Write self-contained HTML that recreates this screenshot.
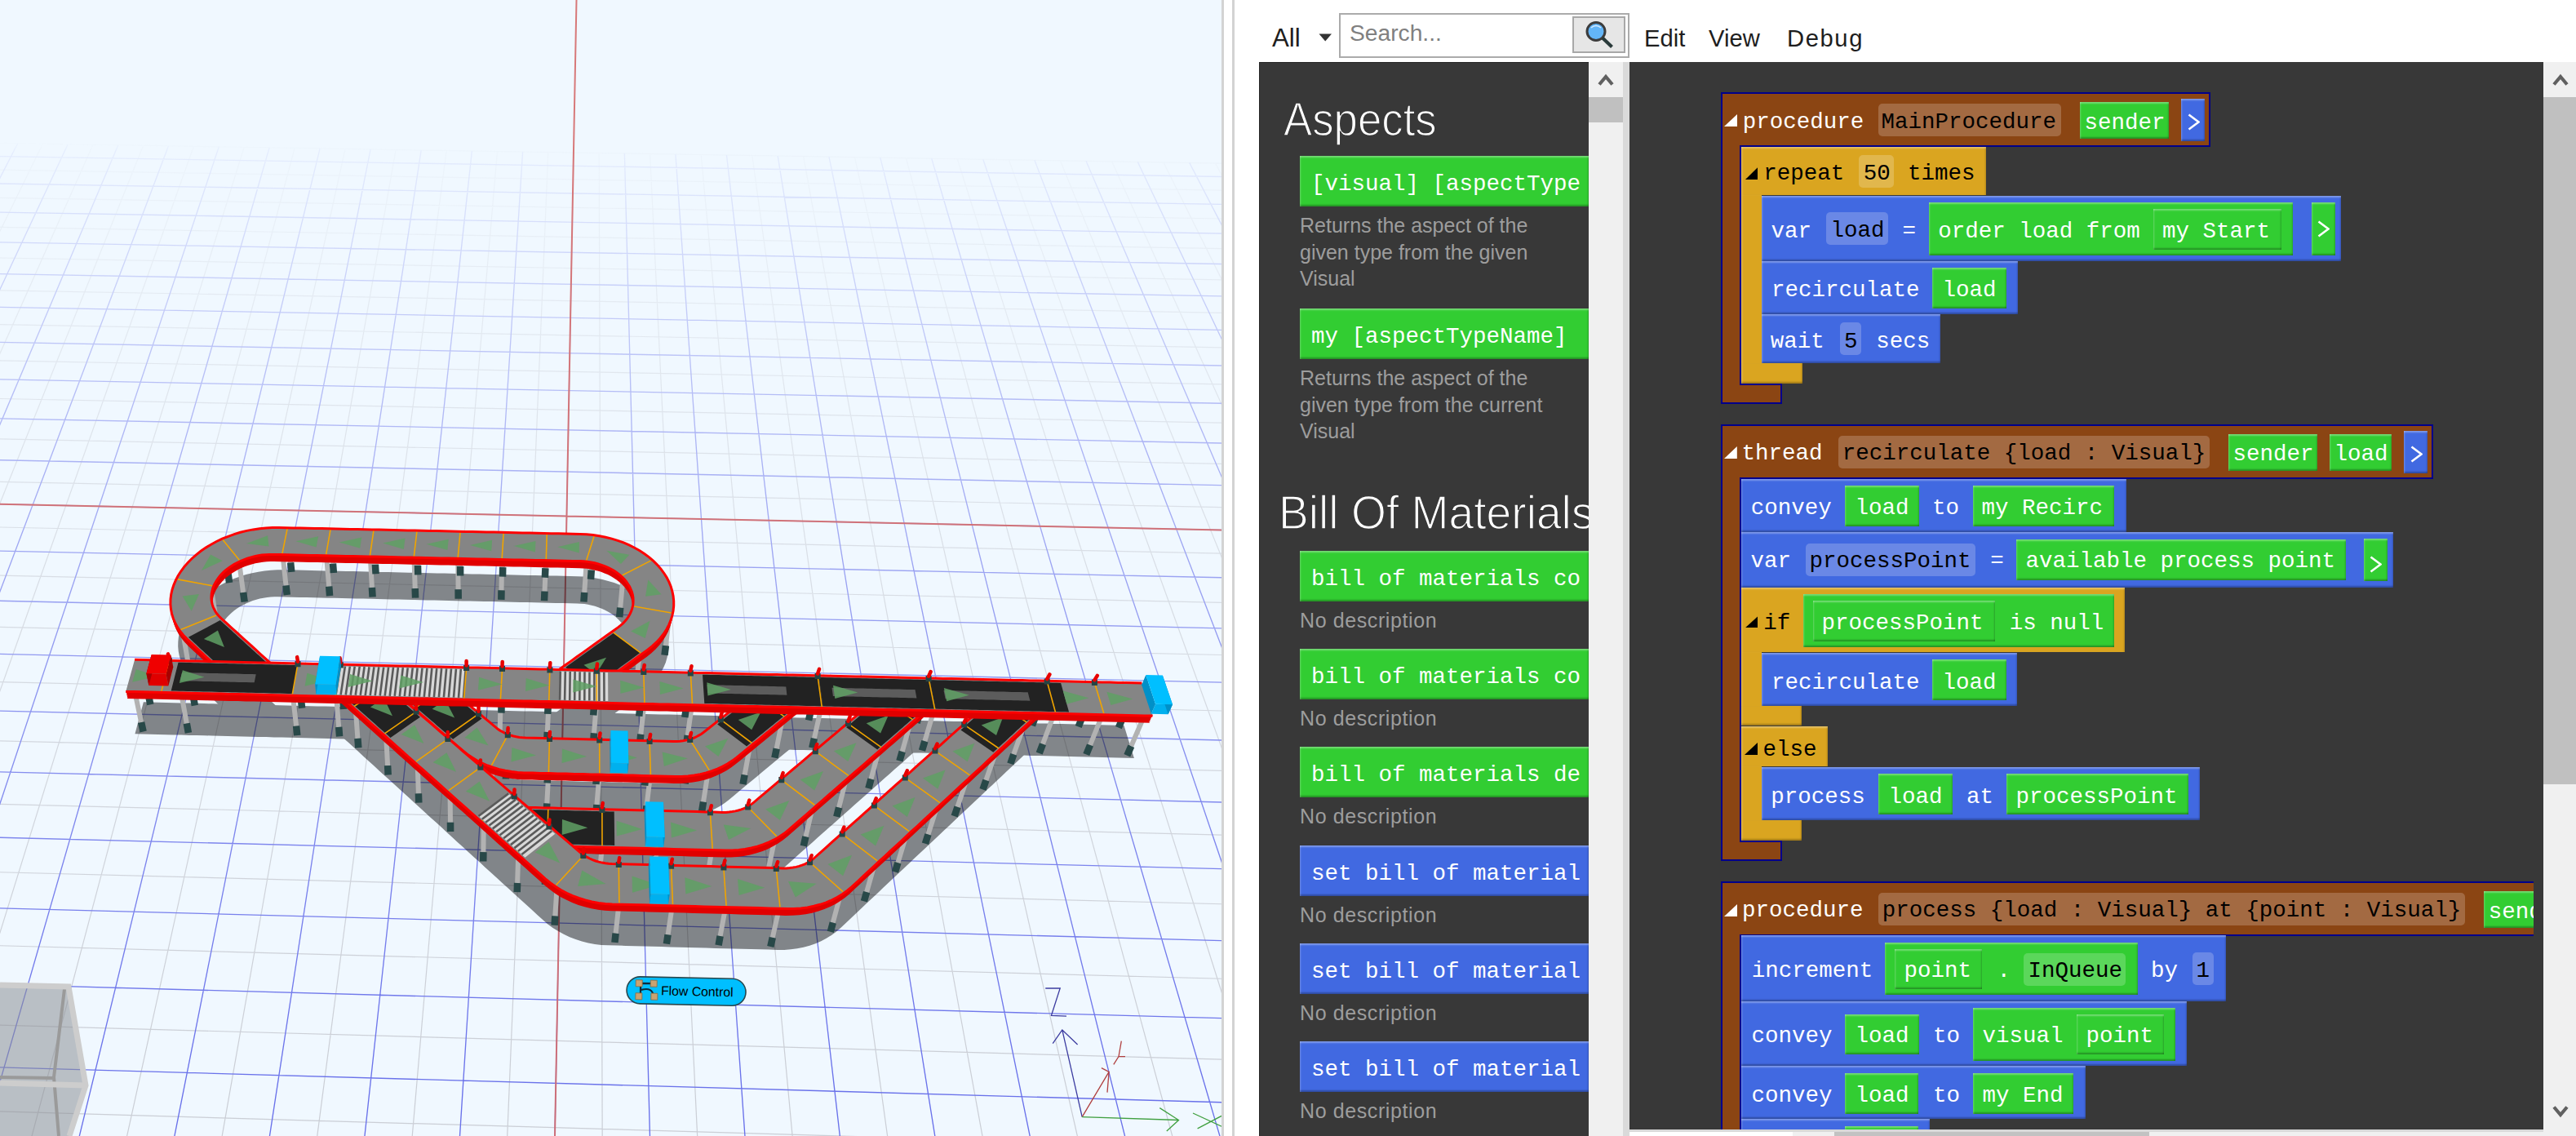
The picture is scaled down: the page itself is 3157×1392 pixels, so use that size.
<!DOCTYPE html>
<html><head><meta charset="utf-8"><style>
*{margin:0;padding:0}
html,body{width:3157px;height:1392px;overflow:hidden;background:#fff}
.r,.bb,.gb,.au,.t,.clip{position:absolute}
.clip{overflow:hidden}
.t{white-space:pre}
.m{font-family:'Liberation Mono', monospace}
.s{font-family:'Liberation Sans', sans-serif}
.bb{background:#4169e1;box-shadow:inset 0 3px 2px -1px rgba(255,255,255,.32),inset 2px 0 2px -1px rgba(255,255,255,.25),inset 0 -3px 2px -1px rgba(0,0,0,.28),inset -2px 0 2px -1px rgba(0,0,0,.2)}
.gb{background:#32cd32;box-shadow:inset 0 3px 2px -1px rgba(255,255,255,.32),inset 2px 0 2px -1px rgba(255,255,255,.25),inset 0 -3px 2px -1px rgba(0,0,0,.28),inset -2px 0 2px -1px rgba(0,0,0,.2)}
.au{background:#daa520}
.gh{box-shadow:inset 0 3px 2px -1px rgba(255,255,255,.3),inset 2px 0 2px -1px rgba(255,255,255,.3),inset -2px 0 2px -1px rgba(0,0,0,.2)}
.ga{box-shadow:inset 2px 0 2px -1px rgba(255,255,255,.3)}
.gf{box-shadow:inset 2px 0 2px -1px rgba(255,255,255,.3),inset 0 -3px 2px -1px rgba(0,0,0,.25),inset -2px 0 2px -1px rgba(0,0,0,.2)}
#v3d{position:absolute;left:0;top:0;width:1497px;height:1392px}
</style></head><body>
<div id="v3d"><svg width="1497" height="1392" viewBox="0 0 1497 1392"><rect width="1497" height="1392" fill="#f0f8ff"/><defs><linearGradient id="gf" gradientUnits="userSpaceOnUse" x1="0" y1="171" x2="0" y2="1560"><stop offset="0.000" stop-color="#fff" stop-opacity="0.00"/><stop offset="0.011" stop-color="#fff" stop-opacity="0.08"/><stop offset="0.023" stop-color="#fff" stop-opacity="0.10"/><stop offset="0.073" stop-color="#fff" stop-opacity="0.19"/><stop offset="0.128" stop-color="#fff" stop-opacity="0.29"/><stop offset="0.221" stop-color="#fff" stop-opacity="0.43"/><stop offset="0.332" stop-color="#fff" stop-opacity="0.57"/><stop offset="0.465" stop-color="#fff" stop-opacity="0.71"/><stop offset="0.628" stop-color="#fff" stop-opacity="0.85"/><stop offset="0.833" stop-color="#fff" stop-opacity="0.99"/><stop offset="1.000" stop-color="#fff" stop-opacity="1.00"/></linearGradient><mask id="gm"><rect width="1497" height="1392" fill="url(#gf)"/></mask></defs><g mask="url(#gm)" fill="none"><path d="M-5 293.3L52.4 176.3M-5 444.3L114 177.3M-5 629.1L175.6 178.3M-5 860.5L237.4 179.3M-5 1158.8L299.2 180.3M37.7 1397L361.1 181.4M154.5 1397L423.1 182.4M271.3 1397L485.1 183.4M388.1 1397L547.2 184.4M504.8 1397L609.5 185.5M621.5 1397L671.8 186.5M738.2 1397L734.2 187.5M854.9 1397L796.6 188.5M971.6 1397L859.2 189.6M1088.3 1397L921.8 190.6M1204.9 1397L984.6 191.6M1321.5 1397L1047.4 192.7M1438.1 1397L1110.3 193.7M1502 1230.9L1173.2 194.7M1502 929.5L1236.3 195.8M1502 694.6L1299.4 196.8M1502 506.3L1362.7 197.9M1502 352L1426 198.9M1502 223.3L1489.4 200M-5 1361.7L1200.9 1397M-5 1256L1502 1298.3M-5 1158.6L1502 1199.4M-5 1068.6L1502 1107.9M-5 985.2L1502 1023.2M-5 907.8L1502 944.5M-5 835.6L1502 871.1M-5 768.2L1502 802.6M-5 705.1L1502 738.5M-5 645.9L1502 678.3M-5 590.2L1502 621.8M-5 537.8L1502 568.5M-5 488.4L1502 518.3M-5 441.7L1502 470.9M-5 397.5L1502 426M-5 355.7L1502 383.4M-5 315.9L1502 343M-5 278.2L1502 304.7M-5 242.2L1502 268.1M-5 208L1502 233.3M-5 175.3L1502 200.2" stroke="#c0c3ca" stroke-opacity="0.8" stroke-width="1.2"/><path d="M-5 227.8L21.7 175.8M-5 365.2L83.2 176.8M-5 531.8L144.8 177.8M-5 737.9L206.5 178.8M-5 999.6L268.3 179.8M-5 1342.7L330.1 180.9M96.1 1397L392.1 181.9M212.9 1397L454.1 182.9M329.7 1397L516.2 183.9M446.4 1397L578.4 184.9M563.2 1397L640.6 186M679.9 1397L703 187M796.6 1397L765.4 188M913.3 1397L827.9 189.1M1029.9 1397L890.5 190.1M1146.6 1397L953.2 191.1M1263.2 1397L1016 192.2M1379.8 1397L1078.8 193.2M1496.4 1397L1141.7 194.2M1502 1070.3L1204.8 195.3M1502 805.2L1267.9 196.3M1502 595.5L1331 197.3M1502 425.5L1394.3 198.4M1502 284.9L1457.7 199.4M-5 1307.7L1502 1350.9M-5 1206.3L1502 1247.8M-5 1112.7L1502 1152.7M-5 1026.1L1502 1064.8M-5 945.8L1502 983.1M-5 871L1502 907.1M-5 801.3L1502 836.3M-5 736.1L1502 770M-5 675L1502 707.9M-5 617.6L1502 649.6M-5 563.6L1502 594.8M-5 512.8L1502 543.1M-5 464.8L1502 494.3M-5 419.3L1502 448.1M-5 376.3L1502 404.4M-5 335.5L1502 363M-5 296.8L1502 323.6M-5 260L1502 286.2M-5 224.9L1502 250.5M-5 191.5L1502 216.6" stroke="#6870ea" stroke-width="1.35"/></g><path d="M706.5 0L680 1392M-924.4 598.1L2371.3 668.1" stroke="#d46a6a" stroke-width="2" stroke-opacity="0.9"/><g fill="#000" opacity="0.46"><polygon points="302.8,896.7 296.8,891 290.8,885.3 284.8,879.6 278.9,873.9 273,868.3 267.2,862.7 261.4,857.1 255.6,851.5 249.8,846 244.1,840.6 238.4,835.1 233.9,830.4 230,825.5 226.6,820.4 223.7,815 221.5,809.5 219.8,803.8 218.7,798.1 218.2,792.2 218.3,786.4 218.9,780.5 220.2,774.6 222,768.8 224.3,763 227.1,757.4 230.5,751.9 234.4,746.5 238.7,741.4 243.4,736.4 248.6,731.7 254.2,727.2 260.1,722.9 266.4,719 272.9,715.4 279.7,712.1 286.8,709.1 294,706.4 301.4,704.1 309,702.2 316.6,700.7 324.3,699.5 332,698.7 339.8,698.3 347.4,698.3 356,698.4 364.5,698.6 373.1,698.8 381.6,699 390.2,699.2 398.7,699.4 407.3,699.6 415.8,699.8 424.4,700 433,700.1 441.5,700.3 450.1,700.5 458.6,700.7 467.2,700.9 475.8,701.1 484.3,701.3 492.9,701.5 501.5,701.7 510,701.8 518.6,702 527.2,702.2 535.8,702.4 544.3,702.6 552.9,702.8 561.5,703 570.1,703.2 578.7,703.4 587.3,703.5 595.9,703.7 604.4,703.9 613,704.1 621.6,704.3 630.2,704.5 638.8,704.7 647.4,704.9 656,705.1 664.6,705.2 673.2,705.4 681.8,705.6 690.4,705.8 699,706 707.6,706.2 715.3,706.6 723,707.3 730.6,708.4 738.1,710 745.4,711.9 752.6,714.1 759.6,716.7 766.3,719.7 772.7,723 778.9,726.6 784.7,730.5 790.1,734.8 795.2,739.3 799.8,744 804,749 807.8,754.2 811,759.5 813.8,765.1 816,770.7 817.6,776.5 818.8,782.4 819.3,788.3 819.3,794.2 818.7,800.2 817.5,806.1 815.8,811.9 813.4,817.6 810.5,823.2 807.1,828.6 803.1,833.8 798.6,838.8 793.5,843.6 788,848 781.1,853.2 774.2,858.4 767.2,863.7 760.2,868.9 753.2,874.2 746.1,879.5 739,884.9 731.8,890.3 724.7,895.7 717.4,901.1 710.2,906.6 674.8,877.8 682,872.5 689.2,867.2 696.4,862 703.6,856.8 710.7,851.5 717.7,846.4 724.8,841.2 731.8,836.1 738.7,831 745.7,825.9 752.6,820.9 755.7,818.4 758.6,815.7 761.2,812.9 763.5,810 765.6,807 767.3,803.8 768.7,800.6 769.8,797.3 770.5,794 770.9,790.6 771,787.2 770.8,783.8 770.2,780.5 769.4,777.1 768.2,773.9 766.7,770.7 764.9,767.6 762.8,764.6 760.4,761.7 757.8,758.9 754.9,756.3 751.8,753.8 748.5,751.5 745,749.4 741.2,747.4 737.4,745.7 733.3,744.2 729.2,742.8 724.9,741.7 720.6,740.8 716.2,740.1 711.7,739.7 707.3,739.5 698.5,739.3 689.7,739.1 681,738.9 672.2,738.7 663.5,738.5 654.7,738.3 646,738.1 637.2,737.9 628.5,737.7 619.7,737.5 611,737.3 602.3,737.1 593.5,736.9 584.8,736.7 576.1,736.6 567.3,736.4 558.6,736.2 549.9,736 541.1,735.8 532.4,735.6 523.7,735.4 514.9,735.2 506.2,735 497.5,734.8 488.8,734.6 480.1,734.4 471.4,734.2 462.6,734 453.9,733.8 445.2,733.6 436.5,733.4 427.8,733.2 419.1,733 410.4,732.8 401.7,732.7 393,732.5 384.3,732.3 375.6,732.1 366.9,731.9 358.2,731.7 349.5,731.5 340.8,731.3 336.3,731.3 331.9,731.5 327.4,732 322.9,732.7 318.4,733.6 314.1,734.8 309.8,736.1 305.6,737.7 301.5,739.4 297.6,741.4 293.8,743.5 290.3,745.8 286.9,748.3 283.7,750.9 280.8,753.7 278.1,756.5 275.7,759.5 273.5,762.6 271.7,765.8 270.1,769.1 268.8,772.4 267.9,775.7 267.3,779.1 267,782.4 267,785.7 267.4,789.1 268.1,792.3 269.1,795.5 270.5,798.6 272.1,801.6 274.1,804.5 276.4,807.2 279,809.9 284.7,815.2 290.5,820.5 296.3,825.9 302.1,831.3 308,836.7 313.9,842.2 319.8,847.7 325.7,853.2 331.7,858.8 337.7,864.3 343.8,869.9"/><polygon points="175.9,860.3 185.1,860.5 194.4,860.7 203.7,861 212.9,861.2 222.2,861.4 231.5,861.6 240.8,861.8 250.1,862.1 259.4,862.3 268.6,862.5 277.9,862.7 287.2,862.9 296.5,863.2 305.8,863.4 315.1,863.6 324.4,863.8 333.7,864 343,864.3 352.3,864.5 361.6,864.7 370.9,864.9 380.2,865.2 389.5,865.4 398.8,865.6 408.2,865.8 417.5,866 426.8,866.3 436.1,866.5 445.4,866.7 454.7,866.9 464.1,867.2 473.4,867.4 482.7,867.6 492.1,867.8 501.4,868 510.7,868.3 520.1,868.5 529.4,868.7 538.7,868.9 548.1,869.2 557.4,869.4 566.8,869.6 576.1,869.8 585.5,870 594.8,870.3 604.2,870.5 613.5,870.7 622.9,870.9 632.2,871.2 641.6,871.4 651,871.6 660.3,871.8 669.7,872 679.1,872.3 688.4,872.5 697.8,872.7 707.2,872.9 716.6,873.2 725.9,873.4 735.3,873.6 744.7,873.8 754.1,874.1 763.5,874.3 772.8,874.5 782.2,874.7 791.6,874.9 801,875.2 810.4,875.4 819.8,875.6 829.2,875.8 838.6,876.1 848,876.3 857.4,876.5 866.8,876.7 876.2,877 885.6,877.2 895,877.4 904.5,877.6 913.9,877.9 923.3,878.1 932.7,878.3 942.1,878.5 951.6,878.8 961,879 970.4,879.2 979.8,879.4 989.3,879.6 998.7,879.9 1008.1,880.1 1017.6,880.3 1027,880.5 1036.4,880.8 1045.9,881 1055.3,881.2 1064.8,881.4 1074.2,881.7 1083.7,881.9 1093.1,882.1 1102.6,882.3 1112,882.6 1121.5,882.8 1130.9,883 1140.4,883.2 1149.9,883.5 1159.3,883.7 1168.8,883.9 1178.3,884.1 1187.7,884.4 1197.2,884.6 1206.7,884.8 1216.2,885 1225.6,885.3 1235.1,885.5 1244.6,885.7 1254.1,886 1263.6,886.2 1273.1,886.4 1282.5,886.6 1292,886.9 1301.5,887.1 1311,887.3 1320.5,887.5 1330,887.8 1339.5,888 1349,888.2 1358.5,888.4 1368,888.7 1377.5,888.9 1389.9,928.9 1380.2,928.7 1370.6,928.4 1360.9,928.2 1351.2,928 1341.5,927.7 1331.8,927.5 1322.1,927.3 1312.5,927 1302.8,926.8 1293.1,926.6 1283.4,926.3 1273.8,926.1 1264.1,925.9 1254.4,925.6 1244.8,925.4 1235.1,925.2 1225.4,924.9 1215.8,924.7 1206.1,924.5 1196.5,924.2 1186.8,924 1177.2,923.8 1167.5,923.5 1157.9,923.3 1148.2,923.1 1138.6,922.8 1129,922.6 1119.3,922.4 1109.7,922.1 1100.1,921.9 1090.4,921.7 1080.8,921.4 1071.2,921.2 1061.5,921 1051.9,920.7 1042.3,920.5 1032.7,920.3 1023.1,920 1013.4,919.8 1003.8,919.6 994.2,919.3 984.6,919.1 975,918.9 965.4,918.6 955.8,918.4 946.2,918.2 936.6,917.9 927,917.7 917.4,917.5 907.8,917.2 898.2,917 888.6,916.8 879,916.5 869.4,916.3 859.8,916.1 850.3,915.8 840.7,915.6 831.1,915.4 821.5,915.1 812,914.9 802.4,914.7 792.8,914.4 783.2,914.2 773.7,914 764.1,913.7 754.5,913.5 745,913.3 735.4,913.1 725.9,912.8 716.3,912.6 706.8,912.4 697.2,912.1 687.7,911.9 678.1,911.7 668.6,911.4 659,911.2 649.5,911 639.9,910.7 630.4,910.5 620.9,910.3 611.3,910 601.8,909.8 592.3,909.6 582.7,909.4 573.2,909.1 563.7,908.9 554.2,908.7 544.6,908.4 535.1,908.2 525.6,908 516.1,907.7 506.6,907.5 497.1,907.3 487.6,907.1 478.1,906.8 468.6,906.6 459,906.4 449.5,906.1 440,905.9 430.6,905.7 421.1,905.4 411.6,905.2 402.1,905 392.6,904.8 383.1,904.5 373.6,904.3 364.1,904.1 354.6,903.8 345.2,903.6 335.7,903.4 326.2,903.1 316.7,902.9 307.3,902.7 297.8,902.5 288.3,902.2 278.9,902 269.4,901.8 259.9,901.5 250.5,901.3 241,901.1 231.6,900.9 222.1,900.6 212.6,900.4 203.2,900.2 193.7,899.9 184.3,899.7 174.9,899.5 165.4,899.2"/><polygon points="526.7,874.3 533.2,879.9 539.7,885.4 546.2,891 552.7,896.7 559.3,902.3 566,908 572.6,913.8 579.3,919.5 586.1,925.3 592.8,931.1 599.6,937 606.5,942.9 609,944.9 611.8,946.8 614.7,948.5 617.8,950.1 621,951.5 624.3,952.7 627.7,953.7 631.2,954.5 634.8,955.1 638.4,955.5 642.1,955.7 651.9,956 661.7,956.2 671.5,956.4 681.3,956.7 691.1,956.9 700.9,957.2 710.7,957.4 720.5,957.7 730.4,957.9 740.2,958.1 750,958.4 759.8,958.6 769.7,958.9 779.5,959.1 789.3,959.4 799.1,959.6 809,959.8 818.8,960.1 822.5,960.1 826.1,959.8 829.7,959.4 833.2,958.8 836.7,957.9 840,956.9 843.2,955.7 846.3,954.2 849.2,952.7 852,950.9 854.5,949 861.4,943.4 868.3,937.9 875.1,932.4 881.9,926.9 888.6,921.4 895.3,916 902,910.6 908.6,905.3 915.2,899.9 921.8,894.6 928.3,889.3 934.8,884.1 973.9,912.9 967.4,918.4 960.9,923.8 954.3,929.2 947.7,934.7 941.1,940.3 934.4,945.8 927.7,951.4 921,957 914.2,962.6 907.4,968.3 900.6,974 893.7,979.7 888.5,983.7 883,987.4 877,990.7 870.7,993.7 864.2,996.2 857.3,998.4 850.3,1000.2 843,1001.5 835.6,1002.4 828.1,1002.9 820.6,1002.9 810.5,1002.7 800.5,1002.4 790.5,1002.2 780.5,1001.9 770.4,1001.7 760.4,1001.4 750.4,1001.2 740.4,1000.9 730.4,1000.7 720.4,1000.4 710.4,1000.1 700.4,999.9 690.3,999.6 680.3,999.4 670.3,999.1 660.3,998.9 650.3,998.6 640.4,998.4 632.8,998 625.4,997.1 618,995.9 610.8,994.2 603.8,992 597,989.5 590.4,986.6 584.2,983.4 578.3,979.8 572.7,975.8 567.6,971.6 560.7,965.5 553.9,959.5 547.2,953.6 540.5,947.6 533.8,941.7 527.1,935.8 520.5,930 514,924.2 507.4,918.4 500.9,912.6 494.5,906.9 488,901.2"/><polygon points="633.8,1040.4 643.9,1040.7 654,1040.9 664.1,1041.2 674.2,1041.5 684.4,1041.7 694.5,1042 704.6,1042.2 714.7,1042.5 724.8,1042.7 734.9,1043 745.1,1043.3 755.2,1043.5 765.3,1043.8 775.5,1044 785.6,1044.3 795.7,1044.6 805.9,1044.8 816,1045.1 826.2,1045.3 836.3,1045.6 846.4,1045.9 856.6,1046.1 866.7,1046.4 876.9,1046.6 880.7,1046.6 884.5,1046.4 888.2,1045.9 891.9,1045.2 895.4,1044.3 898.9,1043.2 902.2,1041.9 905.3,1040.3 908.3,1038.6 911.1,1036.7 913.7,1034.6 920.5,1028.8 927.2,1023 933.9,1017.3 940.6,1011.5 947.2,1005.9 953.8,1000.2 960.3,994.6 966.8,988.9 973.3,983.4 979.8,977.8 986.2,972.3 992.6,966.8 998.9,961.3 1005.3,955.9 1011.6,950.5 1017.8,945.1 1024,939.7 1030.2,934.4 1036.4,929.1 1042.5,923.8 1048.6,918.6 1054.7,913.4 1060.8,908.2 1066.8,903 1072.8,897.8 1078.7,892.7 1084.6,887.6 1125.9,916.6 1120,921.8 1114,927.1 1108.1,932.4 1102.1,937.7 1096,943.1 1090,948.4 1083.9,953.8 1077.8,959.3 1071.6,964.7 1065.5,970.2 1059.2,975.7 1053,981.3 1046.7,986.8 1040.4,992.4 1034.1,998 1027.7,1003.7 1021.3,1009.4 1014.9,1015.1 1008.4,1020.8 1001.9,1026.6 995.4,1032.4 988.8,1038.2 982.2,1044.1 975.5,1050 968.9,1055.9 962.1,1061.9 955.4,1067.9 950.1,1072.2 944.4,1076.2 938.3,1079.8 931.9,1083 925.1,1085.8 918.1,1088.1 910.8,1090 903.3,1091.5 895.6,1092.5 887.8,1093 879.9,1093 869.6,1092.7 859.2,1092.5 848.9,1092.2 838.5,1091.9 828.1,1091.7 817.8,1091.4 807.4,1091.1 797.1,1090.8 786.8,1090.6 776.4,1090.3 766.1,1090 755.7,1089.8 745.4,1089.5 735.1,1089.2 724.7,1089 714.4,1088.7 704.1,1088.4 693.8,1088.1 683.4,1087.9 673.1,1087.6 662.8,1087.3 652.5,1087.1 642.2,1086.8 631.9,1086.5"/><polygon points="455.1,872.6 461.1,877.9 467.1,883.2 473.2,888.6 479.2,893.9 485.3,899.3 491.5,904.8 497.6,910.2 503.8,915.7 510.1,921.2 516.3,926.8 522.6,932.3 529,937.9 535.3,943.6 541.7,949.2 548.1,954.9 554.6,960.6 561.1,966.4 567.6,972.2 574.2,978 580.8,983.8 587.4,989.7 594.1,995.6 600.8,1001.5 607.6,1007.5 614.3,1013.5 621.2,1019.5 628,1025.6 634.9,1031.7 641.8,1037.8 648.8,1044 655.8,1050.2 662.9,1056.4 669.9,1062.7 677.1,1069 684.2,1075.4 691.4,1081.7 698.7,1088.2 706,1094.6 708.8,1096.9 711.8,1099.1 715,1101.1 718.4,1102.9 721.9,1104.5 725.5,1105.9 729.2,1107 733,1107.9 736.9,1108.6 740.8,1109.1 744.7,1109.3 755.4,1109.6 766.1,1109.9 776.8,1110.2 787.5,1110.5 798.2,1110.7 808.9,1111 819.7,1111.3 830.4,1111.6 841.1,1111.9 851.8,1112.1 862.5,1112.4 873.3,1112.7 884,1113 894.7,1113.3 905.5,1113.6 916.2,1113.8 926.9,1114.1 937.7,1114.4 948.4,1114.7 952.3,1114.7 956.2,1114.4 960,1113.9 963.8,1113.2 967.4,1112.2 970.9,1111 974.3,1109.6 977.5,1108 980.5,1106.1 983.3,1104.1 986,1101.9 992.7,1095.8 999.3,1089.8 1005.9,1083.7 1012.5,1077.7 1019.1,1071.7 1025.6,1065.8 1032.1,1059.9 1038.5,1054 1045,1048.2 1051.3,1042.3 1057.7,1036.5 1064,1030.8 1070.3,1025.1 1076.6,1019.4 1082.8,1013.7 1089,1008 1095.1,1002.4 1101.3,996.8 1107.3,991.3 1113.4,985.8 1119.5,980.3 1125.5,974.8 1131.4,969.3 1137.4,963.9 1143.3,958.5 1149.2,953.2 1155,947.8 1160.9,942.5 1166.7,937.2 1172.4,932 1178.2,926.7 1183.9,921.5 1189.6,916.3 1195.2,911.2 1200.9,906 1206.5,900.9 1212,895.9 1217.6,890.8 1260.7,919.9 1255.2,925.1 1249.7,930.3 1244.1,935.6 1238.5,940.8 1232.9,946.1 1227.2,951.5 1221.5,956.8 1215.8,962.2 1210,967.6 1204.3,973 1198.5,978.5 1192.6,984 1186.8,989.5 1180.9,995.1 1175,1000.6 1169,1006.3 1163,1011.9 1157,1017.5 1151,1023.2 1144.9,1029 1138.8,1034.7 1132.7,1040.5 1126.5,1046.3 1120.3,1052.1 1114.1,1058 1107.8,1063.9 1101.5,1069.8 1095.2,1075.8 1088.8,1081.8 1082.4,1087.8 1076,1093.9 1069.5,1100 1063,1106.1 1056.5,1112.3 1049.9,1118.4 1043.3,1124.7 1036.7,1130.9 1030,1137.2 1024.7,1141.8 1019,1146 1012.8,1149.8 1006.3,1153.2 999.4,1156.2 992.2,1158.7 984.7,1160.8 977,1162.3 969.2,1163.3 961.2,1163.9 953.1,1163.9 942.1,1163.6 931.1,1163.3 920.2,1163 909.2,1162.7 898.2,1162.4 887.3,1162.2 876.3,1161.9 865.4,1161.6 854.4,1161.3 843.5,1161 832.5,1160.7 821.6,1160.4 810.6,1160.1 799.7,1159.8 788.8,1159.5 777.8,1159.2 766.9,1158.9 756,1158.6 745,1158.3 736.9,1157.9 728.9,1156.9 720.9,1155.4 713.1,1153.5 705.5,1151 698.1,1148.2 690.9,1144.8 684.1,1141.1 677.5,1136.9 671.4,1132.4 665.7,1127.5 658.4,1120.9 651.2,1114.3 644,1107.8 636.8,1101.2 629.7,1094.8 622.6,1088.3 615.6,1081.9 608.6,1075.5 601.7,1069.2 594.7,1062.9 587.9,1056.6 581,1050.4 574.2,1044.2 567.5,1038 560.7,1031.9 554,1025.8 547.4,1019.7 540.8,1013.6 534.2,1007.6 527.6,1001.7 521.1,995.7 514.6,989.8 508.2,984 501.8,978.1 495.4,972.3 489.1,966.5 482.8,960.8 476.5,955 470.3,949.4 464,943.7 457.9,938.1 451.7,932.5 445.6,926.9 439.5,921.3 433.5,915.8 427.5,910.3 421.5,904.9 415.5,899.5"/></g><path d="M224.9 779.3L230.4 811.2M264.6 763.2L269.5 795.1M220.9 718.7L226.4 750.6M259.7 725.9L264.6 757.8M274.9 670.9L279.5 702.7M293.8 694.1L298.1 726M352.7 657.6L356.1 689.4M347.1 685.7L350.5 717.5M405.4 658.8L408 690.6M400.5 686.9L403.2 718.7M458.2 659.9L459.9 691.7M454.1 688.1L455.9 719.9M511 661.1L512 692.8M507.7 689.2L508.7 721.1M563.9 662.2L564.1 694M561.4 690.4L561.6 722.2M616.8 663.3L616.2 695.1M615.1 691.6L614.5 723.4M669.8 664.5L668.4 696.3M668.9 692.8L667.5 724.6M727.1 666.7L724.8 698.5M718.4 694.2L716.2 726M795.6 696.1L792.3 728M763.1 712.8L760.2 744.7M819.7 759.3L815.9 791.2M778.2 751.8L775 783.7M783 807.8L779.7 839.7M752.1 784.5L749.3 816.4M255 809.5L260.2 841.4M290.6 787.6L295.1 819.5M764.6 821.4L761.5 853.2M733.7 797.8L731.1 829.7" stroke="#b2b2b2" stroke-width="6"/><path d="M230.4 811.2L232.4 822.7M269.5 795.1L271.3 806.6M226.4 750.6L228.4 762.1M264.6 757.8L266.3 769.3M279.5 702.7L281.1 714.2M298.1 726L299.7 737.5M356.1 689.4L357.3 700.9M350.5 717.5L351.8 729M408 690.6L408.9 702M403.2 718.7L404.1 730.2M459.9 691.7L460.6 703.2M455.9 719.9L456.6 731.4M512 692.8L512.3 704.3M508.7 721.1L509.1 732.6M564.1 694L564.1 705.5M561.6 722.2L561.7 733.7M616.2 695.1L616 706.6M614.5 723.4L614.3 734.9M668.4 696.3L667.9 707.7M667.5 724.6L667 736.1M724.8 698.5L724 709.9M716.2 726L715.4 737.5M792.3 728L791.1 739.5M760.2 744.7L759.2 756.2M815.9 791.2L814.5 802.7M775 783.7L773.9 795.2M779.7 839.7L778.5 851.2M749.3 816.4L748.3 827.9M260.2 841.4L262 852.9M295.1 819.5L296.7 831M761.5 853.2L760.4 864.7M731.1 829.7L730.2 841.1" stroke="#284848" stroke-width="8.5"/><g fill="#e00000"><polygon points="296.5,853.4 290.4,847.6 284.3,841.9 278.2,836.2 272.2,830.5 266.2,824.9 260.2,819.3 254.3,813.7 248.4,808.2 242.5,802.6 236.7,797.2 230.9,791.7 226.4,787 222.3,782.1 218.9,777 216,771.6 213.7,766.1 212,760.4 210.9,754.7 210.5,748.8 210.6,743 211.3,737.1 212.5,731.2 214.4,725.4 216.8,719.7 219.7,714 223.2,708.5 227.1,703.2 231.6,698 236.4,693.1 241.7,688.3 247.4,683.8 253.5,679.6 259.9,675.7 266.6,672.1 273.6,668.8 280.8,665.8 288.2,663.2 295.7,660.9 303.4,659 311.2,657.4 319.1,656.2 327,655.4 334.9,655 342.7,655 351.5,655.2 360.2,655.4 368.9,655.6 377.6,655.8 386.3,655.9 395.1,656.1 403.8,656.3 412.5,656.5 421.3,656.7 430,656.9 438.7,657.1 447.5,657.3 456.2,657.5 465,657.6 473.7,657.8 482.4,658 491.2,658.2 499.9,658.4 508.7,658.6 517.4,658.8 526.2,659 535,659.2 543.7,659.3 552.5,659.5 561.2,659.7 570,659.9 578.7,660.1 587.5,660.3 596.3,660.5 605,660.7 613.8,660.9 622.6,661 631.4,661.2 640.1,661.4 648.9,661.6 657.7,661.8 666.5,662 675.2,662.2 684,662.4 692.8,662.6 701.6,662.7 710.4,662.9 718.2,663.3 726.1,664 733.8,665.2 741.5,666.7 749,668.6 756.3,670.8 763.4,673.4 770.3,676.4 776.9,679.7 783.1,683.3 789.1,687.2 794.7,691.4 799.8,695.9 804.6,700.7 808.9,705.6 812.7,710.8 816.1,716.2 818.9,721.7 821.1,727.4 822.9,733.2 824,739 824.6,744.9 824.6,750.9 824,756.8 822.8,762.7 821,768.5 818.7,774.2 815.7,779.8 812.2,785.2 808.1,790.4 803.5,795.4 798.4,800.2 792.8,804.7 785.8,809.8 778.7,815.1 771.6,820.3 764.4,825.6 757.2,830.9 750,836.2 742.7,841.6 735.4,847 728.1,852.4 720.7,857.8 713.3,863.3 677,834.5 684.4,829.2 691.8,823.9 699.1,818.6 706.4,813.4 713.7,808.2 720.9,803 728.1,797.8 735.3,792.7 742.4,787.6 749.4,782.5 756.5,777.5 759.7,775 762.6,772.3 765.3,769.5 767.7,766.6 769.7,763.6 771.5,760.4 772.9,757.2 774,753.9 774.8,750.6 775.2,747.2 775.3,743.8 775,740.4 774.4,737.1 773.5,733.8 772.3,730.5 770.8,727.3 768.9,724.2 766.8,721.2 764.4,718.3 761.7,715.6 758.8,712.9 755.6,710.5 752.2,708.2 748.6,706 744.8,704.1 740.8,702.4 736.7,700.8 732.5,699.5 728.1,698.4 723.7,697.5 719.2,696.8 714.6,696.4 710,696.2 701.1,696 692.2,695.8 683.2,695.6 674.3,695.4 665.3,695.2 656.4,695 647.5,694.8 638.5,694.6 629.6,694.4 620.7,694.2 611.8,694 602.8,693.8 593.9,693.6 585,693.4 576.1,693.2 567.2,693 558.2,692.8 549.3,692.6 540.4,692.4 531.5,692.3 522.6,692.1 513.7,691.9 504.8,691.7 495.9,691.5 487,691.3 478.1,691.1 469.2,690.9 460.3,690.7 451.4,690.5 442.5,690.3 433.6,690.1 424.7,689.9 415.8,689.7 406.9,689.5 398,689.3 389.1,689.1 380.3,688.9 371.4,688.7 362.5,688.5 353.6,688.4 344.7,688.2 335.9,688 331.3,688 326.7,688.2 322.1,688.7 317.6,689.4 313,690.3 308.6,691.4 304.2,692.8 299.9,694.3 295.7,696.1 291.7,698 287.9,700.2 284.2,702.5 280.8,704.9 277.5,707.5 274.5,710.3 271.7,713.2 269.3,716.2 267.1,719.3 265.1,722.4 263.5,725.7 262.2,729 261.3,732.3 260.6,735.7 260.3,739 260.3,742.4 260.7,745.7 261.4,748.9 262.5,752.1 263.8,755.2 265.5,758.2 267.5,761.1 269.9,763.8 272.5,766.5 278.3,771.8 284.2,777.1 290.1,782.5 296.1,787.9 302,793.3 308,798.8 314.1,804.3 320.1,809.8 326.2,815.4 332.4,821 338.5,826.6"/><polygon points="296.3,851.7 290.2,845.9 284,840.2 278,834.5 271.9,828.8 265.9,823.2 260,817.6 254,812 248.1,806.5 242.3,800.9 236.4,795.4 230.6,790 226.1,785.3 222,780.4 218.6,775.2 215.7,769.9 213.4,764.4 211.7,758.7 210.6,753 210.2,747.1 210.3,741.3 210.9,735.4 212.2,729.5 214.1,723.7 216.5,718 219.4,712.3 222.9,706.8 226.8,701.5 231.3,696.3 236.2,691.3 241.5,686.6 247.2,682.1 253.2,677.9 259.6,674 266.3,670.4 273.3,667.1 280.5,664.1 287.9,661.5 295.5,659.2 303.2,657.3 311,655.7 318.9,654.5 326.8,653.7 334.7,653.3 342.5,653.3 351.3,653.5 360,653.7 368.7,653.9 377.5,654.1 386.2,654.2 394.9,654.4 403.7,654.6 412.4,654.8 421.1,655 429.9,655.2 438.6,655.4 447.4,655.6 456.1,655.8 464.9,655.9 473.6,656.1 482.4,656.3 491.1,656.5 499.9,656.7 508.6,656.9 517.4,657.1 526.2,657.3 534.9,657.5 543.7,657.6 552.4,657.8 561.2,658 570,658.2 578.8,658.4 587.5,658.6 596.3,658.8 605.1,659 613.8,659.2 622.6,659.3 631.4,659.5 640.2,659.7 649,659.9 657.8,660.1 666.5,660.3 675.3,660.5 684.1,660.7 692.9,660.9 701.7,661 710.5,661.2 718.4,661.6 726.2,662.3 733.9,663.5 741.6,665 749.1,666.9 756.4,669.1 763.6,671.7 770.4,674.7 777,678 783.3,681.6 789.3,685.5 794.8,689.7 800,694.2 804.8,699 809.1,703.9 812.9,709.1 816.3,714.5 819.1,720 821.3,725.7 823.1,731.5 824.2,737.3 824.8,743.2 824.8,749.2 824.2,755.1 823,761 821.2,766.8 818.9,772.5 815.9,778.1 812.4,783.5 808.3,788.7 803.7,793.7 798.6,798.5 793,802.9 785.9,808.1 778.8,813.4 771.7,818.6 764.6,823.9 757.4,829.2 750.1,834.5 742.9,839.9 735.6,845.2 728.2,850.7 720.8,856.1 713.4,861.6 677.1,832.8 684.5,827.5 691.9,822.2 699.3,816.9 706.6,811.7 713.8,806.5 721.1,801.3 728.2,796.1 735.4,791 742.5,785.9 749.6,780.8 756.6,775.8 759.9,773.3 762.8,770.6 765.5,767.8 767.8,764.9 769.9,761.9 771.7,758.7 773.1,755.5 774.2,752.2 774.9,748.9 775.4,745.5 775.4,742.1 775.2,738.7 774.6,735.4 773.7,732.1 772.5,728.8 770.9,725.6 769.1,722.5 767,719.5 764.5,716.6 761.8,713.8 758.9,711.2 755.7,708.8 752.3,706.5 748.7,704.3 744.9,702.4 740.9,700.7 736.8,699.1 732.6,697.8 728.2,696.7 723.8,695.8 719.3,695.1 714.7,694.7 710.2,694.5 701.2,694.3 692.3,694.1 683.3,693.9 674.4,693.7 665.4,693.5 656.5,693.3 647.5,693.1 638.6,692.9 629.7,692.7 620.7,692.5 611.8,692.3 602.9,692.1 593.9,691.9 585,691.7 576.1,691.5 567.1,691.3 558.2,691.1 549.3,690.9 540.4,690.7 531.5,690.5 522.5,690.4 513.6,690.2 504.7,690 495.8,689.8 486.9,689.6 478,689.4 469.1,689.2 460.2,689 451.3,688.8 442.4,688.6 433.5,688.4 424.6,688.2 415.7,688 406.8,687.8 397.9,687.6 389,687.4 380.1,687.2 371.2,687 362.3,686.8 353.4,686.7 344.6,686.5 335.7,686.3 331.1,686.3 326.5,686.5 321.9,687 317.4,687.7 312.8,688.6 308.4,689.7 304,691.1 299.7,692.6 295.5,694.4 291.5,696.3 287.6,698.5 284,700.8 280.5,703.2 277.3,705.8 274.3,708.6 271.5,711.5 269,714.5 266.8,717.6 264.9,720.7 263.3,724 262,727.3 261,730.6 260.4,734 260.1,737.3 260.1,740.6 260.4,744 261.2,747.2 262.2,750.4 263.6,753.5 265.3,756.5 267.3,759.4 269.6,762.1 272.2,764.7 278.1,770.1 284,775.4 289.9,780.8 295.8,786.2 301.8,791.6 307.8,797.1 313.8,802.6 319.9,808.1 326,813.7 332.2,819.3 338.3,824.9"/><polygon points="296,850 289.9,844.2 283.8,838.5 277.7,832.8 271.7,827.1 265.7,821.5 259.7,815.9 253.8,810.3 247.9,804.7 242,799.2 236.1,793.7 230.3,788.3 225.8,783.6 221.7,778.7 218.3,773.5 215.4,768.2 213.1,762.7 211.4,757 210.3,751.3 209.8,745.4 210,739.6 210.6,733.7 211.9,727.8 213.8,722 216.2,716.2 219.1,710.6 222.6,705.1 226.6,699.8 231,694.6 235.9,689.6 241.2,684.9 246.9,680.4 253,676.2 259.4,672.3 266.1,668.7 273.1,665.4 280.3,662.4 287.7,659.8 295.3,657.5 303,655.6 310.8,654 318.7,652.8 326.6,652 334.5,651.6 342.4,651.6 351.1,651.8 359.8,652 368.6,652.2 377.3,652.4 386,652.5 394.8,652.7 403.5,652.9 412.3,653.1 421,653.3 429.8,653.5 438.5,653.7 447.3,653.9 456,654.1 464.8,654.2 473.5,654.4 482.3,654.6 491.1,654.8 499.8,655 508.6,655.2 517.4,655.4 526.1,655.6 534.9,655.7 543.7,655.9 552.4,656.1 561.2,656.3 570,656.5 578.8,656.7 587.5,656.9 596.3,657.1 605.1,657.3 613.9,657.4 622.7,657.6 631.4,657.8 640.2,658 649,658.2 657.8,658.4 666.6,658.6 675.4,658.8 684.2,659 693,659.2 701.8,659.3 710.6,659.5 718.5,659.9 726.3,660.6 734.1,661.8 741.7,663.3 749.2,665.2 756.6,667.4 763.7,670 770.6,673 777.2,676.3 783.5,679.9 789.4,683.8 795,688 800.2,692.5 805,697.3 809.3,702.2 813.1,707.4 816.5,712.8 819.3,718.3 821.6,724 823.3,729.7 824.4,735.6 825,741.5 825,747.4 824.4,753.4 823.2,759.3 821.5,765.1 819.1,770.8 816.1,776.4 812.6,781.8 808.5,787 803.9,792 798.8,796.8 793.2,801.2 786.1,806.4 779,811.6 771.9,816.9 764.7,822.2 757.5,827.5 750.3,832.8 743,838.2 735.7,843.5 728.3,849 721,854.4 713.5,859.9 677.2,831.1 684.6,825.8 692,820.5 699.4,815.2 706.7,810 713.9,804.8 721.2,799.6 728.4,794.4 735.5,789.3 742.7,784.2 749.7,779.1 756.8,774.1 760,771.6 763,768.9 765.6,766.1 768,763.2 770.1,760.2 771.8,757 773.2,753.8 774.3,750.5 775.1,747.2 775.5,743.8 775.6,740.4 775.4,737 774.8,733.7 773.9,730.4 772.6,727.1 771.1,723.9 769.3,720.8 767.1,717.8 764.7,714.9 762,712.1 759.1,709.5 755.9,707.1 752.5,704.8 748.8,702.6 745,700.7 741.1,699 737,697.4 732.7,696.1 728.4,695 723.9,694.1 719.4,693.4 714.8,693 710.3,692.8 701.3,692.6 692.4,692.4 683.4,692.2 674.4,692 665.5,691.8 656.5,691.6 647.6,691.4 638.6,691.2 629.7,691 620.8,690.8 611.8,690.6 602.9,690.4 593.9,690.2 585,690 576.1,689.8 567.1,689.6 558.2,689.4 549.3,689.2 540.4,689 531.4,688.8 522.5,688.6 513.6,688.5 504.7,688.3 495.7,688.1 486.8,687.9 477.9,687.7 469,687.5 460.1,687.3 451.2,687.1 442.3,686.9 433.4,686.7 424.4,686.5 415.5,686.3 406.6,686.1 397.7,685.9 388.8,685.7 379.9,685.5 371.1,685.3 362.2,685.1 353.3,684.9 344.4,684.8 335.5,684.6 330.9,684.6 326.3,684.8 321.7,685.3 317.2,686 312.6,686.9 308.1,688 303.7,689.4 299.5,690.9 295.3,692.7 291.3,694.6 287.4,696.7 283.7,699 280.3,701.5 277,704.1 274,706.9 271.3,709.8 268.8,712.8 266.6,715.8 264.6,719 263,722.3 261.7,725.6 260.8,728.9 260.1,732.2 259.8,735.6 259.8,738.9 260.2,742.2 260.9,745.5 261.9,748.7 263.3,751.8 265,754.8 267,757.7 269.4,760.4 272,763 277.8,768.4 283.7,773.7 289.6,779.1 295.6,784.5 301.6,789.9 307.6,795.4 313.6,800.9 319.7,806.4 325.8,812 331.9,817.5 338.1,823.2"/><polygon points="295.8,848.3 289.7,842.5 283.5,836.8 277.5,831.1 271.4,825.4 265.4,819.8 259.4,814.2 253.5,808.6 247.6,803 241.7,797.5 235.8,792 230,786.6 225.5,781.9 221.4,777 218,771.8 215.1,766.5 212.8,761 211.1,755.3 210,749.5 209.5,743.7 209.6,737.8 210.3,732 211.6,726.1 213.5,720.3 215.9,714.5 218.8,708.9 222.3,703.4 226.3,698.1 230.7,692.9 235.6,687.9 240.9,683.2 246.6,678.7 252.7,674.5 259.1,670.6 265.8,667 272.8,663.7 280.1,660.7 287.5,658 295.1,655.8 302.8,653.8 310.6,652.3 318.5,651.1 326.4,650.3 334.3,649.9 342.2,649.9 350.9,650.1 359.7,650.3 368.4,650.5 377.1,650.7 385.9,650.8 394.6,651 403.4,651.2 412.1,651.4 420.9,651.6 429.7,651.8 438.4,652 447.2,652.2 455.9,652.3 464.7,652.5 473.5,652.7 482.2,652.9 491,653.1 499.8,653.3 508.5,653.5 517.3,653.7 526.1,653.9 534.9,654 543.6,654.2 552.4,654.4 561.2,654.6 570,654.8 578.8,655 587.5,655.2 596.3,655.4 605.1,655.6 613.9,655.7 622.7,655.9 631.5,656.1 640.3,656.3 649.1,656.5 657.9,656.7 666.7,656.9 675.5,657.1 684.3,657.3 693.1,657.4 701.9,657.6 710.7,657.8 718.6,658.2 726.4,658.9 734.2,660.1 741.9,661.6 749.4,663.5 756.7,665.7 763.9,668.3 770.7,671.3 777.4,674.6 783.7,678.2 789.6,682.1 795.2,686.3 800.4,690.8 805.2,695.6 809.5,700.5 813.3,705.7 816.7,711.1 819.5,716.6 821.8,722.3 823.5,728 824.6,733.9 825.2,739.8 825.2,745.7 824.6,751.7 823.4,757.5 821.7,763.4 819.3,769.1 816.3,774.7 812.8,780.1 808.7,785.3 804.1,790.3 799,795.1 793.4,799.5 786.3,804.7 779.2,809.9 772.1,815.2 764.9,820.5 757.7,825.8 750.4,831.1 743.2,836.4 735.8,841.8 728.5,847.2 721.1,852.7 713.6,858.2 677.3,829.4 684.7,824.1 692.1,818.8 699.5,813.5 706.8,808.3 714.1,803 721.3,797.9 728.5,792.7 735.7,787.6 742.8,782.5 749.9,777.4 756.9,772.3 760.2,769.9 763.1,767.2 765.8,764.4 768.2,761.5 770.2,758.4 772,755.3 773.4,752.1 774.5,748.8 775.3,745.5 775.7,742.1 775.8,738.7 775.5,735.3 774.9,732 774,728.6 772.8,725.4 771.3,722.2 769.4,719.1 767.3,716.1 764.8,713.2 762.2,710.4 759.2,707.8 756,705.3 752.6,703.1 749,700.9 745.2,699 741.2,697.3 737.1,695.7 732.8,694.4 728.5,693.3 724,692.4 719.5,691.7 715,691.3 710.4,691 701.4,690.8 692.4,690.7 683.5,690.5 674.5,690.3 665.6,690.1 656.6,689.9 647.7,689.7 638.7,689.5 629.7,689.3 620.8,689.1 611.8,688.9 602.9,688.7 594,688.5 585,688.3 576.1,688.1 567.1,687.9 558.2,687.7 549.3,687.5 540.3,687.3 531.4,687.1 522.5,686.9 513.5,686.7 504.6,686.5 495.7,686.4 486.7,686.2 477.8,686 468.9,685.8 460,685.6 451.1,685.4 442.2,685.2 433.2,685 424.3,684.8 415.4,684.6 406.5,684.4 397.6,684.2 388.7,684 379.8,683.8 370.9,683.6 362,683.4 353.1,683.2 344.2,683 335.3,682.8 330.7,682.9 326.1,683.1 321.5,683.6 316.9,684.3 312.4,685.2 307.9,686.3 303.5,687.7 299.2,689.2 295.1,691 291,692.9 287.2,695 283.5,697.3 280,699.8 276.8,702.4 273.8,705.2 271,708.1 268.5,711 266.3,714.1 264.4,717.3 262.8,720.6 261.5,723.9 260.5,727.2 259.8,730.5 259.5,733.9 259.6,737.2 259.9,740.5 260.6,743.8 261.7,747 263,750.1 264.7,753.1 266.8,756 269.1,758.7 271.7,761.3 277.6,766.6 283.5,772 289.4,777.4 295.3,782.8 301.3,788.2 307.3,793.7 313.4,799.2 319.5,804.7 325.6,810.2 331.7,815.8 337.9,821.5"/><polygon points="295.6,846.6 289.4,840.8 283.3,835.1 277.2,829.4 271.1,823.7 265.1,818 259.2,812.4 253.2,806.9 247.3,801.3 241.4,795.8 235.5,790.3 229.7,784.9 225.2,780.2 221.1,775.3 217.7,770.1 214.8,764.8 212.5,759.2 210.8,753.6 209.7,747.8 209.2,742 209.3,736.1 210,730.2 211.3,724.4 213.2,718.6 215.6,712.8 218.5,707.2 222,701.7 226,696.3 230.4,691.2 235.3,686.2 240.7,681.5 246.4,677 252.5,672.8 258.9,668.9 265.6,665.3 272.6,661.9 279.8,659 287.2,656.3 294.8,654.1 302.6,652.1 310.4,650.6 318.3,649.4 326.2,648.6 334.1,648.2 342,648.2 350.7,648.4 359.5,648.6 368.2,648.8 377,648.9 385.7,649.1 394.5,649.3 403.3,649.5 412,649.7 420.8,649.9 429.5,650.1 438.3,650.3 447.1,650.5 455.8,650.6 464.6,650.8 473.4,651 482.2,651.2 490.9,651.4 499.7,651.6 508.5,651.8 517.3,652 526,652.1 534.8,652.3 543.6,652.5 552.4,652.7 561.2,652.9 570,653.1 578.8,653.3 587.6,653.5 596.3,653.7 605.1,653.8 613.9,654 622.7,654.2 631.5,654.4 640.3,654.6 649.1,654.8 658,655 666.8,655.2 675.6,655.4 684.4,655.5 693.2,655.7 702,655.9 710.8,656.1 718.7,656.5 726.6,657.2 734.3,658.4 742,659.9 749.5,661.8 756.9,664 764,666.6 770.9,669.6 777.5,672.9 783.8,676.5 789.8,680.4 795.4,684.6 800.6,689.1 805.3,693.8 809.7,698.8 813.5,704 816.9,709.4 819.7,714.9 822,720.5 823.7,726.3 824.9,732.2 825.4,738.1 825.4,744 824.8,749.9 823.7,755.8 821.9,761.7 819.5,767.4 816.5,773 813,778.4 808.9,783.6 804.3,788.6 799.2,793.3 793.5,797.8 786.5,803 779.4,808.2 772.2,813.5 765.1,818.7 757.9,824 750.6,829.4 743.3,834.7 736,840.1 728.6,845.5 721.2,851 713.8,856.4 677.4,827.7 684.8,822.3 692.2,817 699.6,811.8 706.9,806.5 714.2,801.3 721.4,796.1 728.6,791 735.8,785.9 742.9,780.8 750,775.7 757.1,770.6 760.3,768.1 763.3,765.5 766,762.7 768.3,759.8 770.4,756.7 772.1,753.6 773.6,750.4 774.7,747.1 775.4,743.7 775.9,740.4 775.9,737 775.7,733.6 775.1,730.3 774.2,726.9 773,723.7 771.4,720.5 769.6,717.4 767.4,714.4 765,711.5 762.3,708.7 759.4,706.1 756.2,703.6 752.8,701.3 749.1,699.2 745.3,697.3 741.3,695.5 737.2,694 733,692.7 728.6,691.6 724.2,690.7 719.6,690 715.1,689.5 710.5,689.3 701.5,689.1 692.5,688.9 683.6,688.7 674.6,688.6 665.6,688.4 656.7,688.2 647.7,688 638.8,687.8 629.8,687.6 620.8,687.4 611.9,687.2 602.9,687 594,686.8 585,686.6 576.1,686.4 567.1,686.2 558.2,686 549.2,685.8 540.3,685.6 531.4,685.4 522.4,685.2 513.5,685 504.5,684.8 495.6,684.6 486.7,684.4 477.7,684.3 468.8,684.1 459.9,683.9 451,683.7 442,683.5 433.1,683.3 424.2,683.1 415.3,682.9 406.4,682.7 397.5,682.5 388.5,682.3 379.6,682.1 370.7,681.9 361.8,681.7 352.9,681.5 344,681.3 335.1,681.1 330.5,681.2 325.9,681.4 321.3,681.9 316.7,682.6 312.2,683.5 307.7,684.6 303.3,685.9 299,687.5 294.8,689.3 290.8,691.2 286.9,693.3 283.3,695.6 279.8,698.1 276.5,700.7 273.5,703.5 270.8,706.3 268.3,709.3 266,712.4 264.1,715.6 262.5,718.8 261.2,722.1 260.2,725.5 259.6,728.8 259.3,732.2 259.3,735.5 259.7,738.8 260.4,742.1 261.4,745.3 262.8,748.4 264.5,751.4 266.5,754.2 268.8,757 271.5,759.6 277.3,764.9 283.2,770.3 289.1,775.6 295.1,781.1 301.1,786.5 307.1,792 313.2,797.5 319.2,803 325.4,808.5 331.5,814.1 337.7,819.7"/></g><polygon points="295.3,844.8 289.1,839.1 283,833.3 276.9,827.6 270.9,822 264.9,816.3 258.9,810.7 252.9,805.1 247,799.6 241.1,794.1 235.3,788.6 229.4,783.1 224.9,778.5 220.8,773.5 217.4,768.4 214.5,763 212.2,757.5 210.5,751.9 209.4,746.1 208.9,740.3 209,734.4 209.7,728.5 211,722.7 212.9,716.8 215.3,711.1 218.2,705.5 221.7,700 225.7,694.6 230.2,689.5 235.1,684.5 240.4,679.8 246.1,675.3 252.2,671.1 258.6,667.2 265.3,663.5 272.3,660.2 279.6,657.3 287,654.6 294.6,652.3 302.4,650.4 310.2,648.9 318.1,647.7 326,646.9 333.9,646.5 341.8,646.5 350.6,646.7 359.3,646.9 368.1,647 376.8,647.2 385.6,647.4 394.4,647.6 403.1,647.8 411.9,648 420.7,648.2 429.4,648.4 438.2,648.6 447,648.7 455.7,648.9 464.5,649.1 473.3,649.3 482.1,649.5 490.9,649.7 499.6,649.9 508.4,650.1 517.2,650.2 526,650.4 534.8,650.6 543.6,650.8 552.4,651 561.2,651.2 570,651.4 578.8,651.6 587.6,651.8 596.4,651.9 605.2,652.1 614,652.3 622.8,652.5 631.6,652.7 640.4,652.9 649.2,653.1 658,653.3 666.8,653.5 675.6,653.7 684.5,653.8 693.3,654 702.1,654.2 710.9,654.4 718.8,654.8 726.7,655.5 734.5,656.7 742.1,658.2 749.7,660.1 757,662.3 764.2,664.9 771.1,667.9 777.7,671.2 784,674.8 790,678.7 795.6,682.9 800.8,687.4 805.5,692.1 809.9,697.1 813.7,702.3 817.1,707.6 819.9,713.2 822.2,718.8 823.9,724.6 825.1,730.5 825.7,736.4 825.7,742.3 825.1,748.2 823.9,754.1 822.1,759.9 819.7,765.6 816.8,771.2 813.2,776.7 809.1,781.9 804.5,786.9 799.4,791.6 793.7,796.1 786.7,801.3 779.6,806.5 772.4,811.7 765.2,817 758,822.3 750.8,827.7 743.5,833 736.1,838.4 728.8,843.8 721.3,849.3 713.9,854.7 677.5,825.9 684.9,820.6 692.3,815.3 699.7,810.1 707,804.8 714.3,799.6 721.6,794.4 728.8,789.3 735.9,784.1 743.1,779 750.2,774 757.3,768.9 760.5,766.4 763.4,763.8 766.1,761 768.5,758.1 770.6,755 772.3,751.9 773.7,748.6 774.8,745.4 775.6,742 776,738.6 776.1,735.3 775.9,731.9 775.3,728.5 774.4,725.2 773.1,722 771.6,718.8 769.7,715.7 767.6,712.7 765.2,709.8 762.5,707 759.5,704.4 756.3,701.9 752.9,699.6 749.3,697.5 745.5,695.6 741.5,693.8 737.4,692.3 733.1,691 728.7,689.8 724.3,688.9 719.8,688.3 715.2,687.8 710.6,687.6 701.6,687.4 692.6,687.2 683.7,687 674.7,686.8 665.7,686.6 656.7,686.4 647.8,686.2 638.8,686.1 629.8,685.9 620.9,685.7 611.9,685.5 602.9,685.3 594,685.1 585,684.9 576.1,684.7 567.1,684.5 558.2,684.3 549.2,684.1 540.3,683.9 531.3,683.7 522.4,683.5 513.4,683.3 504.5,683.1 495.5,682.9 486.6,682.7 477.7,682.5 468.7,682.3 459.8,682.1 450.9,682 441.9,681.8 433,681.6 424.1,681.4 415.2,681.2 406.2,681 397.3,680.8 388.4,680.6 379.5,680.4 370.6,680.2 361.6,680 352.7,679.8 343.8,679.6 334.9,679.4 330.3,679.4 325.7,679.7 321.1,680.1 316.5,680.8 312,681.8 307.5,682.9 303.1,684.2 298.8,685.8 294.6,687.5 290.6,689.5 286.7,691.6 283,693.9 279.5,696.4 276.3,699 273.3,701.7 270.5,704.6 268,707.6 265.8,710.7 263.9,713.9 262.2,717.1 260.9,720.4 260,723.8 259.3,727.1 259,730.5 259,733.8 259.4,737.1 260.1,740.4 261.1,743.5 262.5,746.6 264.2,749.6 266.2,752.5 268.6,755.3 271.2,757.9 277.1,763.2 283,768.6 288.9,773.9 294.9,779.3 300.9,784.8 306.9,790.2 312.9,795.7 319,801.3 325.2,806.8 331.3,812.4 337.5,818" fill="#858585"/><polygon points="289.1,835.3 286.2,832.6 283.3,829.9 280.3,827.1 277.4,824.4 274.5,821.7 271.6,819 268.7,816.2 265.8,813.5 262.9,810.9 260.1,808.2 257.2,805.5 254.4,802.8 251.5,800.2 248.7,797.5 245.8,794.9 243,792.2 240.2,789.6 237.4,786.9 234.6,784.3 230.9,780.8 269.8,760.1 271.7,761.8 274.6,764.4 277.4,767 280.2,769.5 283.1,772.1 285.9,774.7 288.8,777.3 291.6,779.9 294.5,782.5 297.4,785.1 300.3,787.8 303.2,790.4 306.1,793 309,795.7 311.9,798.3 314.8,801 317.8,803.6 320.7,806.3 323.6,809 326.6,811.7" fill="#222"/><polygon points="784.6,799.7 781.2,802.2 777.8,804.7 774.4,807.2 771,809.7 767.5,812.3 764.1,814.8 760.6,817.3 757.2,819.9 753.7,822.4 750.2,825 746.7,827.5 743.2,830.1 739.7,832.7 736.2,835.2 732.7,837.8 729.1,840.4 725.6,843 693.2,817.7 696.8,815.1 700.3,812.6 703.8,810.1 707.3,807.6 710.8,805.1 714.3,802.6 717.8,800.1 721.3,797.6 724.8,795.1 728.2,792.6 731.7,790.1 735.1,787.7 738.5,785.2 742,782.8 745.4,780.3 748.8,777.9 752.2,775.4" fill="#222"/><path d="M221.6 771.4L265.1 754M217.8 709.9L260.1 717.7M272.9 661.3L293.5 686.6M352.1 647.9L345.9 678.4M405 649L399.6 679.6M457.9 650.2L453.4 680.8M510.9 651.3L507.3 681.9M564 652.5L561.2 683.1M617.1 653.6L615.2 684.3M670.2 654.7L669.3 685.5M728.1 657L718.6 686.8M797.9 686.9L762.5 705M822.6 751L777.3 743M785.3 800.2L751.5 774.9" stroke="#f0a400" stroke-width="1.6"/><g fill="#5fa064" fill-opacity="0.85"><polygon points="234.7,748.8 223.6,730.6 243.9,727.9"/><polygon points="247,699 258.1,679.5 272.7,687.3"/><polygon points="302.1,666.1 328.1,656.2 329.4,669.4"/><polygon points="362.5,663.3 390.1,657.2 387.6,670.6"/><polygon points="415.8,664.5 443.2,658.4 441.2,671.8"/><polygon points="469.2,665.6 496.5,659.5 494.8,673"/><polygon points="522.6,666.8 549.7,660.7 548.4,674.1"/><polygon points="576.1,668 603.1,661.8 602.2,675.3"/><polygon points="629.7,669.1 656.5,663 655.9,676.5"/><polygon points="683.3,670.3 709.9,664.1 709.8,677.6"/><polygon points="743.5,674.8 771.3,679.7 760.9,691"/><polygon points="794.3,710.4 810.5,728.2 791,730.8"/><polygon points="796.5,760.8 790.7,782 773.1,773.4"/><polygon points="274.9,792.9 249.9,783 266.9,772.6"/><polygon points="743.1,805.8 730.4,826.2 715.5,814.7"/></g><path d="M295.3 844.8L289.1 839.1L283 833.3L276.9 827.6L270.9 822L264.9 816.3L258.9 810.7L252.9 805.1L247 799.6L241.1 794.1L235.3 788.6L229.4 783.1L224.9 778.5L220.8 773.5L217.4 768.4L214.5 763L212.2 757.5L210.5 751.9L209.4 746.1L208.9 740.3L209 734.4L209.7 728.5L211 722.7L212.9 716.8L215.3 711.1L218.2 705.5L221.7 700L225.7 694.6L230.2 689.5L235.1 684.5L240.4 679.8L246.1 675.3L252.2 671.1L258.6 667.2L265.3 663.5L272.3 660.2L279.6 657.3L287 654.6L294.6 652.3L302.4 650.4L310.2 648.9L318.1 647.7L326 646.9L333.9 646.5L341.8 646.5L350.6 646.7L359.3 646.9L368.1 647L376.8 647.2L385.6 647.4L394.4 647.6L403.1 647.8L411.9 648L420.7 648.2L429.4 648.4L438.2 648.6L447 648.7L455.7 648.9L464.5 649.1L473.3 649.3L482.1 649.5L490.9 649.7L499.6 649.9L508.4 650.1L517.2 650.2L526 650.4L534.8 650.6L543.6 650.8L552.4 651L561.2 651.2L570 651.4L578.8 651.6L587.6 651.8L596.4 651.9L605.2 652.1L614 652.3L622.8 652.5L631.6 652.7L640.4 652.9L649.2 653.1L658 653.3L666.8 653.5L675.6 653.7L684.5 653.8L693.3 654L702.1 654.2L710.9 654.4L718.8 654.8L726.7 655.5L734.5 656.7L742.1 658.2L749.7 660.1L757 662.3L764.2 664.9L771.1 667.9L777.7 671.2L784 674.8L790 678.7L795.6 682.9L800.8 687.4L805.5 692.1L809.9 697.1L813.7 702.3L817.1 707.6L819.9 713.2L822.2 718.8L823.9 724.6L825.1 730.5L825.7 736.4L825.7 742.3L825.1 748.2L823.9 754.1L822.1 759.9L819.7 765.6L816.8 771.2L813.2 776.7L809.1 781.9L804.5 786.9L799.4 791.6L793.7 796.1L786.7 801.3L779.6 806.5L772.4 811.7L765.2 817L758 822.3L750.8 827.7L743.5 833L736.1 838.4L728.8 843.8L721.3 849.3L713.9 854.7M337.5 818L331.3 812.4L325.2 806.8L319 801.3L312.9 795.7L306.9 790.2L300.9 784.8L294.9 779.3L288.9 773.9L283 768.6L277.1 763.2L271.2 757.9L268.6 755.3L266.2 752.5L264.2 749.6L262.5 746.6L261.1 743.5L260.1 740.4L259.4 737.1L259 733.8L259 730.5L259.3 727.1L260 723.8L260.9 720.4L262.2 717.1L263.9 713.9L265.8 710.7L268 707.6L270.5 704.6L273.3 701.7L276.3 699L279.5 696.4L283 693.9L286.7 691.6L290.6 689.5L294.6 687.5L298.8 685.8L303.1 684.2L307.5 682.9L312 681.8L316.5 680.8L321.1 680.1L325.7 679.7L330.3 679.4L334.9 679.4L343.8 679.6L352.7 679.8L361.6 680L370.6 680.2L379.5 680.4L388.4 680.6L397.3 680.8L406.2 681L415.2 681.2L424.1 681.4L433 681.6L441.9 681.8L450.9 682L459.8 682.1L468.7 682.3L477.7 682.5L486.6 682.7L495.5 682.9L504.5 683.1L513.4 683.3L522.4 683.5L531.3 683.7L540.3 683.9L549.2 684.1L558.2 684.3L567.1 684.5L576.1 684.7L585 684.9L594 685.1L602.9 685.3L611.9 685.5L620.9 685.7L629.8 685.9L638.8 686.1L647.8 686.2L656.7 686.4L665.7 686.6L674.7 686.8L683.7 687L692.6 687.2L701.6 687.4L710.6 687.6L715.2 687.8L719.8 688.3L724.3 688.9L728.7 689.8L733.1 691L737.4 692.3L741.5 693.8L745.5 695.6L749.3 697.5L752.9 699.6L756.3 701.9L759.5 704.4L762.5 707L765.2 709.8L767.6 712.7L769.7 715.7L771.6 718.8L773.1 722L774.4 725.2L775.3 728.5L775.9 731.9L776.1 735.3L776 738.6L775.6 742L774.8 745.4L773.7 748.6L772.3 751.9L770.6 755L768.5 758.1L766.1 761L763.4 763.8L760.5 766.4L757.3 768.9L750.2 774L743.1 779L735.9 784.1L728.8 789.3L721.6 794.4L714.3 799.6L707 804.8L699.7 810.1L692.3 815.3L684.9 820.6L677.5 825.9" fill="none" stroke="#f00" stroke-width="3"/><path d="M175.5 820L182 851.9M166.4 853.2L173.1 885.1M231.2 821.3L236.8 853.2M223 854.6L228.8 886.4M365.5 824.4L368.9 856.3M359.5 857.8L363.1 889.6M417.6 825.6L420.2 857.5M412.5 859L415.2 890.9M571.5 829.2L571.5 861.1M568.9 862.8L569 894.6M615.2 830.2L614.6 862.1M613.4 863.8L612.7 895.6M673.4 831.6L671.8 863.5M672.4 865.2L670.8 897M730.6 832.9L728.1 864.8M730.6 866.6L728 898.4M787.9 834.3L784.4 866.1M788.9 868L785.3 899.8M845.3 835.6L840.9 867.5M847.2 869.4L842.7 901.2M1000.5 839.2L993.6 871.1M1005 873.1L997.9 904.9M1136.1 842.4L1126.9 874.3M1142.8 876.4L1133.4 908.2M1280.7 845.8L1269.2 877.6M1289.9 879.9L1278 911.7M1338.7 847.1L1326.2 879M1348.8 881.3L1336 913M1389 848.3L1375.7 880.2M1400 882.5L1386.3 914.3" stroke="#b2b2b2" stroke-width="6"/><path d="M182 851.9L184.3 863.3M173.1 885.1L175.6 896.5M236.8 853.2L238.8 864.6M228.8 886.4L230.9 897.9M368.9 856.3L370.1 867.8M363.1 889.6L364.3 901.1M420.2 857.5L421.1 869M415.2 890.9L416.1 902.4M571.5 861.1L571.5 872.6M569 894.6L569 906.1M614.6 862.1L614.4 873.6M612.7 895.6L612.5 907.1M671.8 863.5L671.2 874.9M670.8 897L670.2 908.5M728.1 864.8L727.2 876.3M728 898.4L727.1 909.9M784.4 866.1L783.2 877.6M785.3 899.8L784.1 911.3M840.9 867.5L839.3 879M842.7 901.2L841.1 912.6M993.6 871.1L991.1 882.6M997.9 904.9L995.3 916.4M1126.9 874.3L1123.6 885.7M1133.4 908.2L1130 919.6M1269.2 877.6L1265 889.1M1278 911.7L1273.7 923.1M1326.2 879L1321.7 890.5M1336 913L1331.3 924.5M1375.7 880.2L1370.9 891.6M1386.3 914.3L1381.3 925.7" stroke="#284848" stroke-width="8.5"/><path d="M544.7 851.5L545.2 883.3M510.9 874.8L512 906.7M584.2 884.8L584.1 916.6M550.4 909L550.8 940.7M621 911.3L620.2 943.1M603.1 944.9L602.6 976.6M673 916.4L671.3 948.1M672 952.9L670.3 984.5M734 917.9L731.3 949.6M734.1 954.4L731.4 986M795.2 919.3L791.4 951.1M796.3 955.9L792.5 987.6M845.8 917.3L841.3 949M867 950.9L862 982.6M884.2 892L879 923.8M918.4 917.9L912.6 949.6M923.9 860.4L918.1 892.2M958 885.5L951.7 917.3" stroke="#b2b2b2" stroke-width="6"/><path d="M545.2 883.3L545.4 894.8M512 906.7L512.4 918.1M584.1 916.6L584 928.1M550.8 940.7L550.9 952.2M620.2 943.1L619.9 954.5M602.6 976.6L602.4 988M671.3 948.1L670.7 959.5M670.3 984.5L669.7 995.9M731.3 949.6L730.4 961M731.4 986L730.4 997.4M791.4 951.1L790.1 962.5M792.5 987.6L791.1 999M841.3 949L839.6 960.4M862 982.6L860.2 994M879 923.8L877.1 935.2M912.6 949.6L910.5 961M918.1 892.2L916 903.7M951.7 917.3L949.4 928.7" stroke="#284848" stroke-width="8.5"/><g fill="#e00000"><polygon points="525.6,831 532.2,836.5 538.9,842.1 545.5,847.7 552.2,853.4 559,859 565.8,864.7 572.6,870.5 579.4,876.3 586.3,882.1 593.2,887.9 600.2,893.8 607.2,899.7 609.8,901.7 612.6,903.6 615.6,905.3 618.8,906.9 622,908.3 625.4,909.5 628.9,910.5 632.5,911.3 636.2,912 639.9,912.4 643.7,912.6 653.7,912.8 663.7,913 673.8,913.3 683.8,913.5 693.8,913.8 703.9,914 713.9,914.3 724,914.5 734,914.7 744.1,915 754.1,915.2 764.2,915.5 774.2,915.7 784.3,916 794.4,916.2 804.4,916.4 814.5,916.7 824.6,916.9 828.3,916.9 832,916.7 835.7,916.3 839.3,915.6 842.8,914.8 846.3,913.7 849.5,912.5 852.7,911.1 855.7,909.5 858.5,907.7 861.1,905.8 868.1,900.2 875.1,894.7 882.1,889.1 889,883.6 895.8,878.2 902.7,872.7 909.5,867.3 916.3,862 923,856.6 929.7,851.3 936.4,846 943,840.7 983.1,869.7 976.5,875.1 969.8,880.5 963.1,886 956.4,891.5 949.7,897.1 942.9,902.6 936,908.2 929.2,913.8 922.3,919.5 915.3,925.2 908.3,930.9 901.3,936.6 896,940.6 890.3,944.3 884.2,947.6 877.8,950.6 871.1,953.2 864.1,955.4 856.9,957.2 849.5,958.5 841.9,959.4 834.2,959.9 826.5,959.9 816.2,959.7 805.9,959.4 795.7,959.2 785.4,958.9 775.1,958.7 764.9,958.4 754.6,958.2 744.4,957.9 734.1,957.6 723.9,957.4 713.6,957.1 703.4,956.9 693.1,956.6 682.9,956.4 672.6,956.1 662.4,955.9 652.2,955.6 641.9,955.4 634.2,955 626.6,954.1 619,952.8 611.6,951.1 604.4,949 597.5,946.5 590.8,943.6 584.4,940.3 578.3,936.7 572.7,932.7 567.4,928.5 560.4,922.4 553.4,916.4 546.5,910.4 539.7,904.4 532.8,898.5 526,892.6 519.3,886.7 512.5,880.9 505.9,875.1 499.2,869.3 492.6,863.6 486,857.9"/><polygon points="525.6,829.3 532.2,834.8 538.8,840.4 545.5,846 552.2,851.7 559,857.3 565.7,863 572.6,868.8 579.4,874.6 586.3,880.4 593.3,886.2 600.2,892.1 607.3,898 609.9,900 612.7,901.9 615.7,903.6 618.8,905.2 622.1,906.6 625.5,907.8 629,908.8 632.6,909.6 636.3,910.3 640,910.7 643.7,910.9 653.8,911.1 663.8,911.3 673.8,911.6 683.9,911.8 693.9,912.1 704,912.3 714,912.6 724.1,912.8 734.2,913 744.2,913.3 754.3,913.5 764.3,913.8 774.4,914 784.5,914.3 794.6,914.5 804.6,914.7 814.7,915 824.8,915.2 828.5,915.2 832.3,915 836,914.6 839.6,913.9 843.1,913.1 846.5,912 849.8,910.8 852.9,909.4 855.9,907.8 858.7,906 861.4,904.1 868.4,898.5 875.4,893 882.3,887.4 889.3,881.9 896.1,876.5 903,871 909.8,865.6 916.6,860.3 923.3,854.9 930,849.6 936.7,844.3 943.3,839 983.5,868 976.8,873.4 970.2,878.8 963.5,884.3 956.8,889.8 950,895.3 943.2,900.9 936.4,906.5 929.5,912.1 922.6,917.8 915.6,923.5 908.6,929.2 901.6,934.9 896.3,938.9 890.6,942.6 884.5,946 878.1,948.9 871.4,951.5 864.4,953.7 857.1,955.5 849.7,956.8 842.1,957.7 834.5,958.2 826.7,958.2 816.4,958 806.2,957.7 795.9,957.5 785.6,957.2 775.3,957 765.1,956.7 754.8,956.5 744.5,956.2 734.3,955.9 724,955.7 713.7,955.4 703.5,955.2 693.2,954.9 683,954.7 672.7,954.4 662.5,954.2 652.2,953.9 642,953.7 634.3,953.3 626.6,952.4 619.1,951.1 611.7,949.4 604.5,947.3 597.5,944.8 590.8,941.9 584.4,938.6 578.3,935 572.7,931 567.4,926.8 560.4,920.7 553.4,914.7 546.5,908.7 539.6,902.7 532.8,896.8 526,890.9 519.2,885 512.5,879.2 505.8,873.4 499.1,867.6 492.5,861.9 486,856.2"/><polygon points="525.5,827.5 532.2,833.1 538.8,838.7 545.5,844.3 552.2,849.9 558.9,855.6 565.7,861.3 572.6,867.1 579.4,872.8 586.3,878.6 593.3,884.5 600.3,890.4 607.3,896.3 609.9,898.3 612.7,900.2 615.7,901.9 618.8,903.5 622.1,904.9 625.5,906.1 629,907.1 632.6,907.9 636.3,908.5 640,909 643.8,909.1 653.8,909.4 663.9,909.6 673.9,909.9 684,910.1 694,910.4 704.1,910.6 714.2,910.9 724.2,911.1 734.3,911.3 744.4,911.6 754.4,911.8 764.5,912.1 774.6,912.3 784.7,912.6 794.8,912.8 804.8,913 814.9,913.3 825,913.5 828.8,913.5 832.5,913.3 836.2,912.9 839.8,912.2 843.3,911.4 846.7,910.3 850,909.1 853.2,907.7 856.2,906.1 859,904.3 861.6,902.4 868.7,896.8 875.6,891.2 882.6,885.7 889.5,880.2 896.4,874.8 903.3,869.3 910.1,863.9 916.9,858.5 923.6,853.2 930.3,847.9 937,842.6 943.6,837.3 983.8,866.3 977.2,871.7 970.5,877.1 963.8,882.6 957.1,888.1 950.3,893.6 943.5,899.2 936.7,904.8 929.8,910.4 922.9,916.1 915.9,921.8 908.9,927.5 901.9,933.2 896.6,937.2 890.9,940.9 884.8,944.3 878.4,947.2 871.7,949.8 864.6,952 857.4,953.8 850,955.1 842.4,956 834.7,956.5 826.9,956.5 816.7,956.3 806.4,956 796.1,955.8 785.8,955.5 775.5,955.3 765.2,955 755,954.8 744.7,954.5 734.4,954.2 724.1,954 713.9,953.7 703.6,953.5 693.3,953.2 683.1,953 672.8,952.7 662.6,952.5 652.3,952.2 642,952 634.3,951.6 626.7,950.7 619.1,949.4 611.7,947.7 604.5,945.6 597.5,943.1 590.8,940.2 584.4,936.9 578.3,933.3 572.7,929.3 567.4,925.1 560.4,919 553.4,913 546.5,907 539.6,901 532.7,895.1 525.9,889.2 519.2,883.3 512.4,877.5 505.7,871.7 499.1,865.9 492.5,860.2 485.9,854.5"/><polygon points="525.5,825.8 532.1,831.4 538.8,837 545.5,842.6 552.2,848.2 558.9,853.9 565.7,859.6 572.6,865.4 579.4,871.1 586.3,876.9 593.3,882.8 600.3,888.6 607.3,894.6 609.9,896.6 612.7,898.5 615.7,900.2 618.9,901.8 622.2,903.2 625.6,904.4 629.1,905.4 632.7,906.2 636.4,906.8 640.1,907.2 643.8,907.4 653.9,907.7 664,907.9 674,908.2 684.1,908.4 694.2,908.7 704.2,908.9 714.3,909.1 724.4,909.4 734.5,909.6 744.5,909.9 754.6,910.1 764.7,910.4 774.8,910.6 784.9,910.8 795,911.1 805,911.3 815.1,911.6 825.2,911.8 829,911.8 832.7,911.6 836.4,911.2 840,910.5 843.6,909.7 847,908.6 850.3,907.4 853.4,906 856.4,904.4 859.2,902.6 861.9,900.7 868.9,895.1 875.9,889.5 882.9,884 889.8,878.5 896.7,873.1 903.6,867.6 910.4,862.2 917.2,856.8 923.9,851.5 930.6,846.2 937.3,840.9 944,835.6 984.2,864.6 977.6,870 970.9,875.4 964.2,880.9 957.4,886.4 950.7,891.9 943.9,897.5 937,903.1 930.1,908.7 923.2,914.4 916.2,920.1 909.2,925.8 902.2,931.5 896.9,935.5 891.2,939.2 885.1,942.5 878.7,945.5 871.9,948.1 864.9,950.3 857.7,952.1 850.2,953.4 842.6,954.3 834.9,954.8 827.2,954.8 816.9,954.6 806.6,954.3 796.3,954.1 786,953.8 775.7,953.6 765.4,953.3 755.1,953.1 744.8,952.8 734.6,952.5 724.3,952.3 714,952 703.7,951.8 693.4,951.5 683.2,951.3 672.9,951 662.6,950.8 652.4,950.5 642.1,950.3 634.4,949.9 626.7,949 619.2,947.7 611.7,946 604.5,943.9 597.5,941.4 590.8,938.5 584.4,935.2 578.4,931.6 572.7,927.6 567.4,923.4 560.4,917.3 553.4,911.3 546.5,905.3 539.6,899.3 532.7,893.4 525.9,887.5 519.1,881.6 512.4,875.8 505.7,870 499,864.2 492.4,858.5 485.8,852.8"/><polygon points="525.5,824.1 532.1,829.7 538.7,835.3 545.4,840.9 552.2,846.5 558.9,852.2 565.7,857.9 572.6,863.6 579.4,869.4 586.4,875.2 593.3,881.1 600.3,886.9 607.3,892.8 610,894.9 612.8,896.8 615.8,898.5 618.9,900.1 622.2,901.5 625.6,902.7 629.1,903.7 632.7,904.5 636.4,905.1 640.1,905.5 643.9,905.7 654,906 664,906.2 674.1,906.5 684.2,906.7 694.3,906.9 704.3,907.2 714.4,907.4 724.5,907.7 734.6,907.9 744.7,908.2 754.8,908.4 764.9,908.7 775,908.9 785.1,909.1 795.2,909.4 805.3,909.6 815.4,909.9 825.5,910.1 829.2,910.1 833,909.9 836.7,909.4 840.3,908.8 843.8,908 847.2,906.9 850.5,905.7 853.7,904.3 856.7,902.7 859.5,900.9 862.1,899 869.2,893.4 876.2,887.8 883.2,882.3 890.1,876.8 897,871.3 903.9,865.9 910.7,860.5 917.5,855.1 924.2,849.8 930.9,844.4 937.6,839.2 944.3,833.9 984.6,862.8 977.9,868.3 971.2,873.7 964.5,879.2 957.8,884.7 951,890.2 944.2,895.8 937.3,901.4 930.4,907 923.5,912.7 916.6,918.3 909.6,924.1 902.5,929.8 897.2,933.8 891.5,937.5 885.4,940.8 878.9,943.8 872.2,946.4 865.2,948.6 857.9,950.4 850.5,951.7 842.9,952.6 835.2,953.1 827.4,953.1 817.1,952.9 806.8,952.6 796.5,952.4 786.2,952.1 775.9,951.9 765.6,951.6 755.3,951.3 745,951.1 734.7,950.8 724.4,950.6 714.1,950.3 703.8,950.1 693.6,949.8 683.3,949.6 673,949.3 662.7,949.1 652.4,948.8 642.2,948.6 634.4,948.2 626.8,947.3 619.2,946 611.8,944.3 604.6,942.2 597.6,939.7 590.8,936.8 584.4,933.5 578.4,929.9 572.7,925.9 567.4,921.6 560.3,915.6 553.4,909.5 546.4,903.6 539.5,897.6 532.7,891.7 525.9,885.8 519.1,879.9 512.3,874.1 505.6,868.3 498.9,862.5 492.3,856.8 485.7,851.1"/></g><polygon points="525.4,822.4 532,828 538.7,833.5 545.4,839.2 552.1,844.8 558.9,850.5 565.7,856.2 572.6,861.9 579.4,867.7 586.4,873.5 593.3,879.3 600.3,885.2 607.4,891.1 610,893.2 612.8,895.1 615.8,896.8 619,898.4 622.2,899.8 625.7,901 629.2,902 632.8,902.8 636.5,903.4 640.2,903.8 644,904 654,904.3 664.1,904.5 674.2,904.7 684.3,905 694.4,905.2 704.5,905.5 714.6,905.7 724.6,906 734.7,906.2 744.8,906.5 754.9,906.7 765,906.9 775.1,907.2 785.2,907.4 795.4,907.7 805.5,907.9 815.6,908.2 825.7,908.4 829.5,908.4 833.2,908.2 836.9,907.7 840.5,907.1 844.1,906.2 847.5,905.2 850.8,904 853.9,902.5 856.9,900.9 859.8,899.2 862.4,897.2 869.4,891.7 876.5,886.1 883.4,880.6 890.4,875.1 897.3,869.6 904.1,864.2 911,858.8 917.8,853.4 924.5,848.1 931.3,842.7 938,837.4 944.6,832.2 984.9,861.1 978.3,866.5 971.6,872 964.9,877.5 958.1,883 951.3,888.5 944.5,894.1 937.7,899.7 930.8,905.3 923.8,911 916.9,916.6 909.9,922.4 902.8,928.1 897.5,932.1 891.8,935.8 885.7,939.1 879.2,942.1 872.5,944.7 865.4,946.9 858.2,948.7 850.7,950 843.1,950.9 835.4,951.4 827.7,951.4 817.3,951.2 807,950.9 796.7,950.7 786.4,950.4 776.1,950.1 765.8,949.9 755.5,949.6 745.1,949.4 734.8,949.1 724.5,948.9 714.2,948.6 704,948.4 693.7,948.1 683.4,947.9 673.1,947.6 662.8,947.4 652.5,947.1 642.2,946.9 634.5,946.4 626.8,945.6 619.2,944.3 611.8,942.6 604.6,940.5 597.6,938 590.9,935 584.4,931.8 578.4,928.1 572.7,924.2 567.4,919.9 560.3,913.9 553.3,907.8 546.4,901.8 539.5,895.9 532.6,889.9 525.8,884 519,878.2 512.3,872.3 505.6,866.5 498.9,860.8 492.2,855 485.6,849.3" fill="#858585"/><polygon points="529.5,829.1 532.6,831.8 535.8,834.4 539,837.1 542.1,839.7 545.3,842.4 548.5,845.1 551.7,847.8 554.9,850.4 558.1,853.1 561.3,855.8 564.5,858.6 567.8,861.3 571,864 574.3,866.7 577.5,869.5 580.8,872.2 584.1,875 587.3,877.7 590.6,880.5 555.1,905.8 551.8,903 548.5,900.1 545.3,897.3 542,894.5 538.8,891.7 535.5,888.9 532.3,886.1 529,883.3 525.8,880.6 522.6,877.8 519.4,875 516.2,872.3 513,869.5 509.9,866.8 506.7,864.1 503.5,861.3 500.4,858.6 497.3,855.9 494.1,853.2" fill="#222"/><polygon points="879.2,887.4 882.5,884.8 885.8,882.2 889.1,879.6 892.3,877 895.6,874.4 898.9,871.8 902.1,869.2 905.4,866.6 908.6,864.1 911.8,861.5 915,858.9 918.3,856.4 921.5,853.9 924.7,851.3 927.8,848.8 931,846.3 934.2,843.8 937.4,841.2 940.5,838.7 976.4,864.6 973.2,867.2 970.1,869.8 966.9,872.3 963.7,874.9 960.5,877.5 957.3,880.1 954.1,882.7 950.9,885.3 947.7,888 944.5,890.6 941.2,893.2 938,895.8 934.8,898.5 931.5,901.1 928.2,903.8 925,906.5 921.7,909.1 918.4,911.8 915.1,914.5" fill="#222"/><path d="M546 841.9L509.1 867.3M585.7 875.3L548.7 901.5M622 901.4L602.4 937.9M673.4 906.3L672.4 946M734.7 907.8L734.8 947.5M796.1 909.2L797.4 949.1M846.2 907.3L869.3 943.9M884.1 882.4L921.5 910.5M923.9 850.8L961.3 878.1" stroke="#f0a400" stroke-width="1.6"/><g fill="#5fa064" fill-opacity="0.85"><polygon points="557.1,879.5 545.8,857.4 529.6,868.7"/><polygon points="598.5,913.5 584.6,891.5 569.3,904"/><polygon points="657.1,925.5 627.4,916.1 626.5,933.6"/><polygon points="719,927.1 688.9,917.6 688.6,935.1"/><polygon points="780.9,928.6 750.6,919.1 750.7,936.6"/><polygon points="842.8,929.2 811.6,921.4 813.8,939"/><polygon points="892.3,904.7 864,914.5 880.5,927.1"/><polygon points="932.4,872.4 904.8,881.9 921.2,894.2"/></g><path d="M525.4 822.4L532 828L538.7 833.5L545.4 839.2L552.1 844.8L558.9 850.5L565.7 856.2L572.6 861.9L579.4 867.7L586.4 873.5L593.3 879.3L600.3 885.2L607.4 891.1L610 893.2L612.8 895.1L615.8 896.8L619 898.4L622.2 899.8L625.7 901L629.2 902L632.8 902.8L636.5 903.4L640.2 903.8L644 904L654 904.3L664.1 904.5L674.2 904.7L684.3 905L694.4 905.2L704.5 905.5L714.6 905.7L724.6 906L734.7 906.2L744.8 906.5L754.9 906.7L765 906.9L775.1 907.2L785.2 907.4L795.4 907.7L805.5 907.9L815.6 908.2L825.7 908.4L829.5 908.4L833.2 908.2L836.9 907.7L840.5 907.1L844.1 906.2L847.5 905.2L850.8 904L853.9 902.5L856.9 900.9L859.8 899.2L862.4 897.2L869.4 891.7L876.5 886.1L883.4 880.6L890.4 875.1L897.3 869.6L904.1 864.2L911 858.8L917.8 853.4L924.5 848.1L931.3 842.7L938 837.4L944.6 832.2M485.6 849.3L492.2 855L498.9 860.8L505.6 866.5L512.3 872.3L519 878.2L525.8 884L532.6 889.9L539.5 895.9L546.4 901.8L553.3 907.8L560.3 913.9L567.4 919.9L572.7 924.2L578.4 928.1L584.4 931.8L590.9 935L597.6 938L604.6 940.5L611.8 942.6L619.2 944.3L626.8 945.6L634.5 946.4L642.2 946.9L652.5 947.1L662.8 947.4L673.1 947.6L683.4 947.9L693.7 948.1L704 948.4L714.2 948.6L724.5 948.9L734.8 949.1L745.1 949.4L755.5 949.6L765.8 949.9L776.1 950.1L786.4 950.4L796.7 950.7L807 950.9L817.3 951.2L827.7 951.4L835.4 951.4L843.1 950.9L850.7 950L858.2 948.7L865.4 946.9L872.5 944.7L879.2 942.1L885.7 939.1L891.8 935.8L897.5 932.1L902.8 928.1L909.9 922.4L916.9 916.6L923.8 911L930.8 905.3L937.7 899.7L944.5 894.1L951.3 888.5L958.1 883L964.9 877.5L971.6 872L978.3 866.5L984.9 861.1" fill="none" stroke="#f00" stroke-width="3"/><path d="M671.3 1001.9L669.6 1033.4M670.2 1041.4L668.5 1072.7M737.1 1003.5L734.3 1035M737.3 1043.1L734.3 1074.4M803.1 1005.2L799.1 1036.7M804.4 1044.8L800.3 1076.1M869.1 1006.8L863.9 1038.3M871.6 1046.5L866.3 1077.9M917.1 999.7L911.1 1031.2M948.7 1031.9L942.1 1063.2M958.4 966L951.8 997.6M994.8 993.7L987.4 1025.2M999.7 930.9L992.5 962.6M1036.1 957.8L1028.1 989.4M1039.8 897L1032 928.7M1076 922.9L1067.5 954.6M1078.6 864.1L1070.2 895.9M1114.7 889.2L1105.7 921" stroke="#b2b2b2" stroke-width="6"/><path d="M669.6 1033.4L669 1044.7M668.5 1072.7L667.9 1084M734.3 1035L733.2 1046.3M734.3 1074.4L733.3 1085.7M799.1 1036.7L797.6 1048M800.3 1076.1L798.8 1087.4M863.9 1038.3L862.1 1049.6M866.3 1077.9L864.4 1089.1M911.1 1031.2L909 1042.5M942.1 1063.2L939.7 1074.5M951.8 997.6L949.4 1009M987.4 1025.2L984.8 1036.6M992.5 962.6L989.9 974M1028.1 989.4L1025.3 1000.8M1032 928.7L1029.2 940.2M1067.5 954.6L1064.4 966.1M1070.2 895.9L1067.2 907.3M1105.7 921L1102.4 932.4" stroke="#284848" stroke-width="8.5"/><g fill="#e00000"><polygon points="635.3,997.6 645.6,997.8 656,998.1 666.3,998.4 676.7,998.6 687,998.9 697.4,999.1 707.8,999.4 718.1,999.7 728.5,999.9 738.9,1000.2 749.2,1000.5 759.6,1000.7 770,1001 780.4,1001.2 790.8,1001.5 801.1,1001.8 811.5,1002 821.9,1002.3 832.3,1002.5 842.7,1002.8 853.1,1003.1 863.5,1003.3 873.9,1003.6 884.3,1003.8 888.2,1003.8 892.1,1003.6 895.9,1003.1 899.6,1002.4 903.3,1001.5 906.8,1000.4 910.2,999 913.4,997.5 916.5,995.8 919.3,993.9 922,991.8 928.9,985.9 935.8,980.1 942.6,974.3 949.4,968.6 956.1,962.9 962.9,957.2 969.6,951.5 976.2,945.9 982.8,940.3 989.4,934.7 995.9,929.2 1002.5,923.7 1008.9,918.2 1015.4,912.7 1021.8,907.3 1028.2,901.9 1034.5,896.5 1040.8,891.2 1047.1,885.9 1053.4,880.6 1059.6,875.3 1065.8,870.1 1071.9,864.9 1078.1,859.7 1084.1,854.5 1090.2,849.4 1096.2,844.3 1138.6,873.3 1132.6,878.6 1126.5,883.9 1120.5,889.2 1114.4,894.5 1108.2,899.9 1102.1,905.3 1095.9,910.7 1089.6,916.1 1083.4,921.6 1077.1,927.1 1070.7,932.6 1064.4,938.2 1058,943.8 1051.6,949.4 1045.1,955 1038.6,960.7 1032.1,966.4 1025.5,972.2 1018.9,977.9 1012.3,983.7 1005.6,989.5 998.9,995.4 992.1,1001.3 985.4,1007.2 978.6,1013.2 971.7,1019.2 964.8,1025.2 959.4,1029.5 953.6,1033.5 947.4,1037.1 940.8,1040.4 933.9,1043.2 926.6,1045.5 919.2,1047.5 911.5,1048.9 903.6,1049.9 895.6,1050.4 887.6,1050.5 877,1050.2 866.3,1049.9 855.7,1049.7 845.1,1049.4 834.5,1049.1 823.9,1048.8 813.3,1048.6 802.7,1048.3 792,1048 781.4,1047.7 770.8,1047.5 760.3,1047.2 749.7,1046.9 739.1,1046.7 728.5,1046.4 717.9,1046.1 707.3,1045.8 696.7,1045.6 686.1,1045.3 675.6,1045 665,1044.8 654.4,1044.5 643.8,1044.2 633.3,1043.9"/><polygon points="635.3,995.9 645.7,996.2 656,996.4 666.4,996.7 676.8,996.9 687.1,997.2 697.5,997.5 707.9,997.7 718.3,998 728.6,998.2 739,998.5 749.4,998.8 759.8,999 770.2,999.3 780.6,999.5 791,999.8 801.4,1000.1 811.8,1000.3 822.2,1000.6 832.6,1000.9 843,1001.1 853.4,1001.4 863.8,1001.6 874.2,1001.9 884.6,1002.2 888.5,1002.1 892.4,1001.9 896.2,1001.4 899.9,1000.7 903.6,999.8 907.1,998.7 910.5,997.3 913.7,995.8 916.8,994.1 919.7,992.2 922.3,990.1 929.2,984.2 936.1,978.4 942.9,972.6 949.7,966.9 956.5,961.2 963.2,955.5 969.9,949.8 976.6,944.2 983.2,938.6 989.8,933 996.3,927.5 1002.8,922 1009.3,916.5 1015.8,911 1022.2,905.6 1028.6,900.2 1034.9,894.8 1041.3,889.5 1047.5,884.2 1053.8,878.9 1060,873.6 1066.2,868.4 1072.4,863.2 1078.5,858 1084.6,852.8 1090.7,847.7 1096.7,842.6 1139.1,871.6 1133.1,876.9 1127,882.2 1121,887.5 1114.8,892.8 1108.7,898.2 1102.5,903.6 1096.3,909 1090.1,914.4 1083.8,919.9 1077.5,925.4 1071.2,930.9 1064.8,936.5 1058.4,942.1 1052,947.7 1045.5,953.3 1039,959 1032.5,964.7 1025.9,970.5 1019.3,976.2 1012.7,982 1006,987.9 999.3,993.7 992.5,999.6 985.8,1005.5 978.9,1011.5 972.1,1017.5 965.2,1023.5 959.8,1027.8 954,1031.8 947.7,1035.5 941.1,1038.7 934.2,1041.5 927,1043.9 919.5,1045.8 911.8,1047.3 903.9,1048.2 895.9,1048.8 887.9,1048.8 877.2,1048.5 866.6,1048.2 856,1048 845.4,1047.7 834.7,1047.4 824.1,1047.2 813.5,1046.9 802.9,1046.6 792.3,1046.3 781.6,1046.1 771,1045.8 760.4,1045.5 749.8,1045.3 739.2,1045 728.6,1044.7 718,1044.4 707.4,1044.2 696.8,1043.9 686.2,1043.6 675.7,1043.4 665.1,1043.1 654.5,1042.8 643.9,1042.5 633.3,1042.3"/><polygon points="635.4,994.2 645.7,994.5 656.1,994.7 666.5,995 676.9,995.2 687.2,995.5 697.6,995.8 708,996 718.4,996.3 728.8,996.5 739.2,996.8 749.6,997.1 760,997.3 770.4,997.6 780.8,997.9 791.2,998.1 801.6,998.4 812,998.6 822.4,998.9 832.8,999.2 843.2,999.4 853.6,999.7 864,999.9 874.5,1000.2 884.9,1000.5 888.8,1000.5 892.7,1000.2 896.5,999.7 900.3,999 903.9,998.1 907.4,997 910.8,995.7 914.1,994.1 917.1,992.4 920,990.5 922.7,988.4 929.6,982.5 936.5,976.7 943.3,970.9 950.1,965.2 956.9,959.5 963.6,953.8 970.3,948.1 976.9,942.5 983.6,936.9 990.2,931.3 996.7,925.8 1003.2,920.3 1009.7,914.8 1016.2,909.3 1022.6,903.9 1029,898.5 1035.3,893.1 1041.7,887.8 1048,882.5 1054.2,877.2 1060.4,871.9 1066.6,866.7 1072.8,861.5 1078.9,856.3 1085,851.1 1091.1,846 1097.2,840.9 1139.6,869.9 1133.6,875.2 1127.5,880.5 1121.4,885.8 1115.3,891.1 1109.2,896.5 1103,901.9 1096.8,907.3 1090.6,912.7 1084.3,918.2 1078,923.7 1071.6,929.2 1065.3,934.8 1058.9,940.4 1052.4,946 1046,951.6 1039.5,957.3 1032.9,963 1026.3,968.8 1019.7,974.5 1013.1,980.3 1006.4,986.2 999.7,992 992.9,997.9 986.1,1003.8 979.3,1009.8 972.5,1015.8 965.6,1021.8 960.2,1026.2 954.3,1030.2 948.1,1033.8 941.5,1037 934.6,1039.8 927.3,1042.2 919.8,1044.1 912.1,1045.6 904.3,1046.6 896.3,1047.1 888.2,1047.1 877.5,1046.8 866.9,1046.6 856.3,1046.3 845.6,1046 835,1045.7 824.4,1045.5 813.7,1045.2 803.1,1044.9 792.5,1044.7 781.8,1044.4 771.2,1044.1 760.6,1043.8 750,1043.6 739.4,1043.3 728.8,1043 718.2,1042.8 707.6,1042.5 697,1042.2 686.3,1041.9 675.8,1041.7 665.2,1041.4 654.6,1041.1 644,1040.9 633.4,1040.6"/><polygon points="635.4,992.5 645.8,992.8 656.2,993 666.6,993.3 677,993.5 687.3,993.8 697.7,994.1 708.1,994.3 718.5,994.6 728.9,994.9 739.3,995.1 749.7,995.4 760.1,995.6 770.5,995.9 781,996.2 791.4,996.4 801.8,996.7 812.2,996.9 822.6,997.2 833,997.5 843.5,997.7 853.9,998 864.3,998.3 874.8,998.5 885.2,998.8 889.1,998.8 893,998.5 896.8,998 900.6,997.3 904.2,996.4 907.7,995.3 911.1,994 914.4,992.4 917.4,990.7 920.3,988.8 923,986.7 929.9,980.8 936.8,975 943.6,969.2 950.4,963.5 957.2,957.8 963.9,952.1 970.6,946.4 977.3,940.8 983.9,935.2 990.5,929.6 997.1,924.1 1003.6,918.6 1010.1,913.1 1016.6,907.6 1023,902.2 1029.4,896.8 1035.8,891.4 1042.1,886.1 1048.4,880.8 1054.6,875.5 1060.9,870.2 1067.1,865 1073.3,859.8 1079.4,854.6 1085.5,849.4 1091.6,844.3 1097.6,839.2 1140.1,868.2 1134.1,873.5 1128,878.8 1121.9,884.1 1115.8,889.4 1109.7,894.8 1103.5,900.2 1097.3,905.6 1091,911 1084.8,916.5 1078.4,922 1072.1,927.5 1065.7,933.1 1059.3,938.7 1052.9,944.3 1046.4,949.9 1039.9,955.6 1033.3,961.3 1026.8,967.1 1020.1,972.8 1013.5,978.6 1006.8,984.5 1000.1,990.3 993.3,996.2 986.5,1002.1 979.7,1008.1 972.8,1014.1 965.9,1020.1 960.5,1024.5 954.7,1028.5 948.5,1032.1 941.8,1035.3 934.9,1038.1 927.7,1040.5 920.2,1042.4 912.5,1043.9 904.6,1044.9 896.6,1045.4 888.5,1045.4 877.8,1045.1 867.2,1044.9 856.5,1044.6 845.9,1044.3 835.2,1044.1 824.6,1043.8 814,1043.5 803.3,1043.2 792.7,1043 782,1042.7 771.4,1042.4 760.8,1042.2 750.2,1041.9 739.5,1041.6 728.9,1041.3 718.3,1041.1 707.7,1040.8 697.1,1040.5 686.5,1040.3 675.8,1040 665.2,1039.7 654.6,1039.4 644,1039.2 633.4,1038.9"/><polygon points="635.5,990.8 645.9,991.1 656.3,991.3 666.7,991.6 677.1,991.8 687.5,992.1 697.9,992.4 708.3,992.6 718.7,992.9 729.1,993.2 739.5,993.4 749.9,993.7 760.3,993.9 770.7,994.2 781.2,994.5 791.6,994.7 802,995 812.4,995.2 822.9,995.5 833.3,995.8 843.7,996 854.2,996.3 864.6,996.6 875,996.8 885.5,997.1 889.4,997.1 893.3,996.8 897.1,996.3 900.9,995.7 904.5,994.7 908.1,993.6 911.5,992.3 914.7,990.7 917.8,989 920.6,987.1 923.3,985 930.2,979.1 937.1,973.3 944,967.5 950.8,961.8 957.6,956.1 964.3,950.4 971,944.7 977.7,939.1 984.3,933.5 990.9,927.9 997.5,922.4 1004,916.9 1010.5,911.4 1017,905.9 1023.4,900.5 1029.8,895.1 1036.2,889.7 1042.5,884.4 1048.8,879 1055.1,873.8 1061.3,868.5 1067.5,863.3 1073.7,858 1079.8,852.9 1085.9,847.7 1092,842.6 1098.1,837.5 1140.6,866.5 1134.6,871.8 1128.5,877 1122.4,882.4 1116.3,887.7 1110.2,893.1 1104,898.4 1097.8,903.9 1091.5,909.3 1085.2,914.8 1078.9,920.3 1072.6,925.8 1066.2,931.4 1059.8,937 1053.3,942.6 1046.8,948.2 1040.3,953.9 1033.8,959.6 1027.2,965.4 1020.6,971.1 1013.9,976.9 1007.2,982.8 1000.5,988.6 993.7,994.5 986.9,1000.5 980.1,1006.4 973.2,1012.4 966.3,1018.4 960.9,1022.8 955.1,1026.8 948.8,1030.4 942.2,1033.6 935.2,1036.4 928,1038.8 920.5,1040.7 912.8,1042.2 904.9,1043.2 896.9,1043.7 888.8,1043.7 878.1,1043.5 867.5,1043.2 856.8,1042.9 846.1,1042.6 835.5,1042.4 824.8,1042.1 814.2,1041.8 803.5,1041.6 792.9,1041.3 782.2,1041 771.6,1040.7 761,1040.5 750.3,1040.2 739.7,1039.9 729.1,1039.6 718.4,1039.4 707.8,1039.1 697.2,1038.8 686.6,1038.6 675.9,1038.3 665.3,1038 654.7,1037.7 644.1,1037.5 633.5,1037.2"/></g><polygon points="635.5,989.1 645.9,989.4 656.3,989.6 666.7,989.9 677.2,990.1 687.6,990.4 698,990.7 708.4,990.9 718.8,991.2 729.2,991.5 739.6,991.7 750.1,992 760.5,992.2 770.9,992.5 781.3,992.8 791.8,993 802.2,993.3 812.7,993.5 823.1,993.8 833.5,994.1 844,994.3 854.4,994.6 864.9,994.9 875.3,995.1 885.8,995.4 889.7,995.4 893.6,995.1 897.4,994.6 901.2,993.9 904.8,993 908.4,991.9 911.8,990.6 915,989 918.1,987.3 921,985.4 923.6,983.3 930.6,977.4 937.5,971.6 944.3,965.8 951.1,960.1 957.9,954.4 964.7,948.7 971.4,943 978.1,937.4 984.7,931.8 991.3,926.2 997.9,920.7 1004.4,915.1 1010.9,909.7 1017.4,904.2 1023.8,898.8 1030.2,893.4 1036.6,888 1042.9,882.7 1049.2,877.3 1055.5,872 1061.7,866.8 1068,861.5 1074.1,856.3 1080.3,851.1 1086.4,846 1092.5,840.8 1098.5,835.7 1141.1,864.8 1135.1,870 1129,875.3 1122.9,880.6 1116.8,886 1110.6,891.3 1104.4,896.7 1098.2,902.1 1092,907.6 1085.7,913.1 1079.4,918.6 1073,924.1 1066.6,929.7 1060.2,935.3 1053.8,940.9 1047.3,946.5 1040.8,952.2 1034.2,957.9 1027.6,963.7 1021,969.4 1014.3,975.2 1007.6,981.1 1000.9,986.9 994.1,992.8 987.3,998.8 980.5,1004.7 973.6,1010.7 966.7,1016.7 961.3,1021.1 955.4,1025.1 949.2,1028.7 942.5,1031.9 935.6,1034.7 928.3,1037.1 920.8,1039 913.1,1040.5 905.2,1041.5 897.2,1042 889.1,1042 878.4,1041.8 867.7,1041.5 857.1,1041.2 846.4,1041 835.7,1040.7 825.1,1040.4 814.4,1040.1 803.8,1039.9 793.1,1039.6 782.4,1039.3 771.8,1039 761.1,1038.8 750.5,1038.5 739.9,1038.2 729.2,1038 718.6,1037.7 707.9,1037.4 697.3,1037.1 686.7,1036.9 676,1036.6 665.4,1036.3 654.8,1036.1 644.2,1035.8 633.5,1035.5" fill="#858585"/><polygon points="635.4,991.6 640.8,991.8 646.1,991.9 651.4,992 656.7,992.2 662.1,992.3 667.4,992.4 672.7,992.6 678,992.7 683.4,992.8 688.7,993 694,993.1 699.4,993.2 704.7,993.4 710,993.5 715.4,993.6 720.7,993.8 726,993.9 731.4,994 736.7,994.2 742.1,994.3 747.4,994.4 752.7,994.6 753.2,1035.9 747.7,1035.8 742.3,1035.7 736.9,1035.5 731.4,1035.4 726,1035.2 720.5,1035.1 715.1,1035 709.7,1034.8 704.2,1034.7 698.8,1034.5 693.4,1034.4 687.9,1034.3 682.5,1034.1 677.1,1034 671.7,1033.9 666.2,1033.7 660.8,1033.6 655.4,1033.4 649.9,1033.3 644.5,1033.2 639.1,1033 633.7,1032.9" fill="#222"/><polygon points="1037.2,891.2 1040.3,888.5 1043.4,885.9 1046.5,883.3 1049.6,880.7 1052.7,878.1 1055.7,875.5 1058.8,872.9 1061.8,870.3 1064.9,867.7 1067.9,865.2 1071,862.6 1074,860.1 1077,857.5 1080,855 1083,852.4 1086,849.9 1089,847.4 1092,844.8 1094.9,842.3 1132.8,868.3 1129.8,870.9 1126.9,873.5 1123.9,876 1120.9,878.6 1117.9,881.2 1114.9,883.8 1111.9,886.5 1108.9,889.1 1105.9,891.7 1102.8,894.3 1099.8,897 1096.8,899.6 1093.7,902.3 1090.6,905 1087.6,907.6 1084.5,910.3 1081.4,913 1078.3,915.7 1075.2,918.4" fill="#222"/><path d="M671.8 991.7L670.6 1034.7M737.9 993.4L738 1036.4M804.1 995L805.6 1038.1M870.4 996.7L873.2 1039.9M917.4 989.8L951.9 1024.9M958.6 956.3L998.4 986.5M1000.1 921.2L1039.8 950.4M1040.3 887.3L1079.9 915.6M1079.2 854.4L1118.7 881.8" stroke="#f0a400" stroke-width="1.6"/><g fill="#5fa064" fill-opacity="0.85"><polygon points="720.3,1014.2 689,1004 688.7,1022.9"/><polygon points="787.1,1015.9 755.5,1005.7 755.8,1024.6"/><polygon points="854.1,1017.6 822.1,1007.4 822.9,1026.4"/><polygon points="920.2,1015 886.7,1010.4 893,1029.1"/><polygon points="967.2,980.9 938.2,991.4 955.8,1005"/><polygon points="1009,945 980.7,955.2 998.2,968.4"/><polygon points="1049.5,910.3 1021.9,920.2 1039.3,932.9"/><polygon points="1088.7,876.7 1061.7,886.3 1079.1,898.6"/></g><path d="M635.5 989.1L645.9 989.4L656.3 989.6L666.7 989.9L677.2 990.1L687.6 990.4L698 990.7L708.4 990.9L718.8 991.2L729.2 991.5L739.6 991.7L750.1 992L760.5 992.2L770.9 992.5L781.3 992.8L791.8 993L802.2 993.3L812.7 993.5L823.1 993.8L833.5 994.1L844 994.3L854.4 994.6L864.9 994.9L875.3 995.1L885.8 995.4L889.7 995.4L893.6 995.1L897.4 994.6L901.2 993.9L904.8 993L908.4 991.9L911.8 990.6L915 989L918.1 987.3L921 985.4L923.6 983.3L930.6 977.4L937.5 971.6L944.3 965.8L951.1 960.1L957.9 954.4L964.7 948.7L971.4 943L978.1 937.4L984.7 931.8L991.3 926.2L997.9 920.7L1004.4 915.1L1010.9 909.7L1017.4 904.2L1023.8 898.8L1030.2 893.4L1036.6 888L1042.9 882.7L1049.2 877.3L1055.5 872L1061.7 866.8L1068 861.5L1074.1 856.3L1080.3 851.1L1086.4 846L1092.5 840.8L1098.5 835.7M633.5 1035.5L644.2 1035.8L654.8 1036.1L665.4 1036.3L676 1036.6L686.7 1036.9L697.3 1037.1L707.9 1037.4L718.6 1037.7L729.2 1038L739.9 1038.2L750.5 1038.5L761.1 1038.8L771.8 1039L782.4 1039.3L793.1 1039.6L803.8 1039.9L814.4 1040.1L825.1 1040.4L835.7 1040.7L846.4 1041L857.1 1041.2L867.7 1041.5L878.4 1041.8L889.1 1042L897.2 1042L905.2 1041.5L913.1 1040.5L920.8 1039L928.3 1037.1L935.6 1034.7L942.5 1031.9L949.2 1028.7L955.4 1025.1L961.3 1021.1L966.7 1016.7L973.6 1010.7L980.5 1004.7L987.3 998.8L994.1 992.8L1000.9 986.9L1007.6 981.1L1014.3 975.2L1021 969.4L1027.6 963.7L1034.2 957.9L1040.8 952.2L1047.3 946.5L1053.8 940.9L1060.2 935.3L1066.6 929.7L1073 924.1L1079.4 918.6L1085.7 913.1L1092 907.6L1098.2 902.1L1104.4 896.7L1110.6 891.3L1116.8 886L1122.9 880.6L1129 875.3L1135.1 870L1141.1 864.8" fill="none" stroke="#f00" stroke-width="3"/><path d="M470.7 849.7L472.4 881.6M436.1 873L438.4 904.9M508.1 882.2L509.2 914M473.4 906.3L475.1 938.1M546.7 915.8L547.2 947.5M511.8 940.6L512.9 972.3M586.5 950.4L586.3 982.1M551.6 976.1L552 1007.7M627.7 986.2L626.8 1017.7M592.7 1012.8L592.4 1044.2M670.2 1023.2L668.5 1054.6M635.1 1050.7L634.1 1082M712.2 1059L709.7 1090.3M682.3 1091.4L680.3 1122.5M757.5 1070.7L754.2 1101.9M758 1112.7L754.6 1143.7M821.5 1072.3L817 1103.5M823.2 1114.5L818.6 1145.4M885.6 1074L879.9 1105.2M888.4 1116.2L882.6 1147.1M949.7 1075.7L942.9 1106.8M953.8 1117.9L946.8 1148.9M992.9 1067.2L985.3 1098.4M1029.1 1099.5L1020.8 1130.6M1032.5 1032.4L1024.4 1063.8M1071 1061.9L1062.1 1093.1M1071.5 997.3L1062.8 1028.8M1109.9 1025.8L1100.4 1057.2M1109.3 963.3L1100 994.9M1147.5 991L1137.5 1022.5M1145.9 930.3L1136.1 962M1184 957.1L1173.5 988.8M1181.4 898.3L1171.2 930.1M1219.4 924.4L1208.4 956.1M1215.8 867.3L1205.2 899.1M1253.7 892.6L1242.3 924.3" stroke="#b2b2b2" stroke-width="6"/><path d="M472.4 881.6L473.1 893M438.4 904.9L439.3 916.3M509.2 914L509.6 925.5M475.1 938.1L475.7 949.5M547.2 947.5L547.3 958.9M512.9 972.3L513.3 983.7M586.3 982.1L586.3 993.5M552 1007.7L552.1 1019M626.8 1017.7L626.4 1029.1M592.4 1044.2L592.2 1055.5M668.5 1054.6L667.9 1065.9M634.1 1082L633.7 1093.2M709.7 1090.3L708.8 1101.5M680.3 1122.5L679.6 1133.7M754.2 1101.9L753 1113.1M754.6 1143.7L753.4 1154.9M817 1103.5L815.4 1114.7M818.6 1145.4L816.9 1156.6M879.9 1105.2L877.9 1116.4M882.6 1147.1L880.6 1158.3M942.9 1106.8L940.5 1118M946.8 1148.9L944.3 1160M985.3 1098.4L982.6 1109.6M1020.8 1130.6L1017.8 1141.8M1024.4 1063.8L1021.4 1075M1062.1 1093.1L1058.9 1104.3M1062.8 1028.8L1059.6 1040.1M1100.4 1057.2L1097 1068.5M1100 994.9L1096.7 1006.3M1137.5 1022.5L1133.9 1033.8M1136.1 962L1132.6 973.4M1173.5 988.8L1169.7 1000.1M1171.2 930.1L1167.5 941.5M1208.4 956.1L1204.5 967.5M1205.2 899.1L1201.4 910.6M1242.3 924.3L1238.3 935.8" stroke="#284848" stroke-width="8.5"/><g fill="#e00000"><polygon points="452.4,829.2 458.5,834.5 464.7,839.9 470.8,845.2 477,850.6 483.3,856 489.5,861.5 495.9,866.9 502.2,872.4 508.6,878 515,883.5 521.4,889.1 527.9,894.7 534.4,900.4 540.9,906 547.5,911.7 554.1,917.5 560.8,923.2 567.5,929 574.2,934.9 580.9,940.7 587.7,946.6 594.6,952.6 601.4,958.5 608.3,964.5 615.3,970.6 622.3,976.6 629.3,982.7 636.4,988.8 643.5,995 650.6,1001.2 657.8,1007.4 665,1013.7 672.3,1020 679.6,1026.3 686.9,1032.7 694.3,1039.1 701.8,1045.6 709.2,1052.1 712.2,1054.4 715.3,1056.6 718.5,1058.6 722,1060.4 725.6,1062 729.3,1063.4 733.1,1064.6 737,1065.5 741,1066.2 745,1066.7 749,1066.9 760,1067.2 770.9,1067.5 781.9,1067.7 792.9,1068 803.9,1068.3 814.8,1068.6 825.8,1068.9 836.8,1069.2 847.8,1069.4 858.8,1069.7 869.8,1070 880.8,1070.3 891.8,1070.6 902.8,1070.9 913.8,1071.1 924.8,1071.4 935.8,1071.7 946.8,1072 957.9,1072.3 961.9,1072.3 965.9,1072 969.8,1071.5 973.6,1070.8 977.3,1069.8 980.9,1068.6 984.4,1067.2 987.6,1065.5 990.7,1063.7 993.6,1061.7 996.3,1059.4 1003.1,1053.3 1009.9,1047.2 1016.7,1041.1 1023.4,1035.1 1030.1,1029.1 1036.8,1023.1 1043.4,1017.2 1049.9,1011.3 1056.5,1005.4 1063,999.5 1069.5,993.7 1075.9,987.9 1082.3,982.2 1088.7,976.4 1095,970.7 1101.4,965.1 1107.6,959.4 1113.9,953.8 1120.1,948.3 1126.3,942.7 1132.4,937.2 1138.5,931.7 1144.6,926.2 1150.7,920.8 1156.7,915.4 1162.7,910 1168.6,904.6 1174.6,899.3 1180.5,894 1186.3,888.7 1192.2,883.5 1198,878.3 1203.8,873.1 1209.5,867.9 1215.2,862.8 1220.9,857.7 1226.6,852.6 1232.2,847.5 1276.6,876.6 1271,881.8 1265.3,887.1 1259.7,892.3 1254,897.6 1248.3,903 1242.5,908.3 1236.7,913.7 1230.9,919.1 1225.1,924.5 1219.2,930 1213.3,935.4 1207.4,940.9 1201.4,946.5 1195.4,952.1 1189.4,957.7 1183.3,963.3 1177.2,968.9 1171.1,974.6 1165,980.3 1158.8,986.1 1152.6,991.9 1146.3,997.7 1140,1003.5 1133.7,1009.4 1127.4,1015.3 1121,1021.2 1114.6,1027.2 1108.1,1033.2 1101.6,1039.2 1095.1,1045.3 1088.5,1051.4 1081.9,1057.5 1075.3,1063.6 1068.6,1069.8 1061.9,1076.1 1055.2,1082.3 1048.4,1088.6 1041.6,1095 1036.2,1099.6 1030.3,1103.8 1024,1107.7 1017.4,1111.1 1010.3,1114.1 1003,1116.6 995.3,1118.7 987.4,1120.2 979.4,1121.3 971.1,1121.8 962.8,1121.9 951.6,1121.6 940.3,1121.3 929.1,1121 917.8,1120.7 906.6,1120.4 895.3,1120.1 884.1,1119.8 872.9,1119.5 861.6,1119.2 850.4,1118.9 839.2,1118.6 827.9,1118.3 816.7,1118 805.5,1117.7 794.3,1117.4 783,1117.1 771.8,1116.8 760.6,1116.5 749.4,1116.2 741.1,1115.8 732.9,1114.8 724.7,1113.3 716.7,1111.3 708.8,1108.9 701.2,1106 693.9,1102.6 686.8,1098.9 680.2,1094.7 673.9,1090.1 668,1085.2 660.5,1078.5 653.1,1071.9 645.7,1065.3 638.4,1058.7 631.1,1052.2 623.8,1045.7 616.6,1039.3 609.5,1032.9 602.3,1026.5 595.2,1020.1 588.2,1013.8 581.2,1007.6 574.2,1001.3 567.3,995.1 560.4,989 553.5,982.8 546.7,976.8 539.9,970.7 533.2,964.7 526.5,958.7 519.8,952.7 513.2,946.8 506.6,940.9 500,935 493.5,929.2 487,923.4 480.6,917.6 474.2,911.9 467.8,906.2 461.4,900.5 455.1,894.8 448.9,889.2 442.6,883.6 436.4,878.1 430.2,872.5 424.1,867 418,861.6 411.9,856.1"/><polygon points="452.3,827.5 458.4,832.8 464.6,838.2 470.7,843.5 477,848.9 483.2,854.3 489.5,859.8 495.8,865.2 502.1,870.7 508.5,876.3 514.9,881.8 521.4,887.4 527.8,893 534.3,898.7 540.9,904.3 547.5,910 554.1,915.8 560.8,921.5 567.4,927.3 574.2,933.2 580.9,939 587.7,944.9 594.6,950.9 601.5,956.8 608.4,962.8 615.3,968.9 622.3,974.9 629.4,981 636.4,987.1 643.5,993.3 650.7,999.5 657.9,1005.7 665.1,1012 672.4,1018.3 679.7,1024.7 687.1,1031 694.5,1037.5 701.9,1043.9 709.4,1050.4 712.3,1052.7 715.4,1054.9 718.7,1056.9 722.1,1058.7 725.7,1060.3 729.4,1061.7 733.3,1062.9 737.2,1063.8 741.1,1064.5 745.1,1065 749.2,1065.2 760.1,1065.5 771.1,1065.8 782.1,1066.1 793.1,1066.3 804.1,1066.6 815.1,1066.9 826.1,1067.2 837.1,1067.5 848.1,1067.8 859.1,1068.1 870.1,1068.3 881.1,1068.6 892.1,1068.9 903.1,1069.2 914.1,1069.5 925.2,1069.8 936.2,1070 947.2,1070.3 958.2,1070.6 962.3,1070.6 966.2,1070.3 970.2,1069.8 974,1069.1 977.7,1068.1 981.3,1066.9 984.8,1065.5 988,1063.9 991.1,1062 994,1060 996.7,1057.8 1003.5,1051.6 1010.3,1045.5 1017.1,1039.4 1023.8,1033.4 1030.5,1027.4 1037.2,1021.4 1043.8,1015.5 1050.4,1009.6 1056.9,1003.7 1063.5,997.8 1069.9,992 1076.4,986.2 1082.8,980.5 1089.2,974.7 1095.5,969 1101.8,963.4 1108.1,957.7 1114.4,952.1 1120.6,946.6 1126.8,941 1132.9,935.5 1139,930 1145.1,924.5 1151.2,919.1 1157.2,913.7 1163.2,908.3 1169.2,902.9 1175.1,897.6 1181,892.3 1186.9,887 1192.7,881.8 1198.5,876.6 1204.3,871.4 1210.1,866.2 1215.8,861.1 1221.5,855.9 1227.2,850.9 1232.8,845.8 1277.2,874.9 1271.6,880.1 1266,885.4 1260.3,890.6 1254.6,895.9 1248.9,901.3 1243.1,906.6 1237.3,912 1231.5,917.4 1225.7,922.8 1219.8,928.3 1213.9,933.7 1207.9,939.3 1202,944.8 1196,950.4 1190,956 1183.9,961.6 1177.8,967.2 1171.7,972.9 1165.5,978.7 1159.3,984.4 1153.1,990.2 1146.9,996 1140.6,1001.8 1134.2,1007.7 1127.9,1013.6 1121.5,1019.5 1115.1,1025.5 1108.6,1031.5 1102.1,1037.5 1095.6,1043.6 1089,1049.7 1082.4,1055.8 1075.8,1062 1069.1,1068.2 1062.4,1074.4 1055.7,1080.7 1048.9,1087 1042.1,1093.3 1036.7,1097.9 1030.8,1102.2 1024.5,1106 1017.8,1109.5 1010.7,1112.4 1003.4,1115 995.7,1117 987.8,1118.6 979.8,1119.6 971.5,1120.2 963.2,1120.2 951.9,1119.9 940.7,1119.6 929.4,1119.3 918.2,1119 906.9,1118.7 895.6,1118.4 884.4,1118.1 873.1,1117.8 861.9,1117.5 850.7,1117.2 839.4,1117 828.2,1116.7 816.9,1116.4 805.7,1116.1 794.5,1115.8 783.3,1115.5 772,1115.2 760.8,1114.9 749.6,1114.6 741.3,1114.1 733,1113.1 724.8,1111.6 716.8,1109.7 709,1107.2 701.3,1104.3 694,1101 687,1097.2 680.3,1093 674,1088.5 668.1,1083.6 660.6,1076.9 653.2,1070.2 645.8,1063.6 638.4,1057.1 631.1,1050.5 623.9,1044.1 616.7,1037.6 609.5,1031.2 602.3,1024.8 595.3,1018.5 588.2,1012.2 581.2,1005.9 574.2,999.7 567.3,993.5 560.4,987.3 553.5,981.2 546.7,975.1 539.9,969 533.2,963 526.4,957 519.8,951 513.1,945.1 506.5,939.2 500,933.3 493.5,927.5 487,921.7 480.5,915.9 474.1,910.2 467.7,904.5 461.3,898.8 455,893.1 448.7,887.5 442.5,881.9 436.3,876.4 430.1,870.8 423.9,865.3 417.8,859.9 411.7,854.4"/><polygon points="452.2,825.8 458.3,831.1 464.5,836.5 470.7,841.8 476.9,847.2 483.1,852.6 489.4,858 495.7,863.5 502.1,869 508.4,874.5 514.9,880.1 521.3,885.7 527.8,891.3 534.3,897 540.9,902.6 547.5,908.3 554.1,914.1 560.7,919.8 567.4,925.6 574.2,931.5 580.9,937.3 587.8,943.2 594.6,949.2 601.5,955.1 608.4,961.1 615.4,967.2 622.4,973.2 629.4,979.3 636.5,985.5 643.6,991.6 650.8,997.8 658,1004.1 665.2,1010.3 672.5,1016.6 679.8,1023 687.2,1029.4 694.6,1035.8 702,1042.2 709.5,1048.7 712.4,1051.1 715.5,1053.2 718.8,1055.2 722.3,1057.1 725.9,1058.7 729.6,1060 733.4,1061.2 737.3,1062.1 741.3,1062.8 745.3,1063.3 749.3,1063.5 760.3,1063.8 771.3,1064.1 782.3,1064.4 793.3,1064.7 804.3,1065 815.3,1065.2 826.3,1065.5 837.3,1065.8 848.3,1066.1 859.4,1066.4 870.4,1066.7 881.4,1066.9 892.4,1067.2 903.4,1067.5 914.5,1067.8 925.5,1068.1 936.5,1068.4 947.6,1068.7 958.6,1068.9 962.6,1068.9 966.6,1068.7 970.6,1068.2 974.4,1067.4 978.1,1066.4 981.7,1065.2 985.2,1063.8 988.4,1062.2 991.5,1060.3 994.4,1058.3 997.1,1056.1 1004,1049.9 1010.8,1043.8 1017.5,1037.8 1024.3,1031.7 1031,1025.7 1037.6,1019.7 1044.3,1013.8 1050.8,1007.9 1057.4,1002 1063.9,996.1 1070.4,990.3 1076.9,984.5 1083.3,978.8 1089.7,973.1 1096,967.4 1102.3,961.7 1108.6,956 1114.9,950.4 1121.1,944.9 1127.3,939.3 1133.4,933.8 1139.6,928.3 1145.6,922.8 1151.7,917.4 1157.7,912 1163.7,906.6 1169.7,901.2 1175.6,895.9 1181.5,890.6 1187.4,885.3 1193.3,880.1 1199.1,874.9 1204.9,869.7 1210.6,864.5 1216.4,859.4 1222.1,854.2 1227.8,849.1 1233.4,844.1 1277.8,873.2 1272.2,878.4 1266.6,883.7 1260.9,888.9 1255.2,894.2 1249.5,899.5 1243.7,904.9 1237.9,910.3 1232.1,915.7 1226.3,921.1 1220.4,926.6 1214.5,932 1208.5,937.6 1202.6,943.1 1196.6,948.7 1190.5,954.3 1184.5,959.9 1178.4,965.6 1172.2,971.2 1166.1,977 1159.9,982.7 1153.7,988.5 1147.4,994.3 1141.1,1000.1 1134.8,1006 1128.4,1011.9 1122,1017.8 1115.6,1023.8 1109.1,1029.8 1102.6,1035.8 1096.1,1041.9 1089.5,1048 1082.9,1054.1 1076.3,1060.3 1069.6,1066.5 1062.9,1072.7 1056.1,1079 1049.4,1085.3 1042.5,1091.6 1037.1,1096.3 1031.2,1100.5 1024.9,1104.4 1018.2,1107.8 1011.2,1110.8 1003.8,1113.3 996.1,1115.4 988.2,1116.9 980.2,1118 971.9,1118.5 963.6,1118.6 952.3,1118.3 941,1118 929.8,1117.7 918.5,1117.4 907.2,1117.1 896,1116.8 884.7,1116.5 873.4,1116.2 862.2,1115.9 850.9,1115.6 839.7,1115.3 828.4,1115 817.2,1114.7 805.9,1114.4 794.7,1114.1 783.5,1113.8 772.2,1113.5 761,1113.2 749.8,1112.9 741.4,1112.4 733.2,1111.5 725,1110 717,1108 709.1,1105.6 701.5,1102.7 694.1,1099.3 687.1,1095.5 680.4,1091.3 674.1,1086.8 668.2,1081.9 660.7,1075.2 653.2,1068.6 645.9,1062 638.5,1055.4 631.2,1048.9 623.9,1042.4 616.7,1035.9 609.5,1029.5 602.4,1023.1 595.3,1016.8 588.2,1010.5 581.2,1004.2 574.2,998 567.3,991.8 560.4,985.6 553.5,979.5 546.7,973.4 539.9,967.3 533.1,961.3 526.4,955.3 519.7,949.3 513.1,943.4 506.5,937.5 499.9,931.6 493.4,925.8 486.9,920 480.4,914.2 474,908.5 467.6,902.8 461.2,897.1 454.9,891.4 448.6,885.8 442.4,880.2 436.1,874.7 430,869.1 423.8,863.6 417.7,858.2 411.6,852.7"/><polygon points="452.1,824.1 458.2,829.4 464.4,834.7 470.6,840.1 476.8,845.5 483,850.9 489.3,856.3 495.6,861.8 502,867.3 508.4,872.8 514.8,878.4 521.3,884 527.7,889.6 534.3,895.2 540.8,900.9 547.4,906.6 554.1,912.4 560.7,918.1 567.4,923.9 574.2,929.8 580.9,935.6 587.8,941.5 594.6,947.5 601.5,953.4 608.4,959.4 615.4,965.5 622.4,971.5 629.5,977.6 636.5,983.8 643.7,989.9 650.8,996.1 658,1002.4 665.3,1008.6 672.6,1014.9 679.9,1021.3 687.3,1027.7 694.7,1034.1 702.1,1040.5 709.6,1047 712.6,1049.4 715.7,1051.6 719,1053.6 722.4,1055.4 726,1057 729.7,1058.4 733.6,1059.5 737.5,1060.5 741.4,1061.2 745.5,1061.6 749.5,1061.9 760.5,1062.1 771.5,1062.4 782.5,1062.7 793.5,1063 804.5,1063.3 815.6,1063.6 826.6,1063.8 837.6,1064.1 848.6,1064.4 859.6,1064.7 870.7,1065 881.7,1065.3 892.7,1065.5 903.8,1065.8 914.8,1066.1 925.8,1066.4 936.9,1066.7 947.9,1067 959,1067.3 963,1067.2 967,1067 970.9,1066.5 974.8,1065.7 978.5,1064.8 982.1,1063.6 985.6,1062.1 988.8,1060.5 991.9,1058.7 994.8,1056.6 997.5,1054.4 1004.4,1048.3 1011.2,1042.2 1018,1036.1 1024.7,1030 1031.4,1024 1038.1,1018 1044.7,1012.1 1051.3,1006.2 1057.9,1000.3 1064.4,994.5 1070.9,988.6 1077.3,982.8 1083.8,977.1 1090.1,971.4 1096.5,965.7 1102.8,960 1109.1,954.3 1115.4,948.7 1121.6,943.2 1127.8,937.6 1133.9,932.1 1140.1,926.6 1146.2,921.1 1152.2,915.7 1158.3,910.3 1164.3,904.9 1170.2,899.5 1176.2,894.2 1182.1,888.9 1188,883.6 1193.8,878.4 1199.6,873.2 1205.4,868 1211.2,862.8 1216.9,857.6 1222.7,852.5 1228.3,847.4 1234,842.4 1278.5,871.5 1272.8,876.7 1267.2,882 1261.5,887.2 1255.8,892.5 1250.1,897.8 1244.3,903.2 1238.5,908.6 1232.7,914 1226.8,919.4 1221,924.8 1215.1,930.3 1209.1,935.8 1203.1,941.4 1197.1,947 1191.1,952.6 1185,958.2 1178.9,963.9 1172.8,969.5 1166.6,975.3 1160.4,981 1154.2,986.8 1147.9,992.6 1141.6,998.4 1135.3,1004.3 1128.9,1010.2 1122.5,1016.2 1116.1,1022.1 1109.6,1028.1 1103.1,1034.2 1096.6,1040.2 1090,1046.3 1083.4,1052.4 1076.8,1058.6 1070.1,1064.8 1063.4,1071 1056.6,1077.3 1049.8,1083.6 1043,1090 1037.6,1094.6 1031.7,1098.8 1025.4,1102.7 1018.7,1106.1 1011.6,1109.1 1004.2,1111.6 996.6,1113.7 988.7,1115.2 980.6,1116.3 972.3,1116.8 964,1116.9 952.7,1116.6 941.4,1116.3 930.1,1116 918.8,1115.7 907.6,1115.4 896.3,1115.1 885,1114.8 873.7,1114.5 862.5,1114.2 851.2,1113.9 839.9,1113.6 828.7,1113.3 817.4,1113 806.2,1112.7 794.9,1112.4 783.7,1112.1 772.4,1111.8 761.2,1111.5 749.9,1111.2 741.6,1110.8 733.3,1109.8 725.1,1108.3 717.1,1106.3 709.2,1103.9 701.6,1101 694.2,1097.6 687.2,1093.8 680.5,1089.7 674.2,1085.1 668.3,1080.2 660.8,1073.5 653.3,1066.9 645.9,1060.3 638.6,1053.7 631.2,1047.2 624,1040.7 616.7,1034.2 609.5,1027.8 602.4,1021.4 595.3,1015.1 588.2,1008.8 581.2,1002.5 574.2,996.3 567.3,990.1 560.3,983.9 553.5,977.8 546.6,971.7 539.8,965.6 533.1,959.6 526.4,953.6 519.7,947.6 513,941.7 506.4,935.8 499.8,929.9 493.3,924.1 486.8,918.3 480.3,912.5 473.9,906.8 467.5,901 461.1,895.4 454.8,889.7 448.5,884.1 442.3,878.5 436,873 429.8,867.4 423.7,861.9 417.5,856.5 411.4,851"/><polygon points="452,822.4 458.1,827.7 464.3,833 470.5,838.4 476.7,843.8 483,849.2 489.2,854.6 495.6,860.1 501.9,865.6 508.3,871.1 514.7,876.7 521.2,882.3 527.7,887.9 534.2,893.5 540.8,899.2 547.4,904.9 554,910.7 560.7,916.4 567.4,922.2 574.2,928.1 581,933.9 587.8,939.8 594.6,945.8 601.5,951.7 608.5,957.7 615.4,963.8 622.5,969.8 629.5,975.9 636.6,982.1 643.7,988.2 650.9,994.4 658.1,1000.7 665.4,1006.9 672.7,1013.2 680,1019.6 687.4,1026 694.8,1032.4 702.3,1038.8 709.8,1045.3 712.7,1047.7 715.8,1049.9 719.1,1051.9 722.6,1053.7 726.2,1055.3 729.9,1056.7 733.7,1057.8 737.6,1058.8 741.6,1059.5 745.6,1059.9 749.7,1060.2 760.7,1060.5 771.7,1060.7 782.7,1061 793.7,1061.3 804.8,1061.6 815.8,1061.9 826.8,1062.2 837.8,1062.4 848.9,1062.7 859.9,1063 871,1063.3 882,1063.6 893,1063.9 904.1,1064.1 915.1,1064.4 926.2,1064.7 937.2,1065 948.3,1065.3 959.4,1065.6 963.4,1065.6 967.4,1065.3 971.3,1064.8 975.2,1064.1 978.9,1063.1 982.5,1061.9 986,1060.5 989.2,1058.8 992.3,1057 995.3,1054.9 997.9,1052.7 1004.8,1046.6 1011.6,1040.5 1018.4,1034.4 1025.1,1028.3 1031.8,1022.3 1038.5,1016.4 1045.2,1010.4 1051.8,1004.5 1058.3,998.6 1064.9,992.8 1071.3,986.9 1077.8,981.1 1084.2,975.4 1090.6,969.7 1097,964 1103.3,958.3 1109.6,952.6 1115.9,947 1122.1,941.4 1128.3,935.9 1134.5,930.4 1140.6,924.9 1146.7,919.4 1152.8,914 1158.8,908.6 1164.8,903.2 1170.8,897.8 1176.7,892.5 1182.6,887.2 1188.5,881.9 1194.4,876.7 1200.2,871.4 1206,866.2 1211.8,861.1 1217.5,855.9 1223.2,850.8 1228.9,845.7 1234.6,840.7 1279.1,869.8 1273.5,875 1267.8,880.2 1262.1,885.5 1256.4,890.8 1250.7,896.1 1244.9,901.5 1239.1,906.9 1233.3,912.3 1227.4,917.7 1221.6,923.1 1215.6,928.6 1209.7,934.1 1203.7,939.7 1197.7,945.3 1191.7,950.9 1185.6,956.5 1179.5,962.1 1173.3,967.8 1167.2,973.6 1161,979.3 1154.7,985.1 1148.5,990.9 1142.2,996.7 1135.8,1002.6 1129.5,1008.5 1123.1,1014.5 1116.6,1020.4 1110.2,1026.4 1103.6,1032.5 1097.1,1038.5 1090.5,1044.6 1083.9,1050.8 1077.3,1056.9 1070.6,1063.1 1063.8,1069.4 1057.1,1075.6 1050.3,1081.9 1043.4,1088.3 1038,1092.9 1032.1,1097.2 1025.8,1101 1019.1,1104.4 1012,1107.4 1004.7,1110 997,1112 989.1,1113.6 981,1114.6 972.7,1115.2 964.4,1115.2 953.1,1114.9 941.8,1114.6 930.5,1114.3 919.2,1114 907.9,1113.7 896.6,1113.4 885.3,1113.1 874,1112.8 862.8,1112.5 851.5,1112.2 840.2,1111.9 828.9,1111.6 817.7,1111.4 806.4,1111.1 795.1,1110.8 783.9,1110.5 772.6,1110.2 761.4,1109.9 750.1,1109.6 741.8,1109.1 733.5,1108.1 725.3,1106.6 717.2,1104.7 709.4,1102.2 701.7,1099.3 694.3,1095.9 687.3,1092.2 680.6,1088 674.3,1083.4 668.4,1078.5 660.9,1071.8 653.4,1065.2 646,1058.6 638.6,1052 631.3,1045.5 624,1039 616.8,1032.5 609.6,1026.1 602.4,1019.7 595.3,1013.4 588.2,1007.1 581.2,1000.8 574.2,994.6 567.2,988.4 560.3,982.2 553.4,976.1 546.6,970 539.8,963.9 533,957.9 526.3,951.9 519.6,945.9 513,940 506.4,934.1 499.8,928.2 493.2,922.4 486.7,916.6 480.2,910.8 473.8,905 467.4,899.3 461,893.7 454.7,888 448.4,882.4 442.1,876.8 435.9,871.2 429.7,865.7 423.5,860.2 417.4,854.7 411.3,849.3"/></g><polygon points="451.9,820.7 458,826 464.2,831.3 470.4,836.7 476.6,842.1 482.9,847.5 489.2,852.9 495.5,858.4 501.9,863.9 508.3,869.4 514.7,875 521.2,880.5 527.7,886.2 534.2,891.8 540.8,897.5 547.4,903.2 554,908.9 560.7,914.7 567.4,920.5 574.2,926.4 581,932.2 587.8,938.1 594.7,944.1 601.6,950 608.5,956 615.5,962.1 622.5,968.1 629.6,974.2 636.7,980.4 643.8,986.5 651,992.7 658.2,999 665.5,1005.2 672.8,1011.5 680.1,1017.9 687.5,1024.3 694.9,1030.7 702.4,1037.1 709.9,1043.6 712.8,1046 715.9,1048.2 719.2,1050.2 722.7,1052 726.3,1053.6 730,1055 733.9,1056.1 737.8,1057.1 741.8,1057.8 745.8,1058.3 749.8,1058.5 760.9,1058.8 771.9,1059 782.9,1059.3 793.9,1059.6 805,1059.9 816,1060.2 827.1,1060.5 838.1,1060.8 849.1,1061 860.2,1061.3 871.2,1061.6 882.3,1061.9 893.3,1062.2 904.4,1062.5 915.5,1062.7 926.5,1063 937.6,1063.3 948.7,1063.6 959.7,1063.9 963.8,1063.9 967.8,1063.6 971.7,1063.1 975.6,1062.4 979.3,1061.4 982.9,1060.2 986.4,1058.8 989.7,1057.1 992.8,1055.3 995.7,1053.3 998.3,1051 1005.2,1044.9 1012,1038.8 1018.8,1032.7 1025.6,1026.6 1032.3,1020.6 1039,1014.7 1045.6,1008.7 1052.2,1002.8 1058.8,996.9 1065.3,991.1 1071.8,985.2 1078.3,979.4 1084.7,973.7 1091.1,967.9 1097.5,962.2 1103.8,956.6 1110.1,950.9 1116.4,945.3 1122.6,939.7 1128.8,934.2 1135,928.7 1141.1,923.2 1147.2,917.7 1153.3,912.3 1159.3,906.8 1165.3,901.5 1171.3,896.1 1177.3,890.8 1183.2,885.5 1189.1,880.2 1194.9,874.9 1200.8,869.7 1206.6,864.5 1212.3,859.4 1218.1,854.2 1223.8,849.1 1229.5,844 1235.1,838.9 1279.7,868.1 1274.1,873.3 1268.4,878.5 1262.8,883.8 1257,889.1 1251.3,894.4 1245.5,899.8 1239.7,905.1 1233.9,910.5 1228,916 1222.1,921.4 1216.2,926.9 1210.3,932.4 1204.3,938 1198.3,943.5 1192.2,949.1 1186.2,954.8 1180,960.4 1173.9,966.1 1167.7,971.9 1161.5,977.6 1155.3,983.4 1149,989.2 1142.7,995 1136.4,1000.9 1130,1006.8 1123.6,1012.8 1117.1,1018.7 1110.7,1024.7 1104.2,1030.8 1097.6,1036.8 1091,1042.9 1084.4,1049.1 1077.7,1055.2 1071.1,1061.4 1064.3,1067.7 1057.6,1073.9 1050.8,1080.3 1043.9,1086.6 1038.5,1091.2 1032.6,1095.5 1026.3,1099.3 1019.6,1102.8 1012.5,1105.8 1005.1,1108.3 997.4,1110.3 989.5,1111.9 981.4,1113 973.1,1113.5 964.8,1113.5 953.5,1113.2 942.1,1112.9 930.8,1112.6 919.5,1112.3 908.2,1112.1 896.9,1111.8 885.6,1111.5 874.3,1111.2 863,1110.9 851.8,1110.6 840.5,1110.3 829.2,1110 817.9,1109.7 806.6,1109.4 795.4,1109.1 784.1,1108.8 772.8,1108.5 761.6,1108.2 750.3,1107.9 741.9,1107.4 733.6,1106.4 725.4,1105 717.4,1103 709.5,1100.5 701.8,1097.6 694.5,1094.3 687.4,1090.5 680.7,1086.3 674.4,1081.7 668.4,1076.8 660.9,1070.2 653.5,1063.5 646.1,1056.9 638.7,1050.3 631.4,1043.8 624.1,1037.3 616.8,1030.8 609.6,1024.4 602.5,1018 595.3,1011.7 588.2,1005.4 581.2,999.1 574.2,992.9 567.2,986.7 560.3,980.5 553.4,974.4 546.6,968.3 539.8,962.2 533,956.2 526.3,950.2 519.6,944.2 512.9,938.3 506.3,932.4 499.7,926.5 493.2,920.6 486.6,914.8 480.2,909.1 473.7,903.3 467.3,897.6 460.9,891.9 454.6,886.3 448.3,880.7 442,875.1 435.8,869.5 429.6,864 423.4,858.5 417.3,853 411.1,847.6" fill="#858585"/><polygon points="455.7,827.4 458.8,830 461.8,832.7 464.9,835.3 467.9,838 471,840.7 474.1,843.3 477.2,846 480.3,848.7 483.4,851.4 486.5,854.1 489.6,856.8 492.8,859.5 495.9,862.2 499.1,864.9 502.2,867.7 505.4,870.4 508.6,873.2 511.8,875.9 514.9,878.7 478.5,904 475.3,901.1 472.2,898.3 469,895.5 465.8,892.7 462.7,889.9 459.6,887.1 456.4,884.3 453.3,881.5 450.2,878.8 447.1,876 444,873.2 440.9,870.5 437.8,867.7 434.7,865 431.7,862.3 428.6,859.6 425.6,856.8 422.5,854.1 419.5,851.4" fill="#222"/><polygon points="1177.4,894.5 1180.4,891.9 1183.3,889.3 1186.2,886.6 1189.1,884 1192,881.4 1194.9,878.8 1197.8,876.2 1200.7,873.6 1203.6,871 1206.5,868.5 1209.3,865.9 1212.2,863.3 1215,860.8 1217.9,858.2 1220.7,855.7 1223.5,853.1 1226.4,850.6 1229.2,848.1 1232,845.6 1271.6,871.6 1268.8,874.2 1266,876.8 1263.2,879.4 1260.4,882 1257.6,884.6 1254.8,887.2 1251.9,889.8 1249.1,892.4 1246.2,895.1 1243.4,897.7 1240.5,900.4 1237.6,903 1234.8,905.7 1231.9,908.4 1229,911 1226.1,913.7 1223.2,916.4 1220.3,919.1 1217.3,921.8" fill="#222"/><path d="M471.8 840.2L434 865.5M509.3 872.6L471.4 898.8M548.1 906.2L510 933.2M588.1 940.8L549.9 968.7M629.4 976.6L591.2 1005.5M672.2 1013.6L633.9 1043.4M714.1 1049.2L681.5 1084.5M758.3 1060.5L758.9 1106.3M822.6 1062.1L824.5 1108M886.9 1063.8L890.1 1109.7M951.4 1065.5L955.9 1111.4M993.3 1057.4L1033 1092.6M1033.1 1022.7L1075.2 1054.8M1072.2 987.6L1114.2 1018.7M1110.1 953.6L1151.9 983.7M1146.8 920.7L1188.5 949.8M1182.5 888.7L1224 917M1217.1 857.7L1258.4 885.1" stroke="#f0a400" stroke-width="1.6"/><g fill="#5fa064" fill-opacity="0.85"><polygon points="481,877.3 470.5,855.3 453.9,866.5"/><polygon points="519.4,911 508.3,888.2 491.6,899.9"/><polygon points="559,945.8 547.4,922.3 530.6,934.3"/><polygon points="600,981.7 587.7,957.4 570.9,969.8"/><polygon points="642.4,1018.9 629.4,993.8 612.5,1006.6"/><polygon points="686.2,1057.4 672.5,1031.4 655.6,1044.6"/><polygon points="742.4,1082.9 713.3,1066.5 708.1,1086"/><polygon points="807.3,1084.4 774.6,1073.5 775,1093.7"/><polygon points="872.3,1086.1 839.3,1075.2 840.3,1095.4"/><polygon points="937.3,1087.8 904,1076.9 905.6,1097.1"/><polygon points="1000.7,1082.8 966,1080 974.8,1099.6"/><polygon points="1044,1047.7 1014.6,1058.9 1033.1,1073.3"/><polygon points="1083.4,1011.8 1054.6,1022.6 1073.1,1036.6"/><polygon points="1121.5,977.1 1093.4,987.5 1111.9,1001.1"/><polygon points="1158.5,943.4 1131,953.6 1149.4,966.7"/><polygon points="1194.3,910.7 1167.4,920.6 1185.7,933.3"/><polygon points="1229.1,879.1 1202.7,888.6 1221,901"/></g><path d="M451.9 820.7L458 826L464.2 831.3L470.4 836.7L476.6 842.1L482.9 847.5L489.2 852.9L495.5 858.4L501.9 863.9L508.3 869.4L514.7 875L521.2 880.5L527.7 886.2L534.2 891.8L540.8 897.5L547.4 903.2L554 908.9L560.7 914.7L567.4 920.5L574.2 926.4L581 932.2L587.8 938.1L594.7 944.1L601.6 950L608.5 956L615.5 962.1L622.5 968.1L629.6 974.2L636.7 980.4L643.8 986.5L651 992.7L658.2 999L665.5 1005.2L672.8 1011.5L680.1 1017.9L687.5 1024.3L694.9 1030.7L702.4 1037.1L709.9 1043.6L712.8 1046L715.9 1048.2L719.2 1050.2L722.7 1052L726.3 1053.6L730 1055L733.9 1056.1L737.8 1057.1L741.8 1057.8L745.8 1058.3L749.8 1058.5L760.9 1058.8L771.9 1059L782.9 1059.3L793.9 1059.6L805 1059.9L816 1060.2L827.1 1060.5L838.1 1060.8L849.1 1061L860.2 1061.3L871.2 1061.6L882.3 1061.9L893.3 1062.2L904.4 1062.5L915.5 1062.7L926.5 1063L937.6 1063.3L948.7 1063.6L959.7 1063.9L963.8 1063.9L967.8 1063.6L971.7 1063.1L975.6 1062.4L979.3 1061.4L982.9 1060.2L986.4 1058.8L989.7 1057.1L992.8 1055.3L995.7 1053.3L998.3 1051L1005.2 1044.9L1012 1038.8L1018.8 1032.7L1025.6 1026.6L1032.3 1020.6L1039 1014.7L1045.6 1008.7L1052.2 1002.8L1058.8 996.9L1065.3 991.1L1071.8 985.2L1078.3 979.4L1084.7 973.7L1091.1 967.9L1097.5 962.2L1103.8 956.6L1110.1 950.9L1116.4 945.3L1122.6 939.7L1128.8 934.2L1135 928.7L1141.1 923.2L1147.2 917.7L1153.3 912.3L1159.3 906.8L1165.3 901.5L1171.3 896.1L1177.3 890.8L1183.2 885.5L1189.1 880.2L1194.9 874.9L1200.8 869.7L1206.6 864.5L1212.3 859.4L1218.1 854.2L1223.8 849.1L1229.5 844L1235.1 838.9M411.1 847.6L417.3 853L423.4 858.5L429.6 864L435.8 869.5L442 875.1L448.3 880.7L454.6 886.3L460.9 891.9L467.3 897.6L473.7 903.3L480.2 909.1L486.6 914.8L493.2 920.6L499.7 926.5L506.3 932.4L512.9 938.3L519.6 944.2L526.3 950.2L533 956.2L539.8 962.2L546.6 968.3L553.4 974.4L560.3 980.5L567.2 986.7L574.2 992.9L581.2 999.1L588.2 1005.4L595.3 1011.7L602.5 1018L609.6 1024.4L616.8 1030.8L624.1 1037.3L631.4 1043.8L638.7 1050.3L646.1 1056.9L653.5 1063.5L660.9 1070.2L668.4 1076.8L674.4 1081.7L680.7 1086.3L687.4 1090.5L694.5 1094.3L701.8 1097.6L709.5 1100.5L717.4 1103L725.4 1105L733.6 1106.4L741.9 1107.4L750.3 1107.9L761.6 1108.2L772.8 1108.5L784.1 1108.8L795.4 1109.1L806.6 1109.4L817.9 1109.7L829.2 1110L840.5 1110.3L851.8 1110.6L863 1110.9L874.3 1111.2L885.6 1111.5L896.9 1111.8L908.2 1112.1L919.5 1112.3L930.8 1112.6L942.1 1112.9L953.5 1113.2L964.8 1113.5L973.1 1113.5L981.4 1113L989.5 1111.9L997.4 1110.3L1005.1 1108.3L1012.5 1105.8L1019.6 1102.8L1026.3 1099.3L1032.6 1095.5L1038.5 1091.2L1043.9 1086.6L1050.8 1080.3L1057.6 1073.9L1064.3 1067.7L1071.1 1061.4L1077.7 1055.2L1084.4 1049.1L1091 1042.9L1097.6 1036.8L1104.2 1030.8L1110.7 1024.7L1117.1 1018.7L1123.6 1012.8L1130 1006.8L1136.4 1000.9L1142.7 995L1149 989.2L1155.3 983.4L1161.5 977.6L1167.7 971.9L1173.9 966.1L1180 960.4L1186.2 954.8L1192.2 949.1L1198.3 943.5L1204.3 938L1210.3 932.4L1216.2 926.9L1222.1 921.4L1228 916L1233.9 910.5L1239.7 905.1L1245.5 899.8L1251.3 894.4L1257 889.1L1262.8 883.8L1268.4 878.5L1274.1 873.3L1279.7 868.1" fill="none" stroke="#f00" stroke-width="3"/><polygon points="623.2,972.4 626.9,975.6 630.6,978.8 634.4,982.1 638.1,985.3 641.9,988.6 645.7,991.9 649.5,995.1 653.3,998.4 657.1,1001.7 660.9,1005.1 664.8,1008.4 668.6,1011.7 672.5,1015.1 676.4,1018.4 680.3,1021.8 643.5,1050.7 639.6,1047.2 635.7,1043.8 631.8,1040.3 628,1036.9 624.2,1033.5 620.3,1030.1 616.5,1026.7 612.7,1023.3 608.9,1020 605.2,1016.6 601.4,1013.3 597.6,1009.9 593.9,1006.6 590.2,1003.3 586.5,1000" fill="#d8d8d8"/><path d="M623.2 972.4L586.5 1000M627.5 976.1L590.8 1003.8M631.8 979.9L595.1 1007.7M636.2 983.6L599.5 1011.5M640.6 987.4L603.8 1015.4M645 991.2L608.2 1019.3M649.4 995.1L612.6 1023.2M653.8 998.9L617.1 1027.2M658.3 1002.7L621.5 1031.1M662.7 1006.6L625.9 1035.1M667.2 1010.5L630.4 1039.1M671.7 1014.3L634.9 1043M676.2 1018.2L639.4 1047" stroke="#5a5a5a" stroke-width="2.6"/><g fill="#e00000"><polygon points="166.9,816.9 176.4,817.1 185.8,817.4 195.3,817.6 204.8,817.8 214.3,818 223.8,818.2 233.3,818.5 242.8,818.7 252.2,818.9 261.7,819.1 271.2,819.3 280.7,819.6 290.2,819.8 299.7,820 309.2,820.2 318.7,820.5 328.3,820.7 337.8,820.9 347.3,821.1 356.8,821.3 366.3,821.6 375.8,821.8 385.3,822 394.9,822.2 404.4,822.5 413.9,822.7 423.4,822.9 433,823.1 442.5,823.3 452,823.6 461.6,823.8 471.1,824 480.6,824.2 490.2,824.5 499.7,824.7 509.3,824.9 518.8,825.1 528.4,825.3 537.9,825.6 547.5,825.8 557,826 566.6,826.2 576.1,826.5 585.7,826.7 595.3,826.9 604.8,827.1 614.4,827.4 624,827.6 633.5,827.8 643.1,828 652.7,828.2 662.3,828.5 671.8,828.7 681.4,828.9 691,829.1 700.6,829.4 710.2,829.6 719.8,829.8 729.3,830 738.9,830.3 748.5,830.5 758.1,830.7 767.7,830.9 777.3,831.2 786.9,831.4 796.5,831.6 806.1,831.8 815.7,832.1 825.4,832.3 835,832.5 844.6,832.7 854.2,832.9 863.8,833.2 873.4,833.4 883,833.6 892.7,833.8 902.3,834.1 911.9,834.3 921.6,834.5 931.2,834.7 940.8,835 950.5,835.2 960.1,835.4 969.7,835.6 979.4,835.9 989,836.1 998.7,836.3 1008.3,836.5 1018,836.8 1027.6,837 1037.3,837.2 1046.9,837.4 1056.6,837.7 1066.2,837.9 1075.9,838.1 1085.6,838.3 1095.2,838.6 1104.9,838.8 1114.6,839 1124.2,839.2 1133.9,839.5 1143.6,839.7 1153.2,839.9 1162.9,840.2 1172.6,840.4 1182.3,840.6 1192,840.8 1201.7,841.1 1211.4,841.3 1221,841.5 1230.7,841.7 1240.4,842 1250.1,842.2 1259.8,842.4 1269.5,842.6 1279.2,842.9 1288.9,843.1 1298.6,843.3 1308.3,843.5 1318.1,843.8 1327.8,844 1337.5,844.2 1347.2,844.5 1356.9,844.7 1366.6,844.9 1376.4,845.1 1386.1,845.4 1395.8,845.6 1408.9,885.7 1398.9,885.4 1389,885.2 1379.1,885 1369.2,884.7 1359.3,884.5 1349.4,884.3 1339.5,884 1329.6,883.8 1319.7,883.6 1309.8,883.3 1299.9,883.1 1290,882.9 1280.1,882.6 1270.2,882.4 1260.3,882.2 1250.4,881.9 1240.5,881.7 1230.6,881.5 1220.8,881.2 1210.9,881 1201,880.7 1191.1,880.5 1181.3,880.3 1171.4,880 1161.5,879.8 1151.7,879.6 1141.8,879.3 1131.9,879.1 1122.1,878.9 1112.2,878.6 1102.4,878.4 1092.5,878.2 1082.6,877.9 1072.8,877.7 1062.9,877.5 1053.1,877.2 1043.3,877 1033.4,876.8 1023.6,876.5 1013.7,876.3 1003.9,876.1 994.1,875.8 984.2,875.6 974.4,875.4 964.6,875.1 954.8,874.9 944.9,874.7 935.1,874.4 925.3,874.2 915.5,874 905.7,873.7 895.8,873.5 886,873.3 876.2,873 866.4,872.8 856.6,872.6 846.8,872.3 837,872.1 827.2,871.9 817.4,871.6 807.6,871.4 797.8,871.2 788,870.9 778.3,870.7 768.5,870.5 758.7,870.2 748.9,870 739.1,869.8 729.3,869.5 719.6,869.3 709.8,869.1 700,868.8 690.2,868.6 680.5,868.4 670.7,868.2 661,867.9 651.2,867.7 641.4,867.5 631.7,867.2 621.9,867 612.2,866.8 602.4,866.5 592.7,866.3 582.9,866.1 573.2,865.8 563.4,865.6 553.7,865.4 543.9,865.1 534.2,864.9 524.5,864.7 514.7,864.4 505,864.2 495.3,864 485.5,863.8 475.8,863.5 466.1,863.3 456.4,863.1 446.7,862.8 436.9,862.6 427.2,862.4 417.5,862.1 407.8,861.9 398.1,861.7 388.4,861.4 378.7,861.2 369,861 359.3,860.8 349.6,860.5 339.9,860.3 330.2,860.1 320.5,859.8 310.8,859.6 301.1,859.4 291.4,859.1 281.7,858.9 272.1,858.7 262.4,858.4 252.7,858.2 243,858 233.3,857.8 223.7,857.5 214,857.3 204.3,857.1 194.7,856.8 185,856.6 175.3,856.4 165.7,856.2 156,855.9"/><polygon points="166.5,815.2 176,815.4 185.5,815.6 195,815.9 204.5,816.1 214,816.3 223.5,816.5 233,816.8 242.5,817 252,817.2 261.5,817.4 271,817.6 280.5,817.9 290,818.1 299.5,818.3 309,818.5 318.5,818.7 328,819 337.6,819.2 347.1,819.4 356.6,819.6 366.1,819.9 375.6,820.1 385.2,820.3 394.7,820.5 404.2,820.7 413.8,821 423.3,821.2 432.8,821.4 442.4,821.6 451.9,821.9 461.5,822.1 471,822.3 480.6,822.5 490.1,822.7 499.7,823 509.2,823.2 518.8,823.4 528.3,823.6 537.9,823.9 547.4,824.1 557,824.3 566.6,824.5 576.1,824.8 585.7,825 595.3,825.2 604.9,825.4 614.4,825.6 624,825.9 633.6,826.1 643.2,826.3 652.7,826.5 662.3,826.8 671.9,827 681.5,827.2 691.1,827.4 700.7,827.7 710.3,827.9 719.9,828.1 729.5,828.3 739.1,828.6 748.7,828.8 758.3,829 767.9,829.2 777.5,829.4 787.1,829.7 796.7,829.9 806.3,830.1 816,830.3 825.6,830.6 835.2,830.8 844.8,831 854.4,831.2 864.1,831.5 873.7,831.7 883.3,831.9 892.9,832.1 902.6,832.4 912.2,832.6 921.9,832.8 931.5,833 941.1,833.3 950.8,833.5 960.4,833.7 970.1,833.9 979.7,834.2 989.4,834.4 999,834.6 1008.7,834.8 1018.3,835.1 1028,835.3 1037.7,835.5 1047.3,835.7 1057,836 1066.7,836.2 1076.3,836.4 1086,836.6 1095.7,836.9 1105.3,837.1 1115,837.3 1124.7,837.5 1134.4,837.8 1144.1,838 1153.8,838.2 1163.4,838.4 1173.1,838.7 1182.8,838.9 1192.5,839.1 1202.2,839.4 1211.9,839.6 1221.6,839.8 1231.3,840 1241,840.3 1250.7,840.5 1260.4,840.7 1270.1,840.9 1279.8,841.2 1289.6,841.4 1299.3,841.6 1309,841.8 1318.7,842.1 1328.4,842.3 1338.2,842.5 1347.9,842.7 1357.6,843 1367.3,843.2 1377.1,843.4 1386.8,843.7 1396.5,843.9 1409.6,884 1399.7,883.7 1389.7,883.5 1379.8,883.3 1369.9,883 1360,882.8 1350.1,882.6 1340.2,882.3 1330.2,882.1 1320.3,881.9 1310.4,881.6 1300.5,881.4 1290.6,881.2 1280.7,880.9 1270.8,880.7 1260.9,880.5 1251,880.2 1241.1,880 1231.2,879.7 1221.3,879.5 1211.4,879.3 1201.6,879 1191.7,878.8 1181.8,878.6 1171.9,878.3 1162,878.1 1152.2,877.9 1142.3,877.6 1132.4,877.4 1122.6,877.2 1112.7,876.9 1102.8,876.7 1093,876.5 1083.1,876.2 1073.2,876 1063.4,875.8 1053.5,875.5 1043.7,875.3 1033.8,875.1 1024,874.8 1014.1,874.6 1004.3,874.4 994.4,874.1 984.6,873.9 974.8,873.7 964.9,873.4 955.1,873.2 945.3,873 935.4,872.7 925.6,872.5 915.8,872.3 906,872 896.1,871.8 886.3,871.6 876.5,871.3 866.7,871.1 856.9,870.9 847.1,870.6 837.2,870.4 827.4,870.2 817.6,869.9 807.8,869.7 798,869.5 788.2,869.2 778.4,869 768.6,868.8 758.8,868.5 749.1,868.3 739.3,868.1 729.5,867.8 719.7,867.6 709.9,867.4 700.1,867.1 690.4,866.9 680.6,866.7 670.8,866.4 661,866.2 651.3,866 641.5,865.7 631.7,865.5 622,865.3 612.2,865.1 602.4,864.8 592.7,864.6 582.9,864.4 573.2,864.1 563.4,863.9 553.7,863.7 543.9,863.4 534.2,863.2 524.4,863 514.7,862.7 504.9,862.5 495.2,862.3 485.5,862 475.7,861.8 466,861.6 456.3,861.4 446.5,861.1 436.8,860.9 427.1,860.7 417.4,860.4 407.7,860.2 397.9,860 388.2,859.7 378.5,859.5 368.8,859.3 359.1,859 349.4,858.8 339.7,858.6 330,858.4 320.3,858.1 310.6,857.9 300.9,857.7 291.2,857.4 281.5,857.2 271.8,857 262.1,856.7 252.4,856.5 242.7,856.3 233,856.1 223.4,855.8 213.7,855.6 204,855.4 194.3,855.1 184.7,854.9 175,854.7 165.3,854.4 155.7,854.2"/><polygon points="166.2,813.5 175.7,813.7 185.2,813.9 194.7,814.2 204.2,814.4 213.7,814.6 223.2,814.8 232.7,815 242.2,815.3 251.7,815.5 261.2,815.7 270.7,815.9 280.2,816.1 289.7,816.4 299.3,816.6 308.8,816.8 318.3,817 327.8,817.3 337.4,817.5 346.9,817.7 356.4,817.9 365.9,818.1 375.5,818.4 385,818.6 394.6,818.8 404.1,819 413.6,819.3 423.2,819.5 432.7,819.7 442.3,819.9 451.8,820.1 461.4,820.4 470.9,820.6 480.5,820.8 490,821 499.6,821.3 509.2,821.5 518.7,821.7 528.3,821.9 537.9,822.2 547.4,822.4 557,822.6 566.6,822.8 576.1,823 585.7,823.3 595.3,823.5 604.9,823.7 614.5,823.9 624,824.2 633.6,824.4 643.2,824.6 652.8,824.8 662.4,825.1 672,825.3 681.6,825.5 691.2,825.7 700.8,825.9 710.4,826.2 720,826.4 729.6,826.6 739.2,826.8 748.8,827.1 758.4,827.3 768.1,827.5 777.7,827.7 787.3,828 796.9,828.2 806.5,828.4 816.2,828.6 825.8,828.9 835.4,829.1 845,829.3 854.7,829.5 864.3,829.8 873.9,830 883.6,830.2 893.2,830.4 902.9,830.7 912.5,830.9 922.2,831.1 931.8,831.3 941.5,831.6 951.1,831.8 960.8,832 970.4,832.2 980.1,832.5 989.7,832.7 999.4,832.9 1009.1,833.1 1018.7,833.4 1028.4,833.6 1038.1,833.8 1047.7,834 1057.4,834.3 1067.1,834.5 1076.8,834.7 1086.4,834.9 1096.1,835.2 1105.8,835.4 1115.5,835.6 1125.2,835.8 1134.9,836.1 1144.6,836.3 1154.3,836.5 1164,836.7 1173.7,837 1183.4,837.2 1193.1,837.4 1202.8,837.6 1212.5,837.9 1222.2,838.1 1231.9,838.3 1241.6,838.5 1251.3,838.8 1261,839 1270.7,839.2 1280.5,839.5 1290.2,839.7 1299.9,839.9 1309.6,840.1 1319.4,840.4 1329.1,840.6 1338.8,840.8 1348.6,841 1358.3,841.3 1368,841.5 1377.8,841.7 1387.5,841.9 1397.3,842.2 1410.3,882.3 1400.4,882 1390.5,881.8 1380.5,881.6 1370.6,881.3 1360.7,881.1 1350.8,880.9 1340.8,880.6 1330.9,880.4 1321,880.2 1311.1,879.9 1301.2,879.7 1291.2,879.5 1281.3,879.2 1271.4,879 1261.5,878.7 1251.6,878.5 1241.7,878.3 1231.8,878 1221.9,877.8 1212,877.6 1202.1,877.3 1192.2,877.1 1182.3,876.9 1172.5,876.6 1162.6,876.4 1152.7,876.2 1142.8,875.9 1132.9,875.7 1123,875.5 1113.2,875.2 1103.3,875 1093.4,874.8 1083.5,874.5 1073.7,874.3 1063.8,874.1 1054,873.8 1044.1,873.6 1034.2,873.4 1024.4,873.1 1014.5,872.9 1004.7,872.7 994.8,872.4 985,872.2 975.1,872 965.3,871.7 955.4,871.5 945.6,871.3 935.8,871 925.9,870.8 916.1,870.6 906.2,870.3 896.4,870.1 886.6,869.9 876.8,869.6 866.9,869.4 857.1,869.2 847.3,868.9 837.5,868.7 827.7,868.5 817.8,868.2 808,868 798.2,867.8 788.4,867.5 778.6,867.3 768.8,867.1 759,866.8 749.2,866.6 739.4,866.4 729.6,866.1 719.8,865.9 710,865.7 700.2,865.4 690.5,865.2 680.7,865 670.9,864.7 661.1,864.5 651.3,864.3 641.5,864 631.8,863.8 622,863.6 612.2,863.3 602.5,863.1 592.7,862.9 582.9,862.7 573.2,862.4 563.4,862.2 553.6,862 543.9,861.7 534.1,861.5 524.4,861.3 514.6,861 504.9,860.8 495.1,860.6 485.4,860.3 475.6,860.1 465.9,859.9 456.2,859.6 446.4,859.4 436.7,859.2 427,859 417.2,858.7 407.5,858.5 397.8,858.3 388.1,858 378.3,857.8 368.6,857.6 358.9,857.3 349.2,857.1 339.5,856.9 329.8,856.6 320,856.4 310.3,856.2 300.6,856 290.9,855.7 281.2,855.5 271.5,855.3 261.8,855 252.1,854.8 242.4,854.6 232.7,854.3 223.1,854.1 213.4,853.9 203.7,853.7 194,853.4 184.3,853.2 174.6,853 165,852.7 155.3,852.5"/><polygon points="165.8,811.8 175.3,812 184.8,812.2 194.3,812.4 203.8,812.7 213.3,812.9 222.9,813.1 232.4,813.3 241.9,813.5 251.4,813.8 260.9,814 270.4,814.2 280,814.4 289.5,814.7 299,814.9 308.5,815.1 318.1,815.3 327.6,815.5 337.1,815.8 346.7,816 356.2,816.2 365.8,816.4 375.3,816.7 384.8,816.9 394.4,817.1 403.9,817.3 413.5,817.5 423,817.8 432.6,818 442.2,818.2 451.7,818.4 461.3,818.7 470.8,818.9 480.4,819.1 490,819.3 499.5,819.5 509.1,819.8 518.7,820 528.2,820.2 537.8,820.4 547.4,820.7 557,820.9 566.6,821.1 576.1,821.3 585.7,821.6 595.3,821.8 604.9,822 614.5,822.2 624.1,822.4 633.7,822.7 643.3,822.9 652.9,823.1 662.5,823.3 672.1,823.6 681.7,823.8 691.3,824 700.9,824.2 710.5,824.5 720.1,824.7 729.7,824.9 739.4,825.1 749,825.4 758.6,825.6 768.2,825.8 777.9,826 787.5,826.3 797.1,826.5 806.7,826.7 816.4,826.9 826,827.1 835.6,827.4 845.3,827.6 854.9,827.8 864.6,828 874.2,828.3 883.9,828.5 893.5,828.7 903.2,828.9 912.8,829.2 922.5,829.4 932.1,829.6 941.8,829.8 951.4,830.1 961.1,830.3 970.8,830.5 980.4,830.7 990.1,831 999.8,831.2 1009.4,831.4 1019.1,831.6 1028.8,831.9 1038.5,832.1 1048.2,832.3 1057.8,832.5 1067.5,832.8 1077.2,833 1086.9,833.2 1096.6,833.4 1106.3,833.7 1116,833.9 1125.7,834.1 1135.4,834.3 1145.1,834.6 1154.8,834.8 1164.5,835 1174.2,835.3 1183.9,835.5 1193.6,835.7 1203.3,835.9 1213,836.2 1222.7,836.4 1232.5,836.6 1242.2,836.8 1251.9,837.1 1261.6,837.3 1271.4,837.5 1281.1,837.7 1290.8,838 1300.5,838.2 1310.3,838.4 1320,838.6 1329.8,838.9 1339.5,839.1 1349.2,839.3 1359,839.6 1368.7,839.8 1378.5,840 1388.2,840.2 1398,840.5 1411.1,880.6 1401.1,880.3 1391.2,880.1 1381.3,879.9 1371.3,879.6 1361.4,879.4 1351.5,879.2 1341.5,878.9 1331.6,878.7 1321.7,878.4 1311.7,878.2 1301.8,878 1291.9,877.7 1282,877.5 1272.1,877.3 1262.1,877 1252.2,876.8 1242.3,876.6 1232.4,876.3 1222.5,876.1 1212.6,875.9 1202.7,875.6 1192.8,875.4 1182.9,875.2 1173,874.9 1163.1,874.7 1153.2,874.5 1143.3,874.2 1133.4,874 1123.5,873.8 1113.6,873.5 1103.8,873.3 1093.9,873.1 1084,872.8 1074.1,872.6 1064.3,872.3 1054.4,872.1 1044.5,871.9 1034.6,871.6 1024.8,871.4 1014.9,871.2 1005,870.9 995.2,870.7 985.3,870.5 975.5,870.2 965.6,870 955.8,869.8 945.9,869.5 936.1,869.3 926.2,869.1 916.4,868.8 906.5,868.6 896.7,868.4 886.9,868.1 877,867.9 867.2,867.7 857.4,867.4 847.5,867.2 837.7,867 827.9,866.7 818.1,866.5 808.2,866.3 798.4,866 788.6,865.8 778.8,865.6 769,865.4 759.2,865.1 749.4,864.9 739.6,864.7 729.8,864.4 720,864.2 710.2,864 700.4,863.7 690.6,863.5 680.8,863.3 671,863 661.2,862.8 651.4,862.6 641.6,862.3 631.8,862.1 622,861.9 612.3,861.6 602.5,861.4 592.7,861.2 582.9,860.9 573.2,860.7 563.4,860.5 553.6,860.2 543.9,860 534.1,859.8 524.3,859.6 514.6,859.3 504.8,859.1 495.1,858.9 485.3,858.6 475.6,858.4 465.8,858.2 456.1,857.9 446.3,857.7 436.6,857.5 426.8,857.2 417.1,857 407.4,856.8 397.6,856.5 387.9,856.3 378.2,856.1 368.4,855.9 358.7,855.6 349,855.4 339.3,855.2 329.5,854.9 319.8,854.7 310.1,854.5 300.4,854.2 290.7,854 281,853.8 271.3,853.6 261.5,853.3 251.8,853.1 242.1,852.9 232.4,852.6 222.7,852.4 213,852.2 203.4,851.9 193.7,851.7 184,851.5 174.3,851.3 164.6,851 154.9,850.8"/><polygon points="165.5,810.1 175,810.3 184.5,810.5 194,810.7 203.5,810.9 213,811.2 222.6,811.4 232.1,811.6 241.6,811.8 251.1,812.1 260.7,812.3 270.2,812.5 279.7,812.7 289.2,812.9 298.8,813.2 308.3,813.4 317.9,813.6 327.4,813.8 336.9,814.1 346.5,814.3 356,814.5 365.6,814.7 375.1,814.9 384.7,815.2 394.2,815.4 403.8,815.6 413.4,815.8 422.9,816.1 432.5,816.3 442,816.5 451.6,816.7 461.2,816.9 470.7,817.2 480.3,817.4 489.9,817.6 499.5,817.8 509,818.1 518.6,818.3 528.2,818.5 537.8,818.7 547.4,818.9 557,819.2 566.6,819.4 576.1,819.6 585.7,819.8 595.3,820.1 604.9,820.3 614.5,820.5 624.1,820.7 633.7,821 643.3,821.2 653,821.4 662.6,821.6 672.2,821.8 681.8,822.1 691.4,822.3 701,822.5 710.6,822.7 720.3,823 729.9,823.2 739.5,823.4 749.1,823.6 758.8,823.9 768.4,824.1 778,824.3 787.7,824.5 797.3,824.8 806.9,825 816.6,825.2 826.2,825.4 835.9,825.7 845.5,825.9 855.2,826.1 864.8,826.3 874.5,826.6 884.1,826.8 893.8,827 903.4,827.2 913.1,827.5 922.8,827.7 932.4,827.9 942.1,828.1 951.8,828.4 961.4,828.6 971.1,828.8 980.8,829 990.5,829.3 1000.1,829.5 1009.8,829.7 1019.5,829.9 1029.2,830.2 1038.9,830.4 1048.6,830.6 1058.3,830.8 1068,831.1 1077.6,831.3 1087.3,831.5 1097,831.7 1106.7,832 1116.4,832.2 1126.1,832.4 1135.9,832.6 1145.6,832.9 1155.3,833.1 1165,833.3 1174.7,833.5 1184.4,833.8 1194.1,834 1203.9,834.2 1213.6,834.4 1223.3,834.7 1233,834.9 1242.8,835.1 1252.5,835.3 1262.2,835.6 1272,835.8 1281.7,836 1291.4,836.3 1301.2,836.5 1310.9,836.7 1320.7,836.9 1330.4,837.2 1340.2,837.4 1349.9,837.6 1359.7,837.8 1369.4,838.1 1379.2,838.3 1388.9,838.5 1398.7,838.7 1411.8,878.9 1401.9,878.6 1391.9,878.4 1382,878.2 1372,877.9 1362.1,877.7 1352.1,877.4 1342.2,877.2 1332.3,877 1322.3,876.7 1312.4,876.5 1302.5,876.3 1292.5,876 1282.6,875.8 1272.7,875.6 1262.8,875.3 1252.8,875.1 1242.9,874.9 1233,874.6 1223.1,874.4 1213.2,874.2 1203.2,873.9 1193.3,873.7 1183.4,873.4 1173.5,873.2 1163.6,873 1153.7,872.7 1143.8,872.5 1133.9,872.3 1124,872 1114.1,871.8 1104.2,871.6 1094.3,871.3 1084.5,871.1 1074.6,870.9 1064.7,870.6 1054.8,870.4 1044.9,870.2 1035.1,869.9 1025.2,869.7 1015.3,869.5 1005.4,869.2 995.6,869 985.7,868.8 975.8,868.5 966,868.3 956.1,868.1 946.3,867.8 936.4,867.6 926.5,867.4 916.7,867.1 906.8,866.9 897,866.7 887.1,866.4 877.3,866.2 867.5,866 857.6,865.7 847.8,865.5 837.9,865.3 828.1,865 818.3,864.8 808.5,864.6 798.6,864.3 788.8,864.1 779,863.9 769.2,863.6 759.3,863.4 749.5,863.2 739.7,862.9 729.9,862.7 720.1,862.5 710.3,862.2 700.5,862 690.7,861.8 680.9,861.5 671.1,861.3 661.3,861.1 651.5,860.8 641.7,860.6 631.9,860.4 622.1,860.2 612.3,859.9 602.5,859.7 592.7,859.5 582.9,859.2 573.2,859 563.4,858.8 553.6,858.5 543.8,858.3 534.1,858.1 524.3,857.8 514.5,857.6 504.8,857.4 495,857.1 485.2,856.9 475.5,856.7 465.7,856.5 456,856.2 446.2,856 436.5,855.8 426.7,855.5 417,855.3 407.2,855.1 397.5,854.8 387.7,854.6 378,854.4 368.2,854.1 358.5,853.9 348.8,853.7 339,853.5 329.3,853.2 319.6,853 309.9,852.8 300.1,852.5 290.4,852.3 280.7,852.1 271,851.8 261.3,851.6 251.6,851.4 241.8,851.1 232.1,850.9 222.4,850.7 212.7,850.5 203,850.2 193.3,850 183.6,849.8 173.9,849.5 164.2,849.3 154.5,849.1"/></g><polygon points="165.1,808.3 174.6,808.6 184.1,808.8 193.7,809 203.2,809.2 212.7,809.4 222.2,809.7 231.8,809.9 241.3,810.1 250.8,810.3 260.4,810.6 269.9,810.8 279.5,811 289,811.2 298.5,811.4 308.1,811.7 317.6,811.9 327.2,812.1 336.7,812.3 346.3,812.6 355.8,812.8 365.4,813 375,813.2 384.5,813.4 394.1,813.7 403.6,813.9 413.2,814.1 422.8,814.3 432.3,814.6 441.9,814.8 451.5,815 461.1,815.2 470.7,815.4 480.2,815.7 489.8,815.9 499.4,816.1 509,816.3 518.6,816.6 528.2,816.8 537.8,817 547.4,817.2 556.9,817.5 566.5,817.7 576.1,817.9 585.7,818.1 595.4,818.3 605,818.6 614.6,818.8 624.2,819 633.8,819.2 643.4,819.5 653,819.7 662.6,819.9 672.3,820.1 681.9,820.4 691.5,820.6 701.1,820.8 710.8,821 720.4,821.2 730,821.5 739.7,821.7 749.3,821.9 758.9,822.1 768.6,822.4 778.2,822.6 787.9,822.8 797.5,823 807.1,823.3 816.8,823.5 826.4,823.7 836.1,823.9 845.8,824.2 855.4,824.4 865.1,824.6 874.7,824.8 884.4,825.1 894.1,825.3 903.7,825.5 913.4,825.7 923.1,826 932.7,826.2 942.4,826.4 952.1,826.6 961.8,826.9 971.5,827.1 981.1,827.3 990.8,827.5 1000.5,827.8 1010.2,828 1019.9,828.2 1029.6,828.4 1039.3,828.7 1049,828.9 1058.7,829.1 1068.4,829.3 1078.1,829.6 1087.8,829.8 1097.5,830 1107.2,830.2 1116.9,830.5 1126.6,830.7 1136.3,830.9 1146.1,831.1 1155.8,831.4 1165.5,831.6 1175.2,831.8 1185,832 1194.7,832.3 1204.4,832.5 1214.1,832.7 1223.9,833 1233.6,833.2 1243.4,833.4 1253.1,833.6 1262.8,833.9 1272.6,834.1 1282.3,834.3 1292.1,834.5 1301.8,834.8 1311.6,835 1321.3,835.2 1331.1,835.4 1340.8,835.7 1350.6,835.9 1360.4,836.1 1370.1,836.4 1379.9,836.6 1389.7,836.8 1399.4,837 1412.6,877.1 1402.6,876.9 1392.7,876.7 1382.7,876.4 1372.8,876.2 1362.8,876 1352.8,875.7 1342.9,875.5 1332.9,875.3 1323,875 1313.1,874.8 1303.1,874.6 1293.2,874.3 1283.2,874.1 1273.3,873.8 1263.4,873.6 1253.4,873.4 1243.5,873.1 1233.6,872.9 1223.7,872.7 1213.7,872.4 1203.8,872.2 1193.9,872 1184,871.7 1174.1,871.5 1164.1,871.3 1154.2,871 1144.3,870.8 1134.4,870.6 1124.5,870.3 1114.6,870.1 1104.7,869.9 1094.8,869.6 1084.9,869.4 1075,869.2 1065.1,868.9 1055.2,868.7 1045.3,868.5 1035.5,868.2 1025.6,868 1015.7,867.8 1005.8,867.5 995.9,867.3 986.1,867 976.2,866.8 966.3,866.6 956.5,866.3 946.6,866.1 936.7,865.9 926.9,865.6 917,865.4 907.1,865.2 897.3,864.9 887.4,864.7 877.6,864.5 867.7,864.2 857.9,864 848,863.8 838.2,863.5 828.3,863.3 818.5,863.1 808.7,862.9 798.8,862.6 789,862.4 779.2,862.2 769.3,861.9 759.5,861.7 749.7,861.5 739.8,861.2 730,861 720.2,860.8 710.4,860.5 700.6,860.3 690.8,860.1 681,859.8 671.1,859.6 661.3,859.4 651.5,859.1 641.7,858.9 631.9,858.7 622.1,858.4 612.3,858.2 602.5,858 592.7,857.7 582.9,857.5 573.2,857.3 563.4,857 553.6,856.8 543.8,856.6 534,856.4 524.2,856.1 514.5,855.9 504.7,855.7 494.9,855.4 485.2,855.2 475.4,855 465.6,854.7 455.9,854.5 446.1,854.3 436.3,854 426.6,853.8 416.8,853.6 407.1,853.3 397.3,853.1 387.6,852.9 377.8,852.7 368.1,852.4 358.3,852.2 348.6,852 338.8,851.7 329.1,851.5 319.4,851.3 309.6,851 299.9,850.8 290.2,850.6 280.4,850.4 270.7,850.1 261,849.9 251.3,849.7 241.6,849.4 231.8,849.2 222.1,849 212.4,848.7 202.7,848.5 193,848.3 183.3,848.1 173.6,847.8 163.9,847.6 154.2,847.4" fill="#858585"/><polygon points="218.5,811.7 223.4,811.8 228.2,812 233.1,812.1 238,812.2 242.8,812.3 247.7,812.4 252.6,812.5 257.5,812.6 262.3,812.7 267.2,812.9 272.1,813 276.9,813.1 281.8,813.2 286.7,813.3 291.6,813.4 296.4,813.5 301.3,813.7 306.2,813.8 311.1,813.9 315.9,814 320.8,814.1 325.7,814.2 330.6,814.3 335.4,814.4 340.3,814.6 345.2,814.7 350.1,814.8 355,814.9 359.8,815 364.7,815.1 358.4,850 353.5,849.9 348.5,849.7 343.5,849.6 338.6,849.5 333.6,849.4 328.6,849.3 323.7,849.1 318.7,849 313.8,848.9 308.8,848.8 303.8,848.7 298.9,848.6 293.9,848.4 289,848.3 284,848.2 279,848.1 274.1,848 269.1,847.9 264.2,847.7 259.2,847.6 254.3,847.5 249.3,847.4 244.4,847.3 239.4,847.2 234.5,847 229.5,846.9 224.6,846.8 219.6,846.7 214.7,846.6 209.7,846.5" fill="#222"/><polygon points="861,826.7 865.9,826.8 870.8,826.9 875.8,827 880.7,827.1 885.6,827.2 890.5,827.4 895.4,827.5 900.3,827.6 905.2,827.7 910.2,827.8 915.1,827.9 920,828 924.9,828.2 929.8,828.3 934.7,828.4 939.7,828.5 944.6,828.6 949.5,828.7 954.4,828.9 959.3,829 964.3,829.1 969.2,829.2 974.1,829.3 979,829.4 984,829.5 988.9,829.7 993.8,829.8 998.7,829.9 1003.7,830 1008.4,865.3 1003.4,865.2 998.4,865.1 993.4,865 988.4,864.9 983.4,864.7 978.4,864.6 973.4,864.5 968.3,864.4 963.3,864.3 958.3,864.2 953.3,864 948.3,863.9 943.3,863.8 938.3,863.7 933.3,863.6 928.3,863.4 923.3,863.3 918.3,863.2 913.3,863.1 908.3,863 903.3,862.9 898.3,862.7 893.3,862.6 888.3,862.5 883.3,862.4 878.3,862.3 873.3,862.1 868.3,862 863.3,861.9" fill="#222"/><polygon points="1003.7,830 1008.5,830.1 1013.3,830.2 1018.2,830.3 1023,830.4 1027.9,830.6 1032.7,830.7 1037.6,830.8 1042.4,830.9 1047.2,831 1052.1,831.1 1056.9,831.2 1061.8,831.3 1066.6,831.5 1071.5,831.6 1076.3,831.7 1081.2,831.8 1086,831.9 1090.9,832 1095.7,832.1 1100.6,832.3 1105.4,832.4 1110.3,832.5 1115.1,832.6 1120,832.7 1124.8,832.8 1129.7,832.9 1134.5,833 1139.4,833.2 1146.5,868.6 1141.6,868.5 1136.6,868.4 1131.7,868.2 1126.8,868.1 1121.8,868 1116.9,867.9 1112,867.8 1107,867.7 1102.1,867.5 1097.1,867.4 1092.2,867.3 1087.3,867.2 1082.4,867.1 1077.4,867 1072.5,866.9 1067.6,866.7 1062.6,866.6 1057.7,866.5 1052.8,866.4 1047.8,866.3 1042.9,866.2 1038,866 1033.1,865.9 1028.1,865.8 1023.2,865.7 1018.3,865.6 1013.3,865.5 1008.4,865.3" fill="#222"/><polygon points="1139.4,833.2 1144.2,833.3 1149.1,833.4 1154,833.5 1158.8,833.6 1163.7,833.7 1168.6,833.8 1173.4,833.9 1178.3,834.1 1183.2,834.2 1188,834.3 1192.9,834.4 1197.8,834.5 1202.6,834.6 1207.5,834.7 1212.4,834.9 1217.3,835 1222.1,835.1 1227,835.2 1231.9,835.3 1236.7,835.4 1241.6,835.5 1246.5,835.6 1251.4,835.8 1256.2,835.9 1261.1,836 1266,836.1 1270.9,836.2 1275.7,836.3 1280.6,836.4 1285.5,836.6 1290.4,836.7 1295.2,836.8 1300.1,836.9 1310.1,872.5 1305.1,872.3 1300.1,872.2 1295.2,872.1 1290.2,872 1285.3,871.9 1280.3,871.8 1275.3,871.6 1270.4,871.5 1265.4,871.4 1260.5,871.3 1255.5,871.2 1250.5,871.1 1245.6,870.9 1240.6,870.8 1235.7,870.7 1230.7,870.6 1225.7,870.5 1220.8,870.4 1215.8,870.2 1210.9,870.1 1205.9,870 1201,869.9 1196,869.8 1191.1,869.7 1186.1,869.5 1181.2,869.4 1176.2,869.3 1171.3,869.2 1166.3,869.1 1161.4,869 1156.4,868.8 1151.5,868.7 1146.5,868.6" fill="#222"/><polygon points="223.1,824.1 227.8,824.2 232.6,824.3 237.4,824.4 242.1,824.5 246.9,824.6 251.7,824.7 256.4,824.9 261.2,825 266,825.1 270.8,825.2 275.5,825.3 280.3,825.4 285.1,825.5 289.9,825.6 294.6,825.7 299.4,825.9 304.2,826 309,826.1 313.7,826.2 311.7,836.3 306.9,836.2 302.1,836.1 297.3,836 292.5,835.9 287.7,835.8 282.9,835.7 278.1,835.6 273.3,835.4 268.5,835.3 263.7,835.2 258.9,835.1 254.1,835 249.3,834.9 244.5,834.8 239.7,834.6 234.9,834.5 230.1,834.4 225.3,834.3 220.5,834.2" fill="#5c5c5c"/><polygon points="866.5,839.1 871.3,839.2 876.1,839.4 881,839.5 885.8,839.6 890.6,839.7 895.5,839.8 900.3,839.9 905.2,840 910,840.1 914.8,840.3 919.7,840.4 924.5,840.5 929.4,840.6 934.2,840.7 939,840.8 943.9,840.9 948.7,841 953.6,841.2 958.4,841.3 963.3,841.4 964.4,851.7 959.6,851.6 954.7,851.5 949.8,851.3 945,851.2 940.1,851.1 935.2,851 930.4,850.9 925.5,850.8 920.6,850.7 915.8,850.5 910.9,850.4 906,850.3 901.2,850.2 896.3,850.1 891.5,850 886.6,849.9 881.7,849.7 876.9,849.6 872,849.5 867.2,849.4" fill="#5c5c5c"/><polygon points="1019.5,842.7 1024.3,842.8 1029.2,842.9 1034,843 1038.9,843.2 1043.7,843.3 1048.6,843.4 1053.5,843.5 1058.3,843.6 1063.2,843.7 1068,843.8 1072.9,844 1077.7,844.1 1082.6,844.2 1087.4,844.3 1092.3,844.4 1097.2,844.5 1102,844.6 1106.9,844.7 1111.7,844.9 1116.6,845 1121.5,845.1 1123.4,855.4 1118.6,855.3 1113.7,855.2 1108.8,855.1 1103.9,855 1099,854.8 1094.1,854.7 1089.2,854.6 1084.4,854.5 1079.5,854.4 1074.6,854.3 1069.7,854.2 1064.8,854 1060,853.9 1055.1,853.8 1050.2,853.7 1045.3,853.6 1040.5,853.5 1035.6,853.4 1030.7,853.2 1025.8,853.1 1020.9,853" fill="#5c5c5c"/><polygon points="1156.5,845.9 1161.4,846 1166.3,846.1 1171.2,846.3 1176.1,846.4 1181,846.5 1185.9,846.6 1190.9,846.7 1195.8,846.8 1200.7,846.9 1205.6,847.1 1210.5,847.2 1215.4,847.3 1220.4,847.4 1225.3,847.5 1230.2,847.6 1235.1,847.7 1240,847.9 1245,848 1249.9,848.1 1254.8,848.2 1259.7,848.3 1262.4,858.7 1257.4,858.6 1252.5,858.5 1247.6,858.3 1242.6,858.2 1237.7,858.1 1232.7,858 1227.8,857.9 1222.8,857.8 1217.9,857.6 1213,857.5 1208,857.4 1203.1,857.3 1198.1,857.2 1193.2,857.1 1188.3,856.9 1183.3,856.8 1178.4,856.7 1173.4,856.6 1168.5,856.5 1163.6,856.4 1158.6,856.3" fill="#5c5c5c"/><polygon points="417,816.3 421.9,816.5 426.7,816.6 431.5,816.7 436.3,816.8 441.2,816.9 446,817 450.8,817.1 455.7,817.2 460.5,817.4 465.3,817.5 470.1,817.6 475,817.7 479.8,817.8 484.6,817.9 489.5,818 494.3,818.1 499.1,818.3 504,818.4 508.8,818.5 513.6,818.6 518.5,818.7 523.3,818.8 528.1,818.9 533,819 537.8,819.2 542.7,819.3 547.5,819.4 552.3,819.5 557.2,819.6 562,819.7 566.9,819.8 571.7,819.9 569,854.9 564,854.8 559.1,854.7 554.2,854.6 549.3,854.5 544.4,854.4 539.4,854.2 534.5,854.1 529.6,854 524.7,853.9 519.7,853.8 514.8,853.7 509.9,853.6 505,853.4 500.1,853.3 495.2,853.2 490.2,853.1 485.3,853 480.4,852.9 475.5,852.7 470.6,852.6 465.7,852.5 460.8,852.4 455.8,852.3 450.9,852.2 446,852 441.1,851.9 436.2,851.8 431.3,851.7 426.4,851.6 421.5,851.5 416.6,851.3 411.6,851.2" fill="#d8d8d8"/><path d="M417 816.3L411.6 851.2M422.9 816.5L417.6 851.4M428.8 816.6L423.7 851.5M434.7 816.8L429.7 851.7M440.7 816.9L435.7 851.8M446.6 817L441.7 851.9M452.5 817.2L447.7 852.1M458.4 817.3L453.7 852.2M464.3 817.4L459.7 852.4M470.2 817.6L465.7 852.5M476.1 817.7L471.7 852.6M482 817.9L477.7 852.8M487.9 818L483.7 852.9M493.8 818.1L489.8 853.1M499.7 818.3L495.8 853.2M505.7 818.4L501.8 853.4M511.6 818.5L507.8 853.5M517.5 818.7L513.8 853.6M523.4 818.8L519.8 853.8M529.3 819L525.9 853.9M535.2 819.1L531.9 854.1M541.1 819.2L537.9 854.2M547.1 819.4L543.9 854.4M553 819.5L549.9 854.5M558.9 819.6L556 854.6M564.8 819.8L562 854.8M570.7 819.9L568 854.9" stroke="#5a5a5a" stroke-width="2.6"/><polygon points="686.8,822.6 691.7,822.7 696.5,822.8 701.4,823 706.2,823.1 711.1,823.2 715.9,823.3 720.8,823.4 725.7,823.5 730.5,823.6 735.4,823.8 740.2,823.9 745.1,824 745.3,859.1 740.4,859 735.5,858.9 730.5,858.8 725.6,858.6 720.6,858.5 715.7,858.4 710.8,858.3 705.8,858.2 700.9,858.1 696,857.9 691,857.8 686.1,857.7" fill="#d8d8d8"/><path d="M686.8 822.6L686.1 857.7M692.8 822.8L692.1 857.9M698.7 822.9L698.2 858M704.6 823L704.2 858.1M710.6 823.2L710.3 858.3M716.5 823.3L716.3 858.4M722.5 823.5L722.3 858.6M728.4 823.6L728.4 858.7M734.3 823.7L734.4 858.9M740.3 823.9L740.5 859" stroke="#5a5a5a" stroke-width="2.6"/><path d="M207.3 810.8L197.9 846.9M364.8 814.4L358.3 850.7M417.1 815.6L411.5 852M571.6 819.2L568.7 855.7M615.5 820.2L613.4 856.7M673.8 821.6L672.8 858.1M731.3 822.9L731.3 859.5M788.8 824.3L789.9 860.9M846.4 825.6L848.5 862.3M1002.2 829.2L1007.2 866.1M1138.3 832.4L1145.7 869.3M1283.4 835.8L1293.5 872.8M1341.6 837.1L1352.8 874.2" stroke="#f0a400" stroke-width="1.6"/><g fill="#5fa064" fill-opacity="0.85"><polygon points="193.1,828.4 166.7,819.9 162.2,835.8"/><polygon points="250.5,829.8 223.8,821.2 219.8,837.1"/><polygon points="403.8,833.4 376.4,824.8 373.6,840.7"/><polygon points="456.6,834.6 429,826 426.6,842"/><polygon points="519.1,836.1 491.2,827.4 489.3,843.5"/><polygon points="615.4,838.4 587.1,829.7 586,845.7"/><polygon points="673.3,839.7 644.7,831 644,847.1"/><polygon points="731.3,841.1 702.4,832.4 702.2,848.5"/><polygon points="789.3,842.4 760.2,833.7 760.4,849.8"/><polygon points="837.7,843.6 808.4,834.9 809,851"/><polygon points="895.9,844.9 866.3,836.2 867.4,852.4"/><polygon points="1051.3,848.6 1021,839.8 1023.3,856"/><polygon points="1187.8,851.8 1156.8,843 1160.2,859.2"/><polygon points="1334.4,855.2 1302.8,846.4 1307.3,862.7"/><polygon points="1388.3,856.5 1356.4,847.7 1361.4,864"/></g><path d="M165.1 808.3L174.6 808.6L184.1 808.8L193.7 809L203.2 809.2L212.7 809.4L222.2 809.7L231.8 809.9L241.3 810.1L250.8 810.3L260.4 810.6L269.9 810.8L279.5 811L289 811.2L298.5 811.4L308.1 811.7L317.6 811.9L327.2 812.1L336.7 812.3L346.3 812.6L355.8 812.8L365.4 813L375 813.2L384.5 813.4L394.1 813.7L403.6 813.9L413.2 814.1L422.8 814.3L432.3 814.6L441.9 814.8L451.5 815L461.1 815.2L470.7 815.4L480.2 815.7L489.8 815.9L499.4 816.1L509 816.3L518.6 816.6L528.2 816.8L537.8 817L547.4 817.2L556.9 817.5L566.5 817.7L576.1 817.9L585.7 818.1L595.4 818.3L605 818.6L614.6 818.8L624.2 819L633.8 819.2L643.4 819.5L653 819.7L662.6 819.9L672.3 820.1L681.9 820.4L691.5 820.6L701.1 820.8L710.8 821L720.4 821.2L730 821.5L739.7 821.7L749.3 821.9L758.9 822.1L768.6 822.4L778.2 822.6L787.9 822.8L797.5 823L807.1 823.3L816.8 823.5L826.4 823.7L836.1 823.9L845.8 824.2L855.4 824.4L865.1 824.6L874.7 824.8L884.4 825.1L894.1 825.3L903.7 825.5L913.4 825.7L923.1 826L932.7 826.2L942.4 826.4L952.1 826.6L961.8 826.9L971.5 827.1L981.1 827.3L990.8 827.5L1000.5 827.8L1010.2 828L1019.9 828.2L1029.6 828.4L1039.3 828.7L1049 828.9L1058.7 829.1L1068.4 829.3L1078.1 829.6L1087.8 829.8L1097.5 830L1107.2 830.2L1116.9 830.5L1126.6 830.7L1136.3 830.9L1146.1 831.1L1155.8 831.4L1165.5 831.6L1175.2 831.8L1185 832L1194.7 832.3L1204.4 832.5L1214.1 832.7L1223.9 833L1233.6 833.2L1243.4 833.4L1253.1 833.6L1262.8 833.9L1272.6 834.1L1282.3 834.3L1292.1 834.5L1301.8 834.8L1311.6 835L1321.3 835.2L1331.1 835.4L1340.8 835.7L1350.6 835.9L1360.4 836.1L1370.1 836.4L1379.9 836.6L1389.7 836.8L1399.4 837M154.2 847.4L163.9 847.6L173.6 847.8L183.3 848.1L193 848.3L202.7 848.5L212.4 848.7L222.1 849L231.8 849.2L241.6 849.4L251.3 849.7L261 849.9L270.7 850.1L280.4 850.4L290.2 850.6L299.9 850.8L309.6 851L319.4 851.3L329.1 851.5L338.8 851.7L348.6 852L358.3 852.2L368.1 852.4L377.8 852.7L387.6 852.9L397.3 853.1L407.1 853.3L416.8 853.6L426.6 853.8L436.3 854L446.1 854.3L455.9 854.5L465.6 854.7L475.4 855L485.2 855.2L494.9 855.4L504.7 855.7L514.5 855.9L524.2 856.1L534 856.4L543.8 856.6L553.6 856.8L563.4 857L573.2 857.3L582.9 857.5L592.7 857.7L602.5 858L612.3 858.2L622.1 858.4L631.9 858.7L641.7 858.9L651.5 859.1L661.3 859.4L671.1 859.6L681 859.8L690.8 860.1L700.6 860.3L710.4 860.5L720.2 860.8L730 861L739.8 861.2L749.7 861.5L759.5 861.7L769.3 861.9L779.2 862.2L789 862.4L798.8 862.6L808.7 862.9L818.5 863.1L828.3 863.3L838.2 863.5L848 863.8L857.9 864L867.7 864.2L877.6 864.5L887.4 864.7L897.3 864.9L907.1 865.2L917 865.4L926.9 865.6L936.7 865.9L946.6 866.1L956.5 866.3L966.3 866.6L976.2 866.8L986.1 867L995.9 867.3L1005.8 867.5L1015.7 867.8L1025.6 868L1035.5 868.2L1045.3 868.5L1055.2 868.7L1065.1 868.9L1075 869.2L1084.9 869.4L1094.8 869.6L1104.7 869.9L1114.6 870.1L1124.5 870.3L1134.4 870.6L1144.3 870.8L1154.2 871L1164.1 871.3L1174.1 871.5L1184 871.7L1193.9 872L1203.8 872.2L1213.7 872.4L1223.7 872.7L1233.6 872.9L1243.5 873.1L1253.4 873.4L1263.4 873.6L1273.3 873.8L1283.2 874.1L1293.2 874.3L1303.1 874.6L1313.1 874.8L1323 875L1332.9 875.3L1342.9 875.5L1352.8 875.7L1362.8 876L1372.8 876.2L1382.7 876.4L1392.7 876.7L1402.6 876.9L1412.6 877.1" fill="none" stroke="#f00" stroke-width="3"/><path d="M207.5 810L207.5 809.9M365 813.7L365 813.6M417.3 814.9L417.3 814.8M571.6 818.5L571.6 818.4M615.5 819.5L615.5 819.4M673.9 820.9L673.9 820.8M731.3 822.2L731.3 822.1M788.8 823.6L788.8 823.5M846.3 824.9L846.3 824.8M1002.1 828.5L1002.1 828.4M1138.1 831.7L1138.1 831.6M1283.2 835.1L1283.2 835M1341.4 836.4L1341.4 836.3" stroke="#264444" stroke-width="7" stroke-linecap="square"/><path d="M207.5 807L205.9 801.4M365 810.7L364.1 805.1M417.3 811.9L416.6 806.3M571.6 815.5L571.6 809.9M615.5 816.5L615.7 810.9M673.9 817.9L674.3 812.2M731.3 819.2L732 813.6M788.8 820.6L789.7 814.9M846.3 821.9L847.5 816.3M1002.1 825.5L1004 819.9M1138.1 828.7L1140.6 823M1283.2 832.1L1286.4 826.4M1341.4 833.4L1344.8 827.8" stroke="#e80000" stroke-width="4.5" stroke-linecap="round"/><path d="M586.5 874.7L586.5 874.6M622.3 900.7L622.3 900.6M673.5 905.5L673.5 905.4M734.7 907L734.7 906.9M796.1 908.5L796.1 908.4M845.7 906.6L845.7 906.5M883.3 881.8L883.3 881.7" stroke="#264444" stroke-width="7" stroke-linecap="square"/><path d="M586.5 871.7L586.5 866.1M622.3 897.7L622.6 892M673.5 902.5L673.9 896.9M734.7 904L735.5 898.4M796.1 905.5L797.1 899.9M845.7 903.6L847 898M883.3 878.8L884.7 873.2" stroke="#e80000" stroke-width="4.5" stroke-linecap="round"/><path d="M737.9 992.5L737.9 992.4M804.1 994.2L804.1 994.1M870.4 995.8L870.4 995.7M916.7 989.1L916.7 989M957.8 955.7L957.8 955.6M999.3 920.7L999.3 920.6M1039.5 886.7L1039.5 886.6" stroke="#264444" stroke-width="7" stroke-linecap="square"/><path d="M737.9 989.5L738.7 984M804.1 991.2L805.2 985.6M870.4 992.8L871.8 987.3M916.7 986.1L918.3 980.6M957.8 952.7L959.6 947.1M999.3 917.7L1001.3 912.1M1039.5 883.7L1041.6 878.1" stroke="#e80000" stroke-width="4.5" stroke-linecap="round"/><path d="M510.1 872.1L510.1 872M548.8 905.6L548.8 905.5M588.8 940.2L588.8 940.1M630.2 976L630.2 975.9M673 1013L673 1012.9M714.8 1048.5L714.8 1048.4M758.3 1059.6L758.3 1059.5M822.6 1061.3L822.6 1061.2M886.9 1062.9L886.9 1062.8M951.3 1064.6L951.3 1064.5M992.6 1056.7L992.6 1056.6M1032.2 1022.1L1032.2 1022M1071.4 987L1071.4 986.9M1109.3 953L1109.3 952.9M1146 920.1L1146 920M1181.7 888.1L1181.7 888" stroke="#264444" stroke-width="7" stroke-linecap="square"/><path d="M510.1 869.1L509.8 863.5M548.8 902.6L548.7 897M588.8 937.2L588.9 931.6M630.2 973L630.5 967.4M673 1010L673.4 1004.4M714.8 1045.5L715.4 1040M758.3 1056.6L759.2 1051.1M822.6 1058.3L823.8 1052.8M886.9 1059.9L888.4 1054.4M951.3 1061.6L953.1 1056.1M992.6 1053.7L994.6 1048.2M1032.2 1019.1L1034.4 1013.5M1071.4 984L1073.7 978.4M1109.3 950L1111.8 944.4M1146 917.1L1148.6 911.5M1181.7 885.1L1184.4 879.5" stroke="#e80000" stroke-width="4.5" stroke-linecap="round"/><polygon points="182.4,839.9 206.4,840.5 203.6,825.7 179.4,825.2" fill="#e00000"/><polygon points="182.4,839.9 188.6,816.8 185.7,802 179.4,825.2" fill="#a80000"/><polygon points="206.4,840.5 212.3,817.3 209.6,802.6 203.6,825.7" fill="#a80000"/><polygon points="179.4,825.2 203.6,825.7 209.6,802.6 185.7,802" fill="#f00000"/><polygon points="387.4,850.7 412.6,851.3 411.6,839.1 386.3,838.5" fill="#00b0ee"/><polygon points="387.4,850.7 393.2,815.8 392.1,803.7 386.3,838.5" fill="#0090c8"/><polygon points="412.6,851.3 418,816.4 417,804.3 411.6,839.1" fill="#0090c8"/><polygon points="386.3,838.5 411.6,839.1 417,804.3 392.1,803.7" fill="#00bfff"/><polygon points="1410.9,874.8 1431.6,875.3 1437,863.3 1416.1,862.8" fill="#00b0ee"/><polygon points="1410.9,874.8 1399.2,839.2 1404.3,827.1 1416.1,862.8" fill="#0090c8"/><polygon points="1431.6,875.3 1419.6,839.7 1424.8,827.6 1437,863.3" fill="#0090c8"/><polygon points="1416.1,862.8 1437,863.3 1424.8,827.6 1404.3,827.1" fill="#00bfff"/><polygon points="747.6,946.9 769,947.4 770.3,935.4 748.8,934.8" fill="#00b0ee"/><polygon points="747.6,946.9 747.3,907.2 748.4,895.1 748.8,934.8" fill="#0090c8"/><polygon points="769,947.4 768.3,907.7 769.5,895.6 770.3,935.4" fill="#0090c8"/><polygon points="748.8,934.8 770.3,935.4 769.5,895.6 748.4,895.1" fill="#00bfff"/><polygon points="790.8,1037.3 813,1037.9 814.7,1026 792.3,1025.4" fill="#00b0ee"/><polygon points="790.8,1037.3 789.6,994.2 791,982.2 792.3,1025.4" fill="#0090c8"/><polygon points="813,1037.9 811.4,994.8 813,982.8 814.7,1026" fill="#0090c8"/><polygon points="792.3,1025.4 814.7,1026 813,982.8 791,982.2" fill="#00bfff"/><polygon points="796,1107.2 818.9,1107.8 820.6,1096 797.5,1095.4" fill="#00b0ee"/><polygon points="796,1107.2 794.7,1061.4 796.2,1049.5 797.5,1095.4" fill="#0090c8"/><polygon points="818.9,1107.8 817.2,1062 818.8,1050.1 820.6,1096" fill="#0090c8"/><polygon points="797.5,1095.4 820.6,1096 818.8,1050.1 796.2,1049.5" fill="#00bfff"/><g transform="rotate(1.2 840 1215)"><rect x="768" y="1198" width="146" height="33" rx="16.5" fill="#00bfff" stroke="#28484e" stroke-width="1.6"/><path d="M786 1206 L800 1206 M785 1207 L785 1222 M786 1214 Q800 1210 801 1222" stroke="#0a2a3a" stroke-width="2.2" fill="none"/><g fill="#c9a373" stroke="#8a6a40" stroke-width="0.8"><rect x="779" y="1202" width="8" height="8"/><rect x="797" y="1202" width="8" height="8"/><rect x="779" y="1218" width="8" height="8"/><rect x="798" y="1218" width="8" height="8"/></g><text x="810" y="1220" font-family="Liberation Sans" font-size="15.8" fill="#000">Flow Control</text></g><g fill="none" stroke-width="1.3"><path d="M1326.2 1368.6L1301.8 1262M1290.2 1278.7L1301.8 1262L1320.6 1280M1281.2 1211L1299.2 1211L1288.4 1244.5L1307 1245.2" stroke="#3c3ca0"/><path d="M1326.2 1368.6L1359.1 1313.4M1349.9 1308.7L1359.1 1313.4L1357 1338.6M1364.8 1304.4L1371 1294.5L1374.3 1275.6M1371 1294.5L1379 1294.6" stroke="#b04040"/><path d="M1326.2 1368.6L1444.5 1372.5M1421.3 1357.6L1444.5 1372.5L1429.8 1386.1M1462 1364L1497 1380.2M1467.6 1382.8L1497 1367.4" stroke="#40a040"/></g><polygon points="0,1207 84,1209 105,1330 85,1392 0,1392" fill="#8c9096" fill-opacity="0.55"/><path d="M79 1212L66 1320L72 1392M0 1320L66 1321" stroke="#9a9a9a" stroke-width="4" fill="none"/><path d="M0 1207L84 1209L105 1330L85 1392M0 1327L105 1330" stroke="#cdcdcd" stroke-width="7" fill="none"/></svg></div>
<div class="r" style="left:1497px;top:0px;width:1660px;height:76px;background:#fff;"></div><div class="r" style="left:1497px;top:0px;width:3px;height:1392px;background:#d3d3d3;"></div><div class="r" style="left:1500px;top:0px;width:10px;height:1392px;background:#fff;"></div><div class="r" style="left:1510px;top:0px;width:3px;height:1392px;background:#d3d3d3;"></div><div class="r" style="left:1513px;top:76px;width:30px;height:1316px;background:#fff;"></div><div class="t s" style="left:1559.0px;top:31.3px;color:#1e1e1e;font-size:31.2px;line-height:31.2px;">All</div><svg class="r" style="left:1616px;top:41px" width="17" height="10"><polygon points="0.5,0.5 16,0.5 8.2,9.5" fill="#333"/></svg><div class="r" style="left:1641px;top:16px;width:356px;height:55px;background:#fff;box-sizing:border-box;border:2.5px solid #ababab"></div><div class="t s" style="left:1654.0px;top:26.1px;color:#808080;font-size:28.2px;line-height:28.2px;">Search...</div><div class="r" style="left:1927px;top:20px;width:65px;height:45px;background:#e6e6e6;box-sizing:border-box;border:2px solid #a8a8a8"></div><svg class="r" style="left:1940px;top:24px" width="42" height="38"><circle cx="16" cy="14.5" r="11" fill="#63b5f7" stroke="#3c3c3c" stroke-width="3"/><path d="M10,10 Q16,5 22,10" fill="none" stroke="#d8ecff" stroke-width="1.5"/><line x1="24" y1="22.5" x2="35.5" y2="33.5" stroke="#2a3a3a" stroke-width="4.2"/></svg><div class="t s" style="left:2015.0px;top:33.2px;color:#1e1e1e;font-size:29.2px;line-height:29.2px;">Edit</div><div class="t s" style="left:2094.0px;top:33.2px;color:#1e1e1e;font-size:29.2px;line-height:29.2px;">View</div><div class="t s" style="left:2190.0px;top:33.2px;color:#1e1e1e;font-size:29.2px;line-height:29.2px;letter-spacing:1.6px">Debug</div><div class="r" style="left:1543px;top:76px;width:404px;height:1316px;background:#383838;box-shadow:inset 1px 1px 0 #262626"></div><div class="t s" style="left:1572.5px;top:118.1px;color:#fff;font-size:57.5px;line-height:57.5px;transform:scaleX(0.918);transform-origin:0 0;-webkit-text-stroke:1.4px #383838">Aspects</div><div class="t s" style="left:1566.5px;top:600.3px;color:#fff;font-size:57.5px;line-height:57.5px;transform:scaleX(0.96);transform-origin:0 0;-webkit-text-stroke:1.4px #383838">Bill Of Materials</div><div class="gb" style="left:1593px;top:191px;width:354px;height:62px;"></div><div class="t m" style="left:1606.9px;top:212.4px;color:#fff;font-size:27.5px;line-height:27.5px">[visual] [aspectType</div><div class="t s" style="left:1593.0px;top:263.8px;color:#9d9d9d;font-size:25px;line-height:25px;">Returns the aspect of the</div><div class="t s" style="left:1593.0px;top:296.6px;color:#9d9d9d;font-size:25px;line-height:25px;">given type from the given</div><div class="t s" style="left:1593.0px;top:329.4px;color:#9d9d9d;font-size:25px;line-height:25px;">Visual</div><div class="gb" style="left:1593px;top:378px;width:354px;height:62px;"></div><div class="t m" style="left:1606.9px;top:399.4px;color:#fff;font-size:27.5px;line-height:27.5px">my [aspectTypeName]</div><div class="t s" style="left:1593.0px;top:450.8px;color:#9d9d9d;font-size:25px;line-height:25px;">Returns the aspect of the</div><div class="t s" style="left:1593.0px;top:483.6px;color:#9d9d9d;font-size:25px;line-height:25px;">given type from the current</div><div class="t s" style="left:1593.0px;top:516.4px;color:#9d9d9d;font-size:25px;line-height:25px;">Visual</div><div class="gb" style="left:1593px;top:675px;width:354px;height:62px;"></div><div class="t m" style="left:1606.9px;top:696.4px;color:#fff;font-size:27.5px;line-height:27.5px">bill of materials co</div><div class="t s" style="left:1593.0px;top:747.8px;color:#9d9d9d;font-size:25px;line-height:25px;letter-spacing:0.6px">No description</div><div class="gb" style="left:1593px;top:795px;width:354px;height:62px;"></div><div class="t m" style="left:1606.9px;top:816.4px;color:#fff;font-size:27.5px;line-height:27.5px">bill of materials co</div><div class="t s" style="left:1593.0px;top:867.8px;color:#9d9d9d;font-size:25px;line-height:25px;letter-spacing:0.6px">No description</div><div class="gb" style="left:1593px;top:915px;width:354px;height:62px;"></div><div class="t m" style="left:1606.9px;top:936.4px;color:#fff;font-size:27.5px;line-height:27.5px">bill of materials de</div><div class="t s" style="left:1593.0px;top:987.8px;color:#9d9d9d;font-size:25px;line-height:25px;letter-spacing:0.6px">No description</div><div class="bb" style="left:1593px;top:1036px;width:354px;height:62px;"></div><div class="t m" style="left:1606.9px;top:1057.4px;color:#fff;font-size:27.5px;line-height:27.5px">set bill of material</div><div class="t s" style="left:1593.0px;top:1108.8px;color:#9d9d9d;font-size:25px;line-height:25px;letter-spacing:0.6px">No description</div><div class="bb" style="left:1593px;top:1156px;width:354px;height:62px;"></div><div class="t m" style="left:1606.9px;top:1177.4px;color:#fff;font-size:27.5px;line-height:27.5px">set bill of material</div><div class="t s" style="left:1593.0px;top:1228.8px;color:#9d9d9d;font-size:25px;line-height:25px;letter-spacing:0.6px">No description</div><div class="bb" style="left:1593px;top:1276px;width:354px;height:62px;"></div><div class="t m" style="left:1606.9px;top:1297.4px;color:#fff;font-size:27.5px;line-height:27.5px">set bill of material</div><div class="t s" style="left:1593.0px;top:1348.8px;color:#9d9d9d;font-size:25px;line-height:25px;letter-spacing:0.6px">No description</div><div class="r" style="left:1947px;top:76px;width:42px;height:1316px;background:#f0f0f0;"></div><div class="r" style="left:1989px;top:76px;width:8px;height:1316px;background:#dadada;"></div><div class="r" style="left:1947px;top:119px;width:42px;height:31px;background:#c0c0c0;"></div><svg class="r" style="left:1958px;top:89px" width="20" height="17"><polyline points="2,14.5 10,5 18,14.5" fill="none" stroke="#606060" stroke-width="4.2" stroke-linejoin="miter"/></svg><div class="r" style="left:1997px;top:76px;width:1120px;height:1308px;background:#383838;"></div><div class="r" style="left:3117px;top:76px;width:40px;height:1316px;background:#f0f0f0;"></div><div class="r" style="left:3117px;top:119px;width:40px;height:842px;background:#c0c0c0;"></div><svg class="r" style="left:3128px;top:89px" width="20" height="17"><polyline points="2,14.5 10,5 18,14.5" fill="none" stroke="#606060" stroke-width="4.2"/></svg><svg class="r" style="left:3128px;top:1354px" width="20" height="17"><polyline points="2,2.5 10,12 18,2.5" fill="none" stroke="#606060" stroke-width="4.2"/></svg><div class="r" style="left:1997px;top:1384px;width:1120px;height:8px;background:#f0f0f0;"></div><div class="r" style="left:1997px;top:1384px;width:1120px;height:3px;background:#d9d9d9;"></div><div class="r" style="left:1997px;top:1387px;width:200px;height:5px;background:#fff;"></div><div class="r" style="left:2248px;top:1387px;width:386px;height:5px;background:#c2c2c2;"></div><div class="clip" style="left:1997px;top:76px;width:1108px;height:1308px"><div class="r" style="left:112.0px;top:37.0px;width:600px;height:67px;background:#00008b;"></div><div class="r" style="left:114.0px;top:39.0px;width:596px;height:63px;background:#8b4513;"></div><div class="r" style="left:112.0px;top:102.0px;width:25px;height:317px;background:#00008b;"></div><div class="r" style="left:112.0px;top:394.0px;width:75px;height:25px;background:#00008b;"></div><div class="r" style="left:114.0px;top:102.0px;width:21px;height:315px;background:#8b4513;"></div><div class="r" style="left:114.0px;top:396.0px;width:71px;height:21px;background:#8b4513;"></div><div class="r" style="left:135.0px;top:102.0px;width:2px;height:294px;background:#00008b;"></div><div class="r" style="left:135.0px;top:102.0px;width:577px;height:2px;background:#00008b;"></div><svg class="r" style="left:116.0px;top:64.0px" width="16" height="15"><polygon points="0,15 16,15 16,0" fill="#fff"/></svg><div class="t m" style="left:138.8px;top:59.9px;color:#fff;font-size:27.5px;line-height:27.5px">procedure</div><div class="r" style="left:305.0px;top:51.0px;width:224px;height:40px;background:#a36a42;border-radius:5px"></div><div class="t m" style="left:308.5px;top:59.9px;color:#000;font-size:27.5px;line-height:27.5px">MainProcedure</div><div class="gb" style="left:552.0px;top:49.0px;width:109px;height:45px;"></div><div class="t m" style="left:557.5px;top:60.6px;color:#fff;font-size:27.5px;line-height:27.5px">sender</div><div class="bb" style="left:676.0px;top:45.0px;width:29px;height:52px;"></div><svg class="r" style="left:684.0px;top:63.0px" width="15" height="21"><polyline points="1.5,1.5 13.5,10.5 1.5,19.5" fill="none" stroke="#fff" stroke-width="2.6"/></svg><div class="au ga" style="left:137.0px;top:163.0px;width:25px;height:231px;"></div><div class="au gf" style="left:137.0px;top:369.0px;width:75px;height:25px;"></div><div class="au gh" style="left:137.0px;top:104.0px;width:300px;height:59px;"></div><svg class="r" style="left:141.7px;top:129.0px" width="15.300000000000182" height="15"><polygon points="0,15 15.300000000000182,15 15.300000000000182,0" fill="#000"/></svg><div class="t m" style="left:164.2px;top:123.3px;color:#000;font-size:27.5px;line-height:27.5px">repeat</div><div class="r" style="left:281.0px;top:114.0px;width:43px;height:40px;background:#e1b74d;border-radius:5px"></div><div class="t m" style="left:286.7px;top:123.3px;color:#000;font-size:27.5px;line-height:27.5px">50</div><div class="t m" style="left:340.9px;top:123.3px;color:#000;font-size:27.5px;line-height:27.5px">times</div><div class="bb" style="left:162.0px;top:164.0px;width:710px;height:80px;"></div><div class="t m" style="left:173.5px;top:193.9px;color:#fff;font-size:27.5px;line-height:27.5px">var</div><div class="r" style="left:241.0px;top:184.0px;width:76px;height:40px;background:#6a88e6;border-radius:5px"></div><div class="t m" style="left:246.5px;top:192.9px;color:#000;font-size:27.5px;line-height:27.5px">load</div><div class="t m" style="left:334.5px;top:193.9px;color:#fff;font-size:27.5px;line-height:27.5px">=</div><div class="gb" style="left:367.0px;top:172.0px;width:446px;height:65px;"></div><div class="t m" style="left:378.3px;top:193.9px;color:#fff;font-size:27.5px;line-height:27.5px">order load from</div><div class="gb" style="left:642.0px;top:180.0px;width:157px;height:50px;"></div><div class="t m" style="left:652.9px;top:193.9px;color:#fff;font-size:27.5px;line-height:27.5px">my Start</div><div class="gb" style="left:836.0px;top:172.0px;width:29px;height:65px;"></div><svg class="r" style="left:843.0px;top:194.0px" width="15" height="21"><polyline points="1.5,1.5 13.5,10.5 1.5,19.5" fill="none" stroke="#fff" stroke-width="2.6"/></svg><div class="bb" style="left:162.0px;top:244.0px;width:314px;height:65px;"></div><div class="t m" style="left:174.1px;top:266.4px;color:#fff;font-size:27.5px;line-height:27.5px">recirculate</div><div class="gb" style="left:371.0px;top:252.0px;width:91px;height:50px;"></div><div class="t m" style="left:383.5px;top:266.4px;color:#fff;font-size:27.5px;line-height:27.5px">load</div><div class="bb" style="left:162.0px;top:309.0px;width:219px;height:60px;"></div><div class="t m" style="left:172.8px;top:328.9px;color:#fff;font-size:27.5px;line-height:27.5px">wait</div><div class="r" style="left:258.0px;top:319.0px;width:26px;height:40px;background:#6a88e6;border-radius:5px"></div><div class="t m" style="left:263.1px;top:328.9px;color:#000;font-size:27.5px;line-height:27.5px">5</div><div class="t m" style="left:302.2px;top:328.9px;color:#fff;font-size:27.5px;line-height:27.5px">secs</div><div class="r" style="left:112.0px;top:444.0px;width:873px;height:67px;background:#00008b;"></div><div class="r" style="left:114.0px;top:446.0px;width:869px;height:63px;background:#8b4513;"></div><div class="r" style="left:112.0px;top:509.0px;width:25px;height:470px;background:#00008b;"></div><div class="r" style="left:112.0px;top:953.5px;width:75px;height:25.5px;background:#00008b;"></div><div class="r" style="left:114.0px;top:509.0px;width:21px;height:468px;background:#8b4513;"></div><div class="r" style="left:114.0px;top:955.5px;width:71px;height:21.5px;background:#8b4513;"></div><div class="r" style="left:135.0px;top:509.0px;width:2px;height:446.5px;background:#00008b;"></div><div class="r" style="left:135.0px;top:509.0px;width:850px;height:2px;background:#00008b;"></div><div class="r" style="left:135.0px;top:953.5px;width:52px;height:2.0px;background:#00008b;"></div><svg class="r" style="left:116.2px;top:471.3px" width="15.800000000000182" height="14.900000000000091"><polygon points="0,14.900000000000091 15.800000000000182,14.900000000000091 15.800000000000182,0" fill="#fff"/></svg><div class="t m" style="left:137.5px;top:466.0px;color:#fff;font-size:27.5px;line-height:27.5px">thread</div><div class="r" style="left:256.0px;top:458.0px;width:455px;height:40px;background:#a36a42;border-radius:5px"></div><div class="t m" style="left:260.8px;top:466.0px;color:#000;font-size:27.5px;line-height:27.5px">recirculate {load : Visual}</div><div class="gb" style="left:734.0px;top:456.0px;width:109px;height:45px;"></div><div class="t m" style="left:739.5px;top:466.9px;color:#fff;font-size:27.5px;line-height:27.5px">sender</div><div class="gb" style="left:858.0px;top:456.0px;width:76px;height:45px;"></div><div class="t m" style="left:863.5px;top:466.9px;color:#fff;font-size:27.5px;line-height:27.5px">load</div><div class="bb" style="left:949.0px;top:452.0px;width:29px;height:52px;"></div><svg class="r" style="left:957.0px;top:470.0px" width="15" height="21"><polyline points="1.5,1.5 13.5,10.5 1.5,19.5" fill="none" stroke="#fff" stroke-width="2.6"/></svg><div class="bb" style="left:137.0px;top:511.0px;width:472px;height:65px;"></div><div class="t m" style="left:148.8px;top:533.3px;color:#fff;font-size:27.5px;line-height:27.5px">convey</div><div class="gb" style="left:264.0px;top:519.0px;width:91px;height:50px;"></div><div class="t m" style="left:276.5px;top:533.3px;color:#fff;font-size:27.5px;line-height:27.5px">load</div><div class="t m" style="left:371.1px;top:533.3px;color:#fff;font-size:27.5px;line-height:27.5px">to</div><div class="gb" style="left:421.0px;top:519.0px;width:173px;height:50px;"></div><div class="t m" style="left:431.5px;top:533.3px;color:#fff;font-size:27.5px;line-height:27.5px">my Recirc</div><div class="bb" style="left:137.0px;top:576.0px;width:799px;height:68px;"></div><div class="t m" style="left:148.5px;top:597.9px;color:#fff;font-size:27.5px;line-height:27.5px">var</div><div class="r" style="left:216.0px;top:590.0px;width:208px;height:40px;background:#6a88e6;border-radius:5px"></div><div class="t m" style="left:220.5px;top:597.9px;color:#000;font-size:27.5px;line-height:27.5px">processPoint</div><div class="t m" style="left:442.2px;top:597.9px;color:#fff;font-size:27.5px;line-height:27.5px">=</div><div class="gb" style="left:474.0px;top:585.0px;width:404px;height:50px;"></div><div class="t m" style="left:485.5px;top:597.9px;color:#fff;font-size:27.5px;line-height:27.5px">available process point</div><div class="gb" style="left:900.0px;top:584.0px;width:29px;height:52px;"></div><svg class="r" style="left:907.0px;top:605.0px" width="15" height="21"><polyline points="1.5,1.5 13.5,10.5 1.5,19.5" fill="none" stroke="#fff" stroke-width="2.6"/></svg><div class="au ga" style="left:137.0px;top:723.0px;width:25px;height:90px;"></div><div class="au gf" style="left:137.0px;top:788.5px;width:74px;height:24.5px;"></div><div class="au gh" style="left:137.0px;top:644.0px;width:470px;height:79px;"></div><svg class="r" style="left:141.5px;top:678.8px" width="15.5" height="14.200000000000045"><polygon points="0,14.200000000000045 15.5,14.200000000000045 15.5,0" fill="#000"/></svg><div class="t m" style="left:164.2px;top:673.9px;color:#000;font-size:27.5px;line-height:27.5px">if</div><div class="gb" style="left:213.0px;top:652.0px;width:381px;height:65px;"></div><div class="gb" style="left:225.0px;top:660.0px;width:223px;height:50px;"></div><div class="t m" style="left:235.5px;top:673.9px;color:#fff;font-size:27.5px;line-height:27.5px">processPoint</div><div class="t m" style="left:465.7px;top:673.9px;color:#fff;font-size:27.5px;line-height:27.5px">is null</div><div class="bb" style="left:162.0px;top:724.0px;width:313px;height:64.5px;"></div><div class="t m" style="left:174.1px;top:746.9px;color:#fff;font-size:27.5px;line-height:27.5px">recirculate</div><div class="gb" style="left:371.0px;top:732.0px;width:91px;height:50px;"></div><div class="t m" style="left:383.5px;top:746.9px;color:#fff;font-size:27.5px;line-height:27.5px">load</div><div class="au ga" style="left:137.0px;top:863.0px;width:25px;height:90.5px;"></div><div class="au gf" style="left:137.0px;top:928.5px;width:74px;height:25.0px;"></div><div class="au gh" style="left:137.0px;top:814.0px;width:106px;height:49px;"></div><svg class="r" style="left:141.0px;top:834.0px" width="16" height="15"><polygon points="0,15 16,15 16,0" fill="#000"/></svg><div class="t m" style="left:163.5px;top:828.9px;color:#000;font-size:27.5px;line-height:27.5px">else</div><div class="bb" style="left:162.0px;top:864.0px;width:537px;height:64.5px;"></div><div class="t m" style="left:173.3px;top:886.9px;color:#fff;font-size:27.5px;line-height:27.5px">process</div><div class="gb" style="left:305.0px;top:872.0px;width:91px;height:50px;"></div><div class="t m" style="left:317.5px;top:886.9px;color:#fff;font-size:27.5px;line-height:27.5px">load</div><div class="t m" style="left:413.1px;top:886.9px;color:#fff;font-size:27.5px;line-height:27.5px">at</div><div class="gb" style="left:462.0px;top:872.0px;width:223px;height:50px;"></div><div class="t m" style="left:473.5px;top:886.9px;color:#fff;font-size:27.5px;line-height:27.5px">processPoint</div><div class="r" style="left:112.0px;top:1004.0px;width:1031px;height:67px;background:#00008b;"></div><div class="r" style="left:114.0px;top:1006.0px;width:1027px;height:63px;background:#8b4513;"></div><div class="r" style="left:112.0px;top:1069.0px;width:25px;height:375px;background:#00008b;"></div><div class="r" style="left:112.0px;top:1424.0px;width:75px;height:20px;background:#00008b;"></div><div class="r" style="left:114.0px;top:1069.0px;width:21px;height:373px;background:#8b4513;"></div><div class="r" style="left:114.0px;top:1426.0px;width:71px;height:16px;background:#8b4513;"></div><div class="r" style="left:135.0px;top:1069.0px;width:2px;height:255px;background:#00008b;"></div><div class="r" style="left:135.0px;top:1069.0px;width:1008px;height:2px;background:#00008b;"></div><svg class="r" style="left:116.0px;top:1032.0px" width="16" height="15"><polygon points="0,15 16,15 16,0" fill="#fff"/></svg><div class="t m" style="left:138.0px;top:1025.8px;color:#fff;font-size:27.5px;line-height:27.5px">procedure</div><div class="r" style="left:305.0px;top:1018.0px;width:719px;height:40px;background:#a36a42;border-radius:5px"></div><div class="t m" style="left:309.7px;top:1025.9px;color:#000;font-size:27.5px;line-height:27.5px">process {load : Visual} at {point : Visual}</div><div class="gb" style="left:1047.0px;top:1016.0px;width:106px;height:45px;"></div><div class="t m" style="left:1052.8px;top:1027.9px;color:#fff;font-size:27.5px;line-height:27.5px">sender</div><div class="bb" style="left:137.0px;top:1070.0px;width:594px;height:81px;"></div><div class="t m" style="left:149.7px;top:1100.3px;color:#fff;font-size:27.5px;line-height:27.5px">increment</div><div class="gb" style="left:313.0px;top:1079.0px;width:310px;height:64px;"></div><div class="gb" style="left:325.0px;top:1087.0px;width:107px;height:49px;"></div><div class="t m" style="left:336.5px;top:1100.3px;color:#fff;font-size:27.5px;line-height:27.5px">point</div><div class="t m" style="left:450.5px;top:1100.3px;color:#fff;font-size:27.5px;line-height:27.5px">.</div><div class="r" style="left:483.0px;top:1092.0px;width:125px;height:40px;background:#5bd75b;border-radius:5px"></div><div class="t m" style="left:488.5px;top:1100.3px;color:#000;font-size:27.5px;line-height:27.5px">InQueue</div><div class="t m" style="left:638.9px;top:1100.3px;color:#fff;font-size:27.5px;line-height:27.5px">by</div><div class="r" style="left:690.0px;top:1091.0px;width:26px;height:40px;background:#6a88e6;border-radius:5px"></div><div class="t m" style="left:694.5px;top:1100.3px;color:#000;font-size:27.5px;line-height:27.5px">1</div><div class="bb" style="left:137.0px;top:1151.0px;width:546px;height:79px;"></div><div class="t m" style="left:149.5px;top:1179.9px;color:#fff;font-size:27.5px;line-height:27.5px">convey</div><div class="gb" style="left:264.0px;top:1167.0px;width:91px;height:49px;"></div><div class="t m" style="left:276.5px;top:1179.9px;color:#fff;font-size:27.5px;line-height:27.5px">load</div><div class="t m" style="left:372.0px;top:1179.9px;color:#fff;font-size:27.5px;line-height:27.5px">to</div><div class="gb" style="left:421.0px;top:1159.0px;width:248px;height:65px;"></div><div class="t m" style="left:432.5px;top:1179.9px;color:#fff;font-size:27.5px;line-height:27.5px">visual</div><div class="gb" style="left:548.0px;top:1167.0px;width:107px;height:49px;"></div><div class="t m" style="left:559.5px;top:1179.9px;color:#fff;font-size:27.5px;line-height:27.5px">point</div><div class="bb" style="left:137.0px;top:1230.0px;width:422px;height:65px;"></div><div class="t m" style="left:149.5px;top:1252.9px;color:#fff;font-size:27.5px;line-height:27.5px">convey</div><div class="gb" style="left:264.0px;top:1239.0px;width:90px;height:50px;"></div><div class="t m" style="left:276.5px;top:1252.9px;color:#fff;font-size:27.5px;line-height:27.5px">load</div><div class="t m" style="left:372.0px;top:1252.9px;color:#fff;font-size:27.5px;line-height:27.5px">to</div><div class="gb" style="left:421.0px;top:1239.0px;width:123px;height:50px;"></div><div class="t m" style="left:432.5px;top:1252.9px;color:#fff;font-size:27.5px;line-height:27.5px">my End</div><div class="bb" style="left:137.0px;top:1295.0px;width:231px;height:79px;"></div><div class="gb" style="left:264.0px;top:1304.0px;width:90px;height:50px;"></div></div>
</body></html>
